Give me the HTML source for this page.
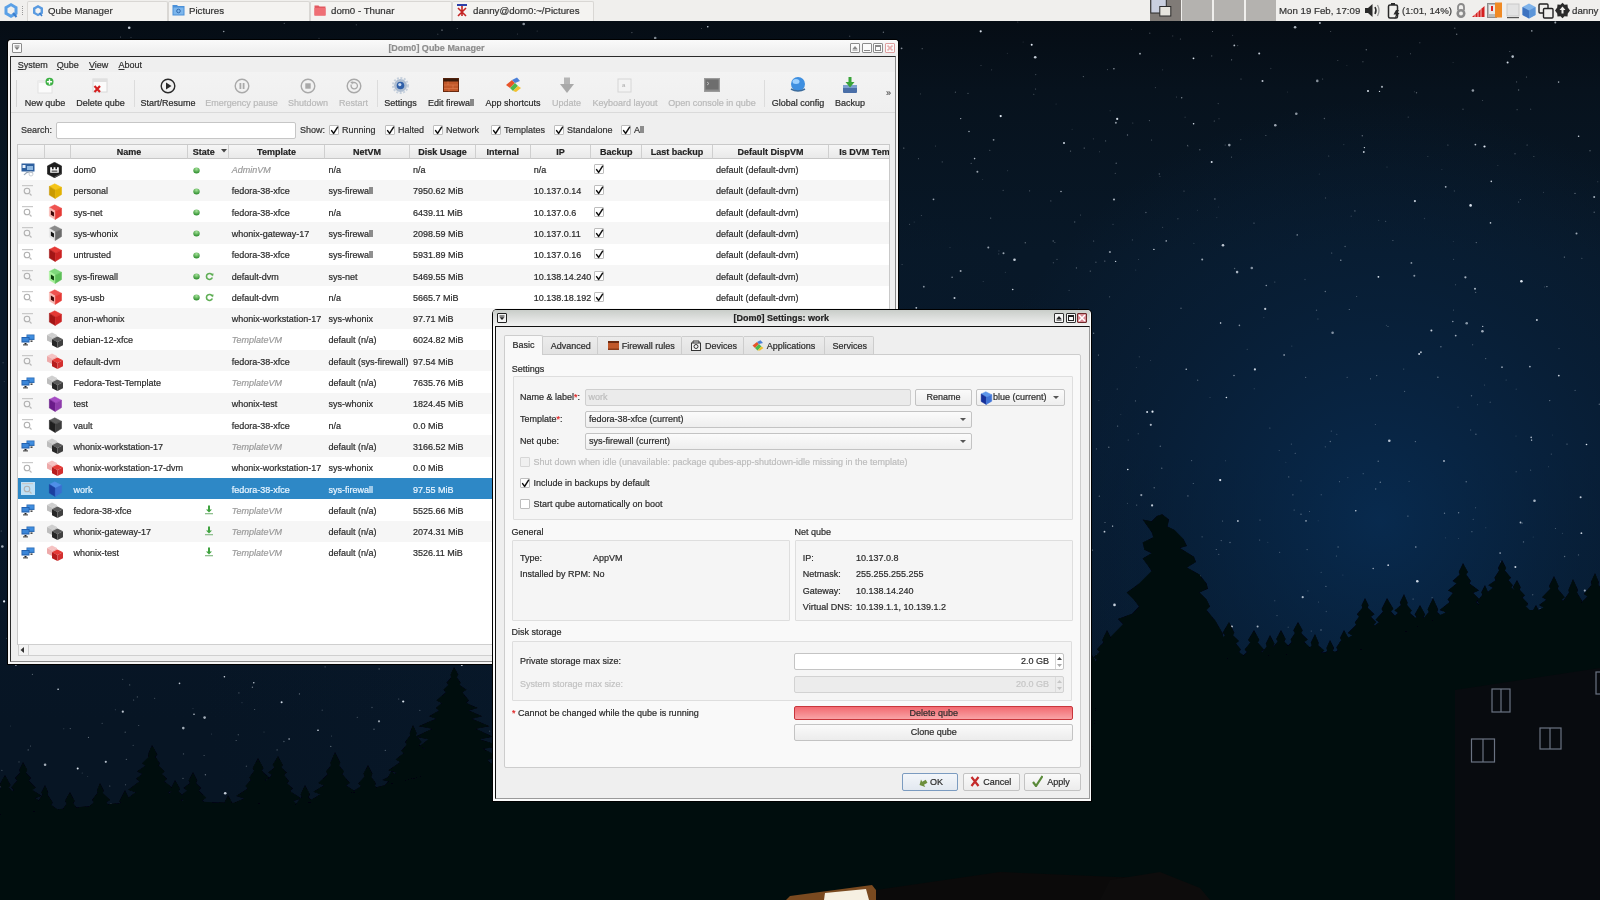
<!DOCTYPE html>
<html><head><meta charset="utf-8"><title>Qubes</title><style>
*{margin:0;padding:0;box-sizing:border-box}
html,body{width:1600px;height:900px;overflow:hidden;background:#070d15}
body{position:relative;font-family:"Liberation Sans",sans-serif;font-size:9px;color:#2b2b2b}
#ui{-webkit-text-stroke:0.2px currentColor}
#bg{position:absolute;left:0;top:0}
.a{position:absolute;white-space:nowrap}
svg{display:block}
/* taskbar */
#tb{position:absolute;left:0;top:0;width:1600px;height:21px;background:#f0efed;}
.tbb{position:absolute;top:1px;height:20px;background:#f4f3f1;border:1px solid #d9d7d4;border-bottom:none;border-radius:2px 2px 0 0}
.tbt{position:absolute;top:5px;font-size:9.7px;color:#333;white-space:nowrap}
/* windows */
.win{position:absolute;background:#f9f9f9;border:1px solid #1b1b1b;border-radius:4px 4px 0 0}
.ttl{position:absolute;left:0;right:0;top:0;height:16px;background:linear-gradient(#fbfbfb,#eeeeee)}
.inner{position:absolute;background:#efefef;border:1px solid #141414;border-bottom-color:#7a7a7a;border-right-color:#555}
.tbtn{position:absolute;width:10px;height:10px;border:1px solid #8a8a8a;border-radius:1px;background:#fbfbfb}
.menu span{position:absolute;top:3px;font-size:9.6px;color:#2e2e2e}
.tool{position:absolute;top:0;height:41px}
.tl{position:absolute;top:25px;font-size:9px;color:#2b2b2b;white-space:nowrap;transform:translateX(-50%)}
.tl.d{color:#b9b9b9}
.ico{position:absolute;top:5px;transform:translateX(-50%)}
.hdr{position:absolute;top:0;height:14.5px;background:linear-gradient(#f6f6f6,#e9e9e9);border-right:1px solid #cfcfcf;border-bottom:1px solid #c7c7c7;font-weight:bold;font-size:9px;color:#222;text-align:center;line-height:14px}
.row{position:absolute;left:0;width:871px;height:21.3px}
.row.alt{background:#f6f6f6}
.row.sel{background:#2e88c6;color:#e9f5ff}
.c{position:absolute;top:6.5px;font-size:9px;white-space:nowrap}
.it{font-style:italic;color:#9a9a9a}
.sel .it{color:#cfe6f7}
.chk{position:absolute;width:10px;height:10px;border:1px solid #bdbdbd;background:#fff;border-radius:1px}
.chk svg{position:absolute;left:0;top:0}
.lbl{position:absolute;font-size:9px;color:#2b2b2b;white-space:nowrap}
.grp{position:absolute;border:1px solid #dedede;background:#f5f5f5;border-radius:1px}
.btn{position:absolute;border:1px solid #c3c3c3;border-radius:2px;background:linear-gradient(#fafafa,#ececec);font-size:9px;color:#2b2b2b;text-align:center}
.combo{position:absolute;border:1px solid #c3c3c3;border-radius:2px;background:linear-gradient(#fbfbfb,#eeeeee);font-size:9px;color:#2b2b2b}
.arr{position:absolute;width:0;height:0;border-left:3.5px solid transparent;border-right:3.5px solid transparent;border-top:4px solid #4a4a4a}
</style></head>
<body>
<svg id="bg" width="1600" height="900" viewBox="0 0 1600 900">
<defs>
<linearGradient id="sky" x1="0" y1="0" x2="0" y2="900" gradientUnits="userSpaceOnUse">
<stop offset="0" stop-color="#050b12"/><stop offset="0.1" stop-color="#07121d"/><stop offset="0.28" stop-color="#081828"/><stop offset="0.5" stop-color="#08182a"/><stop offset="0.8" stop-color="#071524"/><stop offset="1" stop-color="#071524"/>
</linearGradient>
<radialGradient id="glow" cx="1380" cy="520" r="420" gradientUnits="userSpaceOnUse">
<stop offset="0" stop-color="#082c52" stop-opacity="0.9"/><stop offset="0.6" stop-color="#08284a" stop-opacity="0.35"/><stop offset="1" stop-color="#0b2a4c" stop-opacity="0"/>
</radialGradient>
<radialGradient id="glow2" cx="700" cy="650" r="500" gradientUnits="userSpaceOnUse">
<stop offset="0" stop-color="#0a2440" stop-opacity="0.25"/><stop offset="1" stop-color="#0a2440" stop-opacity="0"/>
</radialGradient>
<filter id="soft" x="-5%" y="-5%" width="110%" height="110%"><feGaussianBlur stdDeviation="0.7"/></filter></defs>
<rect width="1600" height="900" fill="url(#sky)"/>
<rect width="1600" height="900" fill="url(#glow2)"/>
<rect width="1600" height="900" fill="url(#glow)"/>
<g fill="#e6eef8"><circle cx="1023.1" cy="42.0" r="0.5" fill-opacity="0.19"/><circle cx="164.0" cy="613.1" r="0.7" fill-opacity="0.28"/><circle cx="47.7" cy="196.5" r="0.5" fill-opacity="0.32"/><circle cx="1145.6" cy="581.7" r="0.6" fill-opacity="0.33"/><circle cx="1295.1" cy="27.2" r="1.3" fill-opacity="0.74"/><circle cx="444.6" cy="193.8" r="0.7" fill-opacity="0.59"/><circle cx="154.7" cy="698.3" r="0.5" fill-opacity="0.37"/><circle cx="858.0" cy="798.5" r="0.7" fill-opacity="0.24"/><circle cx="1005.8" cy="728.6" r="0.5" fill-opacity="0.36"/><circle cx="73.3" cy="203.9" r="0.5" fill-opacity="0.41"/><circle cx="1386.4" cy="325.3" r="0.6" fill-opacity="0.20"/><circle cx="568.4" cy="556.8" r="0.7" fill-opacity="0.34"/><circle cx="974.6" cy="158.6" r="0.8" fill-opacity="0.76"/><circle cx="431.9" cy="760.5" r="0.5" fill-opacity="0.36"/><circle cx="1348.6" cy="641.2" r="0.5" fill-opacity="0.39"/><circle cx="641.9" cy="74.8" r="1.1" fill-opacity="0.94"/><circle cx="503.5" cy="545.0" r="0.7" fill-opacity="0.29"/><circle cx="423.8" cy="218.8" r="0.6" fill-opacity="0.37"/><circle cx="685.5" cy="487.7" r="0.5" fill-opacity="0.30"/><circle cx="145.5" cy="59.6" r="0.7" fill-opacity="0.20"/><circle cx="1088.8" cy="497.9" r="0.7" fill-opacity="0.45"/><circle cx="846.6" cy="796.9" r="0.7" fill-opacity="0.86"/><circle cx="183.3" cy="728.1" r="1.3" fill-opacity="0.70"/><circle cx="469.6" cy="148.2" r="0.7" fill-opacity="0.41"/><circle cx="421.4" cy="421.5" r="0.5" fill-opacity="0.41"/><circle cx="477.5" cy="531.9" r="0.5" fill-opacity="0.26"/><circle cx="258.5" cy="782.9" r="0.7" fill-opacity="0.82"/><circle cx="781.8" cy="111.3" r="0.6" fill-opacity="0.22"/><circle cx="385.4" cy="474.8" r="0.7" fill-opacity="0.30"/><circle cx="110.7" cy="629.0" r="0.8" fill-opacity="0.85"/><circle cx="1515.0" cy="153.8" r="0.7" fill-opacity="0.28"/><circle cx="338.9" cy="452.4" r="0.8" fill-opacity="0.87"/><circle cx="638.4" cy="558.0" r="0.7" fill-opacity="0.29"/><circle cx="396.6" cy="73.1" r="0.7" fill-opacity="0.22"/><circle cx="352.3" cy="78.7" r="0.5" fill-opacity="0.17"/><circle cx="50.3" cy="285.7" r="0.6" fill-opacity="0.35"/><circle cx="342.8" cy="127.6" r="1.1" fill-opacity="0.81"/><circle cx="388.8" cy="399.4" r="0.5" fill-opacity="0.18"/><circle cx="689.7" cy="360.0" r="0.7" fill-opacity="0.17"/><circle cx="1045.5" cy="537.7" r="0.7" fill-opacity="0.25"/><circle cx="1378.7" cy="220.4" r="0.6" fill-opacity="0.19"/><circle cx="293.6" cy="391.2" r="0.7" fill-opacity="0.75"/><circle cx="1378.2" cy="461.2" r="0.7" fill-opacity="0.40"/><circle cx="1550.4" cy="761.2" r="0.8" fill-opacity="0.73"/><circle cx="770.2" cy="712.0" r="0.8" fill-opacity="0.72"/><circle cx="1576.5" cy="233.6" r="1.0" fill-opacity="0.68"/><circle cx="1114.5" cy="604.9" r="1.3" fill-opacity="0.87"/><circle cx="247.7" cy="258.8" r="1.1" fill-opacity="0.88"/><circle cx="97.5" cy="272.3" r="0.6" fill-opacity="0.30"/><circle cx="1364.4" cy="147.6" r="0.7" fill-opacity="0.93"/><circle cx="109.6" cy="76.2" r="1.0" fill-opacity="0.60"/><circle cx="1424.5" cy="218.5" r="0.7" fill-opacity="0.17"/><circle cx="1051.8" cy="473.1" r="0.6" fill-opacity="0.21"/><circle cx="1145.9" cy="212.5" r="0.7" fill-opacity="0.34"/><circle cx="731.6" cy="763.4" r="0.7" fill-opacity="0.76"/><circle cx="1597.5" cy="816.9" r="0.5" fill-opacity="0.30"/><circle cx="211.9" cy="300.5" r="0.5" fill-opacity="0.26"/><circle cx="252.4" cy="687.3" r="0.7" fill-opacity="0.45"/><circle cx="1291.4" cy="444.1" r="0.7" fill-opacity="0.24"/><circle cx="1061.4" cy="771.3" r="0.5" fill-opacity="0.42"/><circle cx="1187.9" cy="146.0" r="0.5" fill-opacity="0.37"/><circle cx="325.8" cy="528.1" r="0.6" fill-opacity="0.23"/><circle cx="1453.1" cy="62.5" r="0.6" fill-opacity="0.16"/><circle cx="533.7" cy="126.4" r="0.8" fill-opacity="0.88"/><circle cx="882.7" cy="363.3" r="0.5" fill-opacity="0.43"/><circle cx="1105.6" cy="140.9" r="0.6" fill-opacity="0.32"/><circle cx="237.0" cy="123.7" r="0.5" fill-opacity="0.42"/><circle cx="336.1" cy="221.1" r="0.7" fill-opacity="0.42"/><circle cx="650.2" cy="517.3" r="0.5" fill-opacity="0.41"/><circle cx="1561.9" cy="669.0" r="0.7" fill-opacity="0.63"/><circle cx="1479.2" cy="646.3" r="0.7" fill-opacity="0.41"/><circle cx="1297.2" cy="234.9" r="0.7" fill-opacity="0.72"/><circle cx="62.0" cy="397.6" r="0.6" fill-opacity="0.25"/><circle cx="1312.9" cy="717.3" r="0.7" fill-opacity="0.21"/><circle cx="525.2" cy="711.8" r="0.9" fill-opacity="0.71"/><circle cx="815.0" cy="564.3" r="0.9" fill-opacity="0.97"/><circle cx="184.5" cy="796.4" r="0.6" fill-opacity="0.16"/><circle cx="954.5" cy="297.9" r="1.0" fill-opacity="0.82"/><circle cx="818.3" cy="329.4" r="0.6" fill-opacity="0.16"/><circle cx="697.7" cy="436.9" r="1.3" fill-opacity="0.87"/><circle cx="1187.1" cy="557.2" r="0.5" fill-opacity="0.43"/><circle cx="1473.2" cy="519.3" r="0.5" fill-opacity="0.37"/><circle cx="480.5" cy="268.8" r="0.6" fill-opacity="0.36"/><circle cx="887.1" cy="175.1" r="0.6" fill-opacity="0.35"/><circle cx="1444.5" cy="513.2" r="0.7" fill-opacity="0.40"/><circle cx="486.2" cy="189.7" r="1.1" fill-opacity="0.84"/><circle cx="744.0" cy="374.8" r="0.6" fill-opacity="0.39"/><circle cx="1535.7" cy="609.3" r="0.6" fill-opacity="0.30"/><circle cx="1012.7" cy="289.5" r="0.8" fill-opacity="0.85"/><circle cx="359.4" cy="180.9" r="0.5" fill-opacity="0.45"/><circle cx="978.0" cy="635.3" r="0.7" fill-opacity="0.32"/><circle cx="1149.4" cy="328.4" r="0.5" fill-opacity="0.35"/><circle cx="8.9" cy="621.3" r="0.7" fill-opacity="0.90"/><circle cx="350.1" cy="663.7" r="0.6" fill-opacity="0.17"/><circle cx="398.7" cy="699.0" r="0.6" fill-opacity="0.35"/><circle cx="1580.6" cy="497.2" r="1.0" fill-opacity="0.83"/><circle cx="1150.8" cy="424.8" r="1.1" fill-opacity="0.75"/><circle cx="254.7" cy="709.5" r="0.5" fill-opacity="0.40"/><circle cx="443.7" cy="642.6" r="0.5" fill-opacity="0.23"/><circle cx="124.0" cy="250.0" r="0.6" fill-opacity="0.42"/><circle cx="128.9" cy="142.4" r="0.5" fill-opacity="0.36"/><circle cx="102.8" cy="347.3" r="0.6" fill-opacity="0.17"/><circle cx="1332.6" cy="332.8" r="1.3" fill-opacity="0.56"/><circle cx="1409.1" cy="481.4" r="0.6" fill-opacity="0.24"/><circle cx="624.0" cy="733.5" r="1.1" fill-opacity="0.89"/><circle cx="873.8" cy="503.4" r="0.5" fill-opacity="0.23"/><circle cx="777.0" cy="332.3" r="0.6" fill-opacity="0.37"/><circle cx="1344.8" cy="755.8" r="1.1" fill-opacity="0.56"/><circle cx="630.4" cy="472.4" r="0.7" fill-opacity="0.28"/><circle cx="1387.0" cy="167.0" r="0.6" fill-opacity="0.21"/><circle cx="523.0" cy="629.5" r="0.6" fill-opacity="0.23"/><circle cx="131.0" cy="37.5" r="0.6" fill-opacity="0.22"/><circle cx="109.8" cy="785.9" r="0.5" fill-opacity="0.43"/><circle cx="319.0" cy="38.3" r="0.5" fill-opacity="0.29"/><circle cx="183.0" cy="778.3" r="0.6" fill-opacity="0.38"/><circle cx="268.5" cy="506.6" r="0.7" fill-opacity="0.90"/><circle cx="262.0" cy="270.2" r="0.6" fill-opacity="0.32"/><circle cx="1452.8" cy="321.5" r="0.8" fill-opacity="0.58"/><circle cx="1105.0" cy="522.5" r="0.6" fill-opacity="0.41"/><circle cx="960.7" cy="118.6" r="0.7" fill-opacity="0.71"/><circle cx="685.4" cy="317.7" r="0.6" fill-opacity="0.15"/><circle cx="672.1" cy="413.2" r="0.6" fill-opacity="0.34"/><circle cx="1325.9" cy="586.4" r="0.7" fill-opacity="0.31"/><circle cx="1040.7" cy="513.5" r="1.0" fill-opacity="0.76"/><circle cx="1321.2" cy="494.8" r="0.5" fill-opacity="0.40"/><circle cx="138.7" cy="725.5" r="0.6" fill-opacity="0.32"/><circle cx="1069.1" cy="290.4" r="0.6" fill-opacity="0.20"/><circle cx="339.4" cy="658.7" r="0.7" fill-opacity="0.36"/><circle cx="442.0" cy="30.1" r="0.7" fill-opacity="0.66"/><circle cx="650.3" cy="465.0" r="0.6" fill-opacity="0.34"/><circle cx="785.3" cy="654.8" r="0.5" fill-opacity="0.27"/><circle cx="389.3" cy="551.8" r="0.7" fill-opacity="0.31"/><circle cx="680.8" cy="617.3" r="0.7" fill-opacity="0.29"/><circle cx="490.6" cy="206.0" r="0.9" fill-opacity="0.60"/><circle cx="857.4" cy="630.2" r="0.5" fill-opacity="0.37"/><circle cx="442.4" cy="492.5" r="1.1" fill-opacity="0.68"/><circle cx="160.8" cy="176.9" r="0.5" fill-opacity="0.24"/><circle cx="1132.8" cy="123.0" r="0.5" fill-opacity="0.32"/><circle cx="1115.9" cy="122.8" r="1.0" fill-opacity="0.60"/><circle cx="19.6" cy="248.9" r="0.6" fill-opacity="0.21"/><circle cx="82.2" cy="773.0" r="0.5" fill-opacity="0.27"/><circle cx="118.5" cy="524.3" r="0.5" fill-opacity="0.39"/><circle cx="1518.6" cy="90.0" r="0.7" fill-opacity="0.38"/><circle cx="970.1" cy="653.0" r="0.7" fill-opacity="0.26"/><circle cx="1453.6" cy="259.3" r="0.6" fill-opacity="0.24"/><circle cx="993.6" cy="508.5" r="0.8" fill-opacity="0.83"/><circle cx="423.4" cy="86.8" r="0.7" fill-opacity="0.17"/><circle cx="4.3" cy="381.5" r="0.6" fill-opacity="0.16"/><circle cx="461.0" cy="247.6" r="0.7" fill-opacity="0.86"/><circle cx="1478.3" cy="650.7" r="0.7" fill-opacity="0.39"/><circle cx="316.5" cy="113.6" r="0.5" fill-opacity="0.42"/><circle cx="1322.6" cy="79.0" r="0.6" fill-opacity="0.33"/><circle cx="1318.8" cy="757.1" r="0.6" fill-opacity="0.36"/><circle cx="1119.6" cy="774.3" r="0.6" fill-opacity="0.28"/><circle cx="956.9" cy="731.8" r="1.1" fill-opacity="0.66"/><circle cx="146.1" cy="789.6" r="1.1" fill-opacity="0.81"/><circle cx="33.2" cy="632.3" r="1.1" fill-opacity="0.57"/><circle cx="1210.0" cy="397.5" r="0.6" fill-opacity="0.20"/><circle cx="936.5" cy="528.6" r="0.5" fill-opacity="0.29"/><circle cx="653.4" cy="278.2" r="0.5" fill-opacity="0.25"/><circle cx="1109.9" cy="252.0" r="1.1" fill-opacity="0.57"/><circle cx="140.9" cy="223.4" r="0.6" fill-opacity="0.41"/><circle cx="1319.9" cy="22.9" r="1.0" fill-opacity="0.74"/><circle cx="300.1" cy="310.7" r="1.3" fill-opacity="0.75"/><circle cx="82.6" cy="235.1" r="0.6" fill-opacity="0.28"/><circle cx="1117.2" cy="118.9" r="1.1" fill-opacity="0.91"/><circle cx="1135.7" cy="270.0" r="0.6" fill-opacity="0.18"/><circle cx="1587.6" cy="750.5" r="0.5" fill-opacity="0.34"/><circle cx="246.4" cy="766.3" r="0.7" fill-opacity="0.23"/><circle cx="1335.6" cy="804.2" r="0.7" fill-opacity="0.19"/><circle cx="305.0" cy="500.3" r="0.8" fill-opacity="0.94"/><circle cx="442.0" cy="652.4" r="0.7" fill-opacity="0.23"/><circle cx="4.1" cy="601.4" r="1.1" fill-opacity="1.00"/><circle cx="783.4" cy="140.6" r="0.6" fill-opacity="0.25"/><circle cx="1220.6" cy="323.0" r="0.8" fill-opacity="0.99"/><circle cx="382.1" cy="327.6" r="1.0" fill-opacity="0.57"/><circle cx="1191.5" cy="584.8" r="1.0" fill-opacity="0.99"/><circle cx="1267.8" cy="542.3" r="0.5" fill-opacity="0.19"/><circle cx="1544.6" cy="286.9" r="0.6" fill-opacity="0.18"/><circle cx="1456.7" cy="34.2" r="0.7" fill-opacity="0.44"/><circle cx="119.7" cy="645.7" r="0.7" fill-opacity="0.36"/><circle cx="1039.7" cy="701.7" r="1.1" fill-opacity="0.72"/><circle cx="506.7" cy="595.5" r="1.1" fill-opacity="0.57"/><circle cx="109.5" cy="525.7" r="0.8" fill-opacity="0.89"/><circle cx="694.4" cy="100.6" r="0.5" fill-opacity="0.28"/><circle cx="1110.4" cy="742.9" r="0.5" fill-opacity="0.24"/><circle cx="599.7" cy="138.2" r="0.7" fill-opacity="0.35"/><circle cx="288.1" cy="161.7" r="0.6" fill-opacity="0.34"/><circle cx="385.3" cy="750.4" r="0.6" fill-opacity="0.34"/><circle cx="735.3" cy="554.1" r="1.0" fill-opacity="0.96"/><circle cx="1084.2" cy="148.1" r="0.6" fill-opacity="0.45"/><circle cx="478.6" cy="789.7" r="0.6" fill-opacity="0.40"/><circle cx="318.7" cy="329.0" r="0.5" fill-opacity="0.26"/><circle cx="574.3" cy="258.1" r="0.5" fill-opacity="0.44"/><circle cx="1053.2" cy="241.0" r="0.7" fill-opacity="0.38"/><circle cx="1557.8" cy="748.7" r="0.9" fill-opacity="0.90"/><circle cx="368.2" cy="661.9" r="0.5" fill-opacity="0.34"/><circle cx="1084.4" cy="597.3" r="0.5" fill-opacity="0.34"/><circle cx="1445.4" cy="537.8" r="0.6" fill-opacity="0.16"/><circle cx="583.8" cy="126.9" r="0.9" fill-opacity="0.89"/><circle cx="281.0" cy="127.5" r="0.6" fill-opacity="0.31"/><circle cx="1461.6" cy="684.7" r="0.6" fill-opacity="0.44"/><circle cx="472.2" cy="716.6" r="1.0" fill-opacity="0.98"/><circle cx="225.2" cy="793.3" r="1.3" fill-opacity="0.85"/><circle cx="635.9" cy="696.9" r="0.5" fill-opacity="0.39"/><circle cx="22.3" cy="450.2" r="0.7" fill-opacity="0.37"/><circle cx="419.5" cy="326.1" r="0.6" fill-opacity="0.18"/><circle cx="374.1" cy="42.0" r="1.1" fill-opacity="0.70"/><circle cx="976.1" cy="538.8" r="0.6" fill-opacity="0.42"/><circle cx="483.5" cy="347.8" r="0.5" fill-opacity="0.24"/><circle cx="788.2" cy="99.6" r="0.8" fill-opacity="0.72"/><circle cx="593.6" cy="779.6" r="0.7" fill-opacity="0.28"/><circle cx="1187.6" cy="145.3" r="0.5" fill-opacity="0.40"/><circle cx="985.0" cy="771.4" r="0.7" fill-opacity="0.26"/><circle cx="709.4" cy="780.5" r="0.7" fill-opacity="0.99"/><circle cx="587.7" cy="741.6" r="0.5" fill-opacity="0.27"/><circle cx="303.7" cy="119.5" r="1.0" fill-opacity="0.59"/><circle cx="339.4" cy="532.3" r="0.7" fill-opacity="0.90"/><circle cx="389.7" cy="122.5" r="0.5" fill-opacity="0.40"/><circle cx="886.7" cy="489.9" r="0.8" fill-opacity="0.70"/><circle cx="236.1" cy="740.6" r="0.5" fill-opacity="0.45"/><circle cx="864.3" cy="659.2" r="0.5" fill-opacity="0.19"/><circle cx="573.2" cy="651.2" r="0.5" fill-opacity="0.20"/><circle cx="83.8" cy="613.9" r="0.7" fill-opacity="0.17"/><circle cx="717.2" cy="310.9" r="0.6" fill-opacity="0.30"/><circle cx="1512.7" cy="56.6" r="1.3" fill-opacity="0.78"/><circle cx="732.9" cy="791.3" r="0.6" fill-opacity="0.40"/><circle cx="682.0" cy="108.2" r="0.6" fill-opacity="0.17"/><circle cx="129.3" cy="507.4" r="0.6" fill-opacity="0.34"/><circle cx="936.6" cy="590.3" r="0.7" fill-opacity="0.31"/><circle cx="725.9" cy="505.1" r="0.7" fill-opacity="0.18"/><circle cx="1047.5" cy="722.4" r="0.5" fill-opacity="0.28"/><circle cx="1420.9" cy="352.2" r="1.0" fill-opacity="0.74"/><circle cx="152.1" cy="362.6" r="0.6" fill-opacity="0.44"/><circle cx="1098.9" cy="400.5" r="0.5" fill-opacity="0.18"/><circle cx="154.5" cy="611.6" r="1.1" fill-opacity="0.58"/><circle cx="1530.6" cy="470.2" r="0.6" fill-opacity="0.26"/><circle cx="1064.5" cy="620.7" r="1.3" fill-opacity="0.57"/><circle cx="460.2" cy="271.3" r="0.7" fill-opacity="0.21"/><circle cx="1050.8" cy="200.9" r="0.7" fill-opacity="0.26"/><circle cx="1220.2" cy="480.1" r="1.1" fill-opacity="0.99"/><circle cx="1309.5" cy="511.6" r="0.5" fill-opacity="0.33"/><circle cx="1052.5" cy="575.4" r="0.6" fill-opacity="0.36"/><circle cx="494.4" cy="293.2" r="0.5" fill-opacity="0.32"/><circle cx="641.3" cy="135.2" r="0.5" fill-opacity="0.18"/><circle cx="848.8" cy="322.2" r="0.5" fill-opacity="0.26"/><circle cx="1154.6" cy="641.9" r="0.5" fill-opacity="0.42"/><circle cx="248.9" cy="624.0" r="0.5" fill-opacity="0.23"/><circle cx="1059.1" cy="409.6" r="0.6" fill-opacity="0.21"/><circle cx="819.8" cy="297.4" r="0.7" fill-opacity="0.35"/><circle cx="778.6" cy="554.4" r="0.6" fill-opacity="0.45"/><circle cx="87.7" cy="185.1" r="0.8" fill-opacity="0.89"/><circle cx="463.1" cy="117.7" r="0.6" fill-opacity="0.20"/><circle cx="608.3" cy="583.5" r="0.7" fill-opacity="0.39"/><circle cx="115.3" cy="709.7" r="0.5" fill-opacity="0.29"/><circle cx="124.6" cy="271.8" r="0.6" fill-opacity="0.36"/><circle cx="668.3" cy="113.9" r="0.6" fill-opacity="0.20"/><circle cx="1516.2" cy="389.2" r="0.6" fill-opacity="0.18"/><circle cx="1351.2" cy="216.2" r="0.7" fill-opacity="0.17"/><circle cx="1392.8" cy="617.2" r="0.5" fill-opacity="0.17"/><circle cx="1013.2" cy="445.4" r="0.6" fill-opacity="0.26"/><circle cx="1533.2" cy="537.1" r="0.5" fill-opacity="0.19"/><circle cx="315.6" cy="502.7" r="1.3" fill-opacity="0.58"/><circle cx="1522.1" cy="523.1" r="0.7" fill-opacity="0.38"/><circle cx="718.2" cy="759.5" r="0.7" fill-opacity="0.45"/><circle cx="517.1" cy="796.8" r="0.6" fill-opacity="0.17"/><circle cx="707.5" cy="263.7" r="0.5" fill-opacity="0.26"/><circle cx="118.7" cy="390.5" r="0.6" fill-opacity="0.40"/><circle cx="122.8" cy="711.7" r="1.1" fill-opacity="0.82"/><circle cx="615.2" cy="485.1" r="1.3" fill-opacity="0.95"/><circle cx="719.6" cy="668.2" r="0.6" fill-opacity="0.33"/><circle cx="802.2" cy="786.3" r="0.6" fill-opacity="0.44"/><circle cx="134.9" cy="537.6" r="0.7" fill-opacity="0.28"/><circle cx="703.1" cy="439.2" r="0.6" fill-opacity="0.43"/><circle cx="619.9" cy="640.0" r="0.5" fill-opacity="0.39"/><circle cx="1035.7" cy="74.6" r="0.7" fill-opacity="0.27"/><circle cx="403.2" cy="701.5" r="1.1" fill-opacity="0.94"/><circle cx="533.4" cy="487.0" r="0.6" fill-opacity="0.24"/><circle cx="1049.7" cy="550.4" r="0.7" fill-opacity="0.43"/><circle cx="495.3" cy="322.6" r="0.8" fill-opacity="0.85"/><circle cx="1326.3" cy="611.5" r="0.7" fill-opacity="0.18"/><circle cx="1072.7" cy="427.8" r="0.6" fill-opacity="0.20"/><circle cx="342.7" cy="778.2" r="0.5" fill-opacity="0.45"/><circle cx="247.9" cy="258.0" r="1.1" fill-opacity="0.90"/><circle cx="1336.2" cy="727.2" r="0.6" fill-opacity="0.41"/><circle cx="988.9" cy="498.6" r="0.5" fill-opacity="0.40"/><circle cx="1233.8" cy="667.6" r="0.6" fill-opacity="0.16"/><circle cx="582.9" cy="596.2" r="1.1" fill-opacity="0.68"/><circle cx="1197.7" cy="380.2" r="0.6" fill-opacity="0.44"/><circle cx="1255.0" cy="743.4" r="0.7" fill-opacity="0.43"/><circle cx="1575.1" cy="390.4" r="0.6" fill-opacity="0.30"/><circle cx="669.9" cy="151.3" r="0.7" fill-opacity="0.19"/><circle cx="400.0" cy="533.7" r="1.1" fill-opacity="0.97"/><circle cx="1138.2" cy="433.7" r="0.5" fill-opacity="0.38"/><circle cx="436.5" cy="744.4" r="0.6" fill-opacity="0.18"/><circle cx="1456.8" cy="673.7" r="0.7" fill-opacity="0.74"/><circle cx="634.3" cy="320.4" r="0.5" fill-opacity="0.26"/><circle cx="45.1" cy="764.8" r="1.3" fill-opacity="0.70"/><circle cx="233.7" cy="52.6" r="1.0" fill-opacity="0.86"/><circle cx="222.1" cy="585.0" r="0.5" fill-opacity="0.42"/><circle cx="30.4" cy="194.1" r="0.7" fill-opacity="0.33"/><circle cx="677.2" cy="641.4" r="0.5" fill-opacity="0.16"/><circle cx="671.7" cy="655.5" r="0.5" fill-opacity="0.40"/><circle cx="799.7" cy="449.8" r="0.7" fill-opacity="0.22"/><circle cx="229.7" cy="364.5" r="0.5" fill-opacity="0.32"/><circle cx="299.7" cy="555.2" r="0.6" fill-opacity="0.17"/><circle cx="841.7" cy="426.8" r="1.1" fill-opacity="0.56"/><circle cx="1397.3" cy="56.7" r="0.6" fill-opacity="0.23"/><circle cx="26.0" cy="651.2" r="0.7" fill-opacity="0.35"/><circle cx="165.9" cy="486.4" r="0.8" fill-opacity="0.57"/><circle cx="873.6" cy="671.2" r="0.7" fill-opacity="0.29"/><circle cx="1112.6" cy="526.1" r="0.7" fill-opacity="0.87"/><circle cx="1509.8" cy="51.5" r="0.5" fill-opacity="0.42"/><circle cx="505.0" cy="269.4" r="0.7" fill-opacity="0.29"/><circle cx="58.6" cy="538.2" r="0.5" fill-opacity="0.41"/><circle cx="531.1" cy="121.3" r="0.6" fill-opacity="0.37"/><circle cx="1431.4" cy="330.5" r="1.0" fill-opacity="0.86"/><circle cx="587.8" cy="658.2" r="0.5" fill-opacity="0.37"/><circle cx="126.3" cy="502.8" r="1.1" fill-opacity="0.68"/><circle cx="164.2" cy="283.7" r="0.6" fill-opacity="0.33"/><circle cx="681.8" cy="572.4" r="0.5" fill-opacity="0.37"/><circle cx="1458.6" cy="512.7" r="0.7" fill-opacity="0.44"/><circle cx="1516.6" cy="81.9" r="0.6" fill-opacity="0.30"/><circle cx="1199.8" cy="149.7" r="0.7" fill-opacity="0.35"/><circle cx="701.1" cy="122.7" r="0.7" fill-opacity="0.26"/><circle cx="612.6" cy="474.7" r="0.7" fill-opacity="0.28"/><circle cx="593.5" cy="376.3" r="0.5" fill-opacity="0.31"/><circle cx="636.9" cy="540.3" r="0.5" fill-opacity="0.16"/><circle cx="297.7" cy="435.2" r="0.7" fill-opacity="0.67"/><circle cx="416.5" cy="378.1" r="0.9" fill-opacity="0.86"/><circle cx="1597.8" cy="181.7" r="0.5" fill-opacity="0.29"/><circle cx="1437.9" cy="377.2" r="0.7" fill-opacity="0.44"/><circle cx="1578.5" cy="554.9" r="0.7" fill-opacity="0.31"/><circle cx="1426.1" cy="701.4" r="0.7" fill-opacity="0.34"/><circle cx="1269.9" cy="428.0" r="0.5" fill-opacity="0.39"/><circle cx="378.8" cy="416.2" r="0.7" fill-opacity="0.26"/><circle cx="1285.9" cy="462.2" r="0.5" fill-opacity="0.17"/><circle cx="637.1" cy="594.1" r="0.6" fill-opacity="0.38"/><circle cx="1317.3" cy="80.9" r="1.3" fill-opacity="0.58"/><circle cx="745.3" cy="434.9" r="0.7" fill-opacity="0.34"/><circle cx="291.1" cy="793.1" r="0.5" fill-opacity="0.40"/><circle cx="829.0" cy="264.7" r="0.7" fill-opacity="0.22"/><circle cx="1516.0" cy="436.1" r="0.5" fill-opacity="0.23"/><circle cx="1016.1" cy="461.6" r="0.6" fill-opacity="0.33"/><circle cx="149.5" cy="533.5" r="0.7" fill-opacity="0.20"/><circle cx="1054.0" cy="597.1" r="0.7" fill-opacity="0.16"/><circle cx="1382.0" cy="86.8" r="1.1" fill-opacity="0.67"/><circle cx="337.3" cy="478.6" r="0.5" fill-opacity="0.30"/><circle cx="1003.5" cy="253.2" r="1.0" fill-opacity="0.66"/><circle cx="1291.8" cy="346.1" r="0.7" fill-opacity="0.17"/><circle cx="703.4" cy="408.4" r="0.7" fill-opacity="0.19"/><circle cx="1378.4" cy="276.8" r="0.9" fill-opacity="0.99"/><circle cx="209.2" cy="317.7" r="0.6" fill-opacity="0.22"/><circle cx="196.0" cy="380.8" r="0.5" fill-opacity="0.24"/><circle cx="614.6" cy="513.1" r="0.5" fill-opacity="0.39"/><circle cx="1494.0" cy="597.5" r="0.5" fill-opacity="0.30"/><circle cx="823.6" cy="420.0" r="0.5" fill-opacity="0.18"/><circle cx="629.2" cy="386.9" r="0.7" fill-opacity="0.26"/><circle cx="80.9" cy="416.9" r="1.3" fill-opacity="0.85"/><circle cx="457.2" cy="28.5" r="0.5" fill-opacity="0.41"/><circle cx="1164.0" cy="631.6" r="0.6" fill-opacity="0.17"/><circle cx="898.9" cy="311.3" r="0.6" fill-opacity="0.30"/><circle cx="1223.0" cy="245.2" r="1.3" fill-opacity="0.82"/><circle cx="205.9" cy="99.2" r="0.6" fill-opacity="0.32"/><circle cx="585.0" cy="137.1" r="0.6" fill-opacity="0.30"/><circle cx="72.5" cy="131.4" r="0.6" fill-opacity="0.31"/><circle cx="238.3" cy="734.7" r="0.7" fill-opacity="0.25"/><circle cx="628.7" cy="514.0" r="1.1" fill-opacity="0.70"/><circle cx="1325.3" cy="446.8" r="0.6" fill-opacity="0.29"/><circle cx="26.6" cy="286.3" r="0.6" fill-opacity="0.33"/><circle cx="1274.8" cy="600.8" r="0.5" fill-opacity="0.33"/><circle cx="424.8" cy="545.2" r="1.1" fill-opacity="0.81"/><circle cx="1154.2" cy="487.7" r="0.7" fill-opacity="0.37"/><circle cx="1239.4" cy="325.4" r="0.8" fill-opacity="0.56"/><circle cx="1517.1" cy="109.7" r="0.6" fill-opacity="0.28"/><circle cx="660.7" cy="184.7" r="0.7" fill-opacity="0.43"/><circle cx="1396.5" cy="609.2" r="0.5" fill-opacity="0.31"/><circle cx="897.4" cy="818.5" r="0.6" fill-opacity="0.24"/><circle cx="277.1" cy="749.9" r="0.6" fill-opacity="0.35"/><circle cx="1388.2" cy="565.2" r="0.9" fill-opacity="0.82"/><circle cx="307.6" cy="218.7" r="0.5" fill-opacity="0.43"/><circle cx="1571.6" cy="637.4" r="0.7" fill-opacity="0.36"/><circle cx="507.3" cy="300.3" r="1.3" fill-opacity="0.67"/><circle cx="195.0" cy="561.9" r="0.6" fill-opacity="0.40"/><circle cx="1527.4" cy="664.1" r="0.6" fill-opacity="0.44"/><circle cx="126.4" cy="759.4" r="0.7" fill-opacity="0.29"/><circle cx="323.3" cy="451.8" r="1.3" fill-opacity="0.67"/><circle cx="174.8" cy="613.2" r="0.5" fill-opacity="0.35"/><circle cx="849.7" cy="531.1" r="0.6" fill-opacity="0.25"/><circle cx="755.8" cy="565.6" r="0.7" fill-opacity="0.44"/><circle cx="252.7" cy="543.0" r="1.0" fill-opacity="0.76"/><circle cx="319.1" cy="791.2" r="0.7" fill-opacity="0.17"/><circle cx="1230.0" cy="542.5" r="0.7" fill-opacity="0.37"/><circle cx="1498.7" cy="750.8" r="0.5" fill-opacity="0.43"/><circle cx="58.1" cy="689.3" r="0.8" fill-opacity="0.97"/><circle cx="1539.4" cy="761.0" r="0.7" fill-opacity="0.68"/><circle cx="964.5" cy="762.9" r="0.6" fill-opacity="0.45"/><circle cx="869.3" cy="416.1" r="1.1" fill-opacity="0.76"/><circle cx="308.5" cy="111.9" r="0.6" fill-opacity="0.34"/><circle cx="1149.8" cy="33.2" r="0.6" fill-opacity="0.32"/><circle cx="1211.7" cy="162.0" r="1.0" fill-opacity="0.92"/><circle cx="824.4" cy="91.2" r="0.5" fill-opacity="0.44"/><circle cx="763.9" cy="768.8" r="0.6" fill-opacity="0.22"/><circle cx="1206.0" cy="783.3" r="0.7" fill-opacity="0.32"/><circle cx="418.5" cy="308.9" r="0.7" fill-opacity="0.19"/><circle cx="490.9" cy="345.5" r="0.7" fill-opacity="0.38"/><circle cx="1104.5" cy="531.7" r="0.9" fill-opacity="0.83"/><circle cx="350.6" cy="128.6" r="0.7" fill-opacity="0.45"/><circle cx="597.8" cy="582.1" r="1.1" fill-opacity="0.91"/><circle cx="1321.0" cy="630.0" r="0.7" fill-opacity="0.41"/><circle cx="131.0" cy="378.5" r="0.5" fill-opacity="0.43"/><circle cx="179.5" cy="683.4" r="0.8" fill-opacity="0.81"/><circle cx="239.8" cy="283.8" r="0.5" fill-opacity="0.35"/><circle cx="1147.1" cy="412.1" r="1.0" fill-opacity="0.91"/><circle cx="725.5" cy="431.6" r="0.5" fill-opacity="0.32"/><circle cx="1076.4" cy="267.9" r="0.6" fill-opacity="0.39"/><circle cx="1193.3" cy="483.5" r="0.6" fill-opacity="0.36"/><circle cx="865.9" cy="70.1" r="1.0" fill-opacity="0.56"/><circle cx="654.2" cy="635.6" r="1.3" fill-opacity="0.84"/><circle cx="672.6" cy="814.3" r="0.6" fill-opacity="0.26"/><circle cx="1092.4" cy="550.1" r="0.7" fill-opacity="0.41"/><circle cx="189.8" cy="814.3" r="0.5" fill-opacity="0.37"/><circle cx="356.3" cy="24.8" r="0.6" fill-opacity="0.29"/><circle cx="1150.6" cy="360.5" r="0.5" fill-opacity="0.22"/><circle cx="553.9" cy="242.0" r="1.3" fill-opacity="0.89"/><circle cx="51.5" cy="548.8" r="0.5" fill-opacity="0.22"/><circle cx="107.7" cy="496.0" r="0.7" fill-opacity="0.36"/><circle cx="77.9" cy="613.0" r="0.5" fill-opacity="0.31"/><circle cx="1207.0" cy="641.3" r="0.6" fill-opacity="0.22"/><circle cx="1466.2" cy="481.7" r="0.7" fill-opacity="0.40"/><circle cx="379.0" cy="721.3" r="1.1" fill-opacity="0.65"/><circle cx="480.8" cy="70.6" r="1.3" fill-opacity="0.96"/><circle cx="1001.6" cy="362.9" r="0.6" fill-opacity="0.43"/><circle cx="1074.1" cy="649.1" r="0.6" fill-opacity="0.27"/><circle cx="479.8" cy="168.7" r="0.5" fill-opacity="0.40"/><circle cx="481.2" cy="586.6" r="0.7" fill-opacity="0.80"/><circle cx="1548.5" cy="466.7" r="0.5" fill-opacity="0.23"/><circle cx="528.4" cy="85.1" r="0.6" fill-opacity="0.18"/><circle cx="1159.3" cy="174.0" r="0.7" fill-opacity="0.33"/><circle cx="63.3" cy="80.1" r="1.1" fill-opacity="0.88"/><circle cx="894.2" cy="404.6" r="0.9" fill-opacity="0.69"/><circle cx="1454.4" cy="191.0" r="0.7" fill-opacity="0.19"/><circle cx="1599.3" cy="404.2" r="0.7" fill-opacity="0.36"/><circle cx="634.6" cy="213.0" r="0.6" fill-opacity="0.26"/><circle cx="853.8" cy="308.7" r="0.7" fill-opacity="0.41"/><circle cx="745.6" cy="662.6" r="0.9" fill-opacity="0.96"/><circle cx="593.1" cy="352.3" r="0.5" fill-opacity="0.37"/><circle cx="26.0" cy="463.5" r="0.7" fill-opacity="0.28"/><circle cx="243.9" cy="285.2" r="0.5" fill-opacity="0.30"/><circle cx="1047.4" cy="568.5" r="0.6" fill-opacity="0.44"/><circle cx="1026.7" cy="413.5" r="0.6" fill-opacity="0.20"/><circle cx="1152.5" cy="411.7" r="1.1" fill-opacity="1.00"/><circle cx="1531.6" cy="440.1" r="0.7" fill-opacity="0.98"/><circle cx="1069.1" cy="631.9" r="0.7" fill-opacity="0.22"/><circle cx="1131.5" cy="29.3" r="0.6" fill-opacity="0.17"/><circle cx="1020.4" cy="767.3" r="1.3" fill-opacity="0.77"/><circle cx="10.6" cy="462.2" r="0.7" fill-opacity="0.37"/><circle cx="857.2" cy="250.8" r="0.7" fill-opacity="0.35"/><circle cx="1289.9" cy="748.0" r="0.5" fill-opacity="0.31"/><circle cx="385.6" cy="516.6" r="0.6" fill-opacity="0.23"/><circle cx="635.0" cy="319.7" r="0.7" fill-opacity="0.22"/><circle cx="1115.6" cy="261.4" r="0.7" fill-opacity="0.84"/><circle cx="1373.2" cy="628.1" r="0.6" fill-opacity="0.26"/><circle cx="761.6" cy="530.1" r="0.5" fill-opacity="0.30"/><circle cx="694.3" cy="647.9" r="0.5" fill-opacity="0.42"/><circle cx="1470.6" cy="205.4" r="1.3" fill-opacity="0.95"/><circle cx="760.8" cy="59.2" r="0.6" fill-opacity="0.42"/><circle cx="901.6" cy="48.3" r="0.9" fill-opacity="0.56"/><circle cx="331.5" cy="137.1" r="1.0" fill-opacity="0.97"/><circle cx="478.8" cy="472.0" r="0.6" fill-opacity="0.35"/><circle cx="864.9" cy="328.3" r="1.3" fill-opacity="0.88"/><circle cx="801.3" cy="799.5" r="0.6" fill-opacity="0.22"/><circle cx="121.6" cy="504.9" r="0.7" fill-opacity="0.27"/><circle cx="1237.7" cy="45.6" r="0.6" fill-opacity="0.30"/><circle cx="569.3" cy="773.0" r="0.7" fill-opacity="0.33"/><circle cx="608.1" cy="638.2" r="0.5" fill-opacity="0.36"/><circle cx="131.3" cy="145.1" r="0.7" fill-opacity="0.20"/><circle cx="623.4" cy="309.8" r="0.6" fill-opacity="0.28"/><circle cx="1218.2" cy="103.6" r="0.6" fill-opacity="0.28"/><circle cx="887.6" cy="347.6" r="0.6" fill-opacity="0.32"/><circle cx="955.1" cy="648.0" r="0.7" fill-opacity="0.68"/><circle cx="620.5" cy="89.6" r="0.8" fill-opacity="0.81"/><circle cx="271.3" cy="325.8" r="0.6" fill-opacity="0.23"/><circle cx="233.5" cy="155.4" r="0.6" fill-opacity="0.30"/><circle cx="123.1" cy="222.9" r="0.7" fill-opacity="0.30"/><circle cx="986.7" cy="387.4" r="0.5" fill-opacity="0.43"/><circle cx="531.5" cy="516.9" r="0.9" fill-opacity="0.75"/><circle cx="689.0" cy="679.2" r="0.7" fill-opacity="0.19"/><circle cx="513.1" cy="777.9" r="0.6" fill-opacity="0.20"/><circle cx="637.2" cy="276.7" r="1.3" fill-opacity="0.77"/><circle cx="921.4" cy="215.5" r="0.6" fill-opacity="0.26"/><circle cx="1491.3" cy="181.4" r="0.8" fill-opacity="0.86"/><circle cx="880.2" cy="782.5" r="0.7" fill-opacity="0.21"/><circle cx="1276.3" cy="685.4" r="0.6" fill-opacity="0.35"/><circle cx="222.7" cy="263.7" r="0.5" fill-opacity="0.36"/><circle cx="1262.5" cy="81.0" r="1.0" fill-opacity="0.81"/><circle cx="855.0" cy="758.9" r="1.0" fill-opacity="0.79"/><circle cx="1265.2" cy="308.9" r="1.1" fill-opacity="0.82"/><circle cx="1463.0" cy="109.3" r="0.7" fill-opacity="0.26"/><circle cx="1035.2" cy="57.3" r="1.3" fill-opacity="0.84"/><circle cx="1546.9" cy="286.6" r="0.7" fill-opacity="0.55"/><circle cx="414.0" cy="429.5" r="0.7" fill-opacity="0.36"/><circle cx="353.7" cy="320.5" r="0.7" fill-opacity="0.33"/><circle cx="800.7" cy="297.3" r="0.5" fill-opacity="0.24"/><circle cx="1472.9" cy="90.5" r="1.3" fill-opacity="0.61"/><circle cx="499.0" cy="385.4" r="0.6" fill-opacity="0.25"/><circle cx="156.2" cy="598.2" r="0.5" fill-opacity="0.24"/><circle cx="1296.3" cy="113.8" r="1.3" fill-opacity="0.60"/><circle cx="1280.1" cy="764.1" r="1.1" fill-opacity="0.63"/><circle cx="256.2" cy="468.8" r="0.8" fill-opacity="0.91"/><circle cx="1007.6" cy="170.7" r="0.6" fill-opacity="0.16"/><circle cx="982.6" cy="179.5" r="0.6" fill-opacity="0.15"/><circle cx="343.7" cy="244.1" r="0.5" fill-opacity="0.32"/><circle cx="1279.2" cy="450.4" r="0.5" fill-opacity="0.29"/><circle cx="419.8" cy="710.4" r="0.7" fill-opacity="0.24"/><circle cx="621.8" cy="335.3" r="0.6" fill-opacity="0.40"/><circle cx="987.8" cy="671.4" r="0.6" fill-opacity="0.43"/><circle cx="944.3" cy="558.3" r="0.5" fill-opacity="0.24"/><circle cx="292.9" cy="575.4" r="0.6" fill-opacity="0.33"/><circle cx="919.7" cy="359.6" r="0.7" fill-opacity="0.36"/><circle cx="1032.4" cy="819.9" r="0.6" fill-opacity="0.24"/><circle cx="299.4" cy="693.9" r="0.6" fill-opacity="0.44"/><circle cx="775.4" cy="177.7" r="0.7" fill-opacity="0.30"/><circle cx="792.0" cy="568.4" r="0.6" fill-opacity="0.30"/><circle cx="132.3" cy="46.6" r="0.9" fill-opacity="0.56"/><circle cx="359.7" cy="252.4" r="1.1" fill-opacity="0.88"/><circle cx="1225.5" cy="460.7" r="0.5" fill-opacity="0.23"/><circle cx="869.0" cy="812.7" r="0.5" fill-opacity="0.38"/><circle cx="706.2" cy="196.4" r="0.7" fill-opacity="0.40"/><circle cx="1202.2" cy="259.6" r="1.0" fill-opacity="0.67"/><circle cx="1379.5" cy="91.4" r="0.7" fill-opacity="0.90"/><circle cx="379.1" cy="668.9" r="0.6" fill-opacity="0.41"/><circle cx="976.4" cy="363.7" r="0.5" fill-opacity="0.39"/><circle cx="1288.7" cy="476.9" r="0.7" fill-opacity="0.31"/><circle cx="517.8" cy="583.8" r="0.6" fill-opacity="0.44"/><circle cx="823.1" cy="740.3" r="0.8" fill-opacity="0.98"/><circle cx="1257.1" cy="755.2" r="1.3" fill-opacity="0.61"/><circle cx="1385.7" cy="221.2" r="0.5" fill-opacity="0.38"/><circle cx="1082.0" cy="412.6" r="0.6" fill-opacity="0.34"/><circle cx="600.3" cy="82.3" r="0.7" fill-opacity="0.73"/><circle cx="1199.7" cy="576.4" r="1.0" fill-opacity="0.98"/><circle cx="523.7" cy="24.0" r="1.3" fill-opacity="0.59"/><circle cx="1555.4" cy="528.6" r="0.5" fill-opacity="0.39"/><circle cx="636.3" cy="794.6" r="1.0" fill-opacity="0.67"/><circle cx="1325.3" cy="291.5" r="0.7" fill-opacity="0.41"/><circle cx="1261.3" cy="735.5" r="0.7" fill-opacity="0.59"/><circle cx="1254.2" cy="388.7" r="0.5" fill-opacity="0.28"/><circle cx="1.1" cy="786.5" r="0.7" fill-opacity="0.42"/><circle cx="1411.4" cy="262.9" r="0.9" fill-opacity="0.59"/><circle cx="576.7" cy="87.8" r="0.7" fill-opacity="0.20"/><circle cx="634.1" cy="265.8" r="0.5" fill-opacity="0.28"/><circle cx="145.9" cy="98.0" r="0.5" fill-opacity="0.19"/><circle cx="361.9" cy="564.6" r="0.7" fill-opacity="0.25"/><circle cx="193.0" cy="708.6" r="0.6" fill-opacity="0.17"/><circle cx="612.9" cy="605.1" r="0.6" fill-opacity="0.26"/><circle cx="478.8" cy="327.4" r="0.8" fill-opacity="0.84"/><circle cx="1083.4" cy="76.6" r="0.7" fill-opacity="0.35"/><circle cx="704.2" cy="598.5" r="0.5" fill-opacity="0.43"/><circle cx="985.7" cy="375.0" r="0.5" fill-opacity="0.19"/><circle cx="197.1" cy="604.5" r="0.6" fill-opacity="0.24"/><circle cx="223.7" cy="243.0" r="0.7" fill-opacity="0.33"/><circle cx="1153.9" cy="249.4" r="0.7" fill-opacity="0.93"/><circle cx="1053.4" cy="262.7" r="0.7" fill-opacity="0.21"/><circle cx="626.8" cy="537.6" r="0.8" fill-opacity="0.77"/><circle cx="180.4" cy="420.7" r="0.7" fill-opacity="0.42"/><circle cx="19.3" cy="310.2" r="0.6" fill-opacity="0.41"/><circle cx="909.4" cy="313.6" r="0.6" fill-opacity="0.44"/><circle cx="1232.6" cy="35.3" r="0.6" fill-opacity="0.21"/><circle cx="1476.1" cy="779.0" r="0.6" fill-opacity="0.34"/><circle cx="801.7" cy="353.5" r="0.5" fill-opacity="0.34"/><circle cx="860.2" cy="143.8" r="0.5" fill-opacity="0.30"/><circle cx="325.1" cy="666.8" r="0.6" fill-opacity="0.33"/><circle cx="1221.2" cy="540.6" r="0.6" fill-opacity="0.36"/><circle cx="1167.9" cy="697.5" r="0.5" fill-opacity="0.43"/><circle cx="185.6" cy="510.6" r="0.7" fill-opacity="0.37"/><circle cx="1185.1" cy="117.3" r="0.7" fill-opacity="0.15"/><circle cx="794.3" cy="298.7" r="0.7" fill-opacity="0.23"/><circle cx="595.0" cy="620.3" r="1.3" fill-opacity="0.95"/><circle cx="1234.3" cy="45.4" r="0.9" fill-opacity="0.79"/><circle cx="420.7" cy="800.1" r="0.6" fill-opacity="0.29"/><circle cx="576.2" cy="420.7" r="0.6" fill-opacity="0.20"/><circle cx="1237.3" cy="735.6" r="0.5" fill-opacity="0.22"/><circle cx="814.1" cy="57.1" r="0.8" fill-opacity="0.57"/><circle cx="582.4" cy="756.3" r="0.5" fill-opacity="0.32"/><circle cx="1462.3" cy="613.1" r="0.6" fill-opacity="0.22"/><circle cx="1465.4" cy="277.3" r="1.1" fill-opacity="0.72"/><circle cx="803.3" cy="741.7" r="0.7" fill-opacity="0.44"/><circle cx="1526.5" cy="77.0" r="0.6" fill-opacity="0.38"/><circle cx="497.1" cy="90.9" r="0.6" fill-opacity="0.21"/><circle cx="902.1" cy="264.5" r="0.6" fill-opacity="0.26"/><circle cx="1555.0" cy="818.2" r="1.3" fill-opacity="0.96"/><circle cx="1216.8" cy="217.6" r="0.6" fill-opacity="0.16"/><circle cx="866.5" cy="529.5" r="0.5" fill-opacity="0.44"/><circle cx="2.3" cy="546.5" r="1.3" fill-opacity="0.69"/><circle cx="328.3" cy="806.5" r="0.5" fill-opacity="0.44"/><circle cx="227.8" cy="245.3" r="0.5" fill-opacity="0.42"/><circle cx="831.6" cy="581.3" r="0.7" fill-opacity="0.18"/><circle cx="152.9" cy="128.5" r="0.7" fill-opacity="0.82"/><circle cx="99.7" cy="550.6" r="0.6" fill-opacity="0.23"/><circle cx="504.0" cy="661.1" r="0.7" fill-opacity="0.25"/><circle cx="724.4" cy="208.4" r="0.8" fill-opacity="0.90"/><circle cx="935.5" cy="146.0" r="0.6" fill-opacity="0.24"/><circle cx="193.2" cy="307.9" r="1.0" fill-opacity="0.69"/><circle cx="424.0" cy="117.7" r="0.7" fill-opacity="0.24"/><circle cx="1127.5" cy="503.4" r="0.6" fill-opacity="0.19"/><circle cx="1137.9" cy="794.8" r="0.5" fill-opacity="0.35"/><circle cx="416.3" cy="812.6" r="0.6" fill-opacity="0.41"/><circle cx="889.5" cy="461.0" r="0.5" fill-opacity="0.39"/><circle cx="223.7" cy="31.5" r="0.8" fill-opacity="0.61"/><circle cx="1317.9" cy="319.0" r="0.7" fill-opacity="0.18"/><circle cx="937.8" cy="754.1" r="0.5" fill-opacity="0.21"/><circle cx="1033.6" cy="667.8" r="0.6" fill-opacity="0.19"/><circle cx="1507.6" cy="62.4" r="1.0" fill-opacity="0.92"/><circle cx="632.0" cy="45.5" r="0.5" fill-opacity="0.26"/><circle cx="1453.3" cy="241.4" r="0.5" fill-opacity="0.16"/><circle cx="990.7" cy="218.1" r="0.6" fill-opacity="0.41"/><circle cx="766.4" cy="92.0" r="0.6" fill-opacity="0.21"/><circle cx="1415.4" cy="441.6" r="0.7" fill-opacity="0.39"/><circle cx="1583.0" cy="646.0" r="0.7" fill-opacity="0.38"/><circle cx="550.5" cy="473.4" r="0.6" fill-opacity="0.20"/><circle cx="510.2" cy="196.8" r="0.9" fill-opacity="0.58"/><circle cx="1586.5" cy="444.5" r="0.8" fill-opacity="0.99"/><circle cx="160.2" cy="546.2" r="0.7" fill-opacity="0.17"/><circle cx="1594.2" cy="197.1" r="1.0" fill-opacity="0.71"/><circle cx="1342.8" cy="696.5" r="0.7" fill-opacity="0.25"/><circle cx="1181.0" cy="308.3" r="0.7" fill-opacity="0.36"/><circle cx="1516.1" cy="471.8" r="0.5" fill-opacity="0.40"/><circle cx="1296.6" cy="796.4" r="0.5" fill-opacity="0.30"/><circle cx="144.4" cy="207.6" r="0.7" fill-opacity="0.29"/><circle cx="530.8" cy="512.1" r="0.9" fill-opacity="0.87"/><circle cx="1470.0" cy="695.7" r="0.5" fill-opacity="0.19"/><circle cx="1127.5" cy="135.0" r="0.7" fill-opacity="0.41"/><circle cx="1536.9" cy="320.1" r="1.0" fill-opacity="0.81"/><circle cx="538.5" cy="279.4" r="1.3" fill-opacity="0.98"/><circle cx="1266.9" cy="788.6" r="0.5" fill-opacity="0.36"/><circle cx="899.2" cy="731.9" r="0.6" fill-opacity="0.22"/><circle cx="942.3" cy="161.9" r="0.7" fill-opacity="0.24"/><circle cx="284.3" cy="23.4" r="0.7" fill-opacity="0.27"/><circle cx="1590.9" cy="792.2" r="0.7" fill-opacity="0.25"/><circle cx="1294.1" cy="509.9" r="0.5" fill-opacity="0.43"/><circle cx="225.0" cy="616.8" r="0.6" fill-opacity="0.20"/><circle cx="1416.5" cy="92.8" r="0.7" fill-opacity="0.37"/><circle cx="537.2" cy="31.1" r="0.7" fill-opacity="0.17"/><circle cx="410.7" cy="108.2" r="0.6" fill-opacity="0.28"/><circle cx="671.4" cy="154.7" r="0.6" fill-opacity="0.26"/><circle cx="600.6" cy="683.4" r="1.1" fill-opacity="0.84"/><circle cx="1099.5" cy="151.8" r="0.5" fill-opacity="0.24"/><circle cx="509.9" cy="781.4" r="0.5" fill-opacity="0.42"/><circle cx="257.4" cy="81.9" r="0.7" fill-opacity="0.70"/><circle cx="1576.4" cy="734.8" r="0.6" fill-opacity="0.43"/><circle cx="264.0" cy="732.0" r="0.5" fill-opacity="0.25"/><circle cx="1559.0" cy="348.6" r="0.7" fill-opacity="0.31"/><circle cx="1057.0" cy="259.3" r="0.6" fill-opacity="0.32"/><circle cx="1343.8" cy="144.6" r="0.6" fill-opacity="0.18"/><circle cx="1318.2" cy="520.8" r="0.5" fill-opacity="0.16"/><circle cx="273.3" cy="254.9" r="0.5" fill-opacity="0.24"/><circle cx="635.9" cy="412.3" r="0.5" fill-opacity="0.34"/><circle cx="620.0" cy="318.1" r="0.5" fill-opacity="0.28"/><circle cx="421.3" cy="393.1" r="0.6" fill-opacity="0.32"/><circle cx="241.8" cy="577.8" r="0.7" fill-opacity="0.25"/><circle cx="866.3" cy="796.6" r="0.7" fill-opacity="0.17"/><circle cx="619.4" cy="439.0" r="1.3" fill-opacity="0.94"/><circle cx="759.7" cy="725.6" r="0.5" fill-opacity="0.27"/><circle cx="1366.3" cy="49.7" r="0.7" fill-opacity="0.39"/><circle cx="1084.1" cy="517.0" r="0.6" fill-opacity="0.20"/><circle cx="1575.0" cy="797.8" r="0.8" fill-opacity="0.57"/><circle cx="125.4" cy="567.1" r="0.7" fill-opacity="0.19"/><circle cx="952.1" cy="277.2" r="0.7" fill-opacity="0.59"/><circle cx="890.2" cy="462.5" r="1.1" fill-opacity="0.76"/><circle cx="1397.5" cy="649.7" r="0.7" fill-opacity="0.38"/><circle cx="180.0" cy="141.4" r="0.7" fill-opacity="0.38"/><circle cx="1503.4" cy="760.1" r="0.5" fill-opacity="0.39"/><circle cx="1388.0" cy="724.3" r="0.9" fill-opacity="0.72"/><circle cx="776.9" cy="508.0" r="0.6" fill-opacity="0.27"/><circle cx="989.2" cy="565.3" r="0.6" fill-opacity="0.42"/><circle cx="530.4" cy="211.6" r="0.9" fill-opacity="0.95"/><circle cx="32.4" cy="674.3" r="0.6" fill-opacity="0.40"/><circle cx="1373.2" cy="568.5" r="0.8" fill-opacity="0.61"/><circle cx="1558.8" cy="375.6" r="0.9" fill-opacity="0.88"/><circle cx="968.0" cy="93.3" r="0.6" fill-opacity="0.37"/><circle cx="1215.2" cy="714.0" r="1.1" fill-opacity="0.91"/><circle cx="105.0" cy="588.2" r="0.7" fill-opacity="0.41"/><circle cx="46.3" cy="175.8" r="0.7" fill-opacity="0.66"/><circle cx="730.3" cy="754.6" r="0.6" fill-opacity="0.26"/><circle cx="742.7" cy="338.8" r="1.3" fill-opacity="0.56"/><circle cx="595.9" cy="496.0" r="0.6" fill-opacity="0.33"/><circle cx="559.6" cy="152.5" r="1.3" fill-opacity="0.92"/><circle cx="144.6" cy="43.9" r="0.7" fill-opacity="0.38"/><circle cx="342.9" cy="198.6" r="0.5" fill-opacity="0.23"/><circle cx="655.2" cy="38.0" r="1.3" fill-opacity="0.55"/><circle cx="1458.4" cy="538.6" r="0.5" fill-opacity="0.22"/><circle cx="973.4" cy="774.5" r="0.7" fill-opacity="0.34"/><circle cx="678.1" cy="322.4" r="0.6" fill-opacity="0.22"/><circle cx="483.4" cy="437.5" r="0.7" fill-opacity="0.18"/><circle cx="818.4" cy="550.6" r="0.9" fill-opacity="0.80"/><circle cx="950.0" cy="247.6" r="0.6" fill-opacity="0.17"/><circle cx="1581.4" cy="533.2" r="0.9" fill-opacity="0.85"/><circle cx="1523.5" cy="541.9" r="0.7" fill-opacity="0.38"/><circle cx="1439.5" cy="664.7" r="1.1" fill-opacity="0.73"/><circle cx="511.3" cy="133.7" r="0.6" fill-opacity="0.45"/><circle cx="415.1" cy="356.0" r="0.5" fill-opacity="0.32"/><circle cx="1591.6" cy="673.2" r="0.7" fill-opacity="0.22"/><circle cx="855.4" cy="648.3" r="1.3" fill-opacity="0.71"/><circle cx="480.3" cy="157.6" r="0.7" fill-opacity="0.20"/><circle cx="156.2" cy="124.1" r="0.7" fill-opacity="0.38"/><circle cx="292.9" cy="564.4" r="0.5" fill-opacity="0.22"/><circle cx="357.3" cy="717.4" r="0.6" fill-opacity="0.26"/><circle cx="936.9" cy="392.1" r="0.5" fill-opacity="0.41"/><circle cx="933.7" cy="775.6" r="0.5" fill-opacity="0.30"/><circle cx="1388.0" cy="326.6" r="0.5" fill-opacity="0.41"/><circle cx="241.2" cy="813.9" r="0.7" fill-opacity="0.42"/><circle cx="1578.6" cy="136.3" r="0.8" fill-opacity="0.90"/><circle cx="780.1" cy="525.6" r="0.7" fill-opacity="0.17"/><circle cx="723.3" cy="189.1" r="1.1" fill-opacity="0.89"/><circle cx="783.3" cy="631.3" r="0.7" fill-opacity="0.28"/><circle cx="687.1" cy="364.4" r="0.5" fill-opacity="0.16"/><circle cx="319.1" cy="319.7" r="0.6" fill-opacity="0.38"/><circle cx="849.7" cy="36.3" r="0.7" fill-opacity="0.22"/><circle cx="1109.6" cy="296.8" r="0.6" fill-opacity="0.30"/><circle cx="489.8" cy="74.1" r="0.6" fill-opacity="0.29"/><circle cx="832.5" cy="440.2" r="0.7" fill-opacity="0.45"/><circle cx="548.4" cy="741.3" r="0.5" fill-opacity="0.20"/><circle cx="1451.0" cy="670.0" r="0.5" fill-opacity="0.37"/><circle cx="209.9" cy="607.8" r="0.5" fill-opacity="0.19"/><circle cx="1137.8" cy="654.1" r="0.7" fill-opacity="0.23"/><circle cx="855.6" cy="60.8" r="1.3" fill-opacity="0.60"/><circle cx="1337.8" cy="60.5" r="0.6" fill-opacity="0.26"/><circle cx="875.7" cy="400.6" r="0.7" fill-opacity="0.36"/><circle cx="14.9" cy="357.9" r="0.7" fill-opacity="0.23"/><circle cx="969.0" cy="131.5" r="0.7" fill-opacity="0.78"/><circle cx="988.3" cy="247.6" r="1.0" fill-opacity="0.64"/><circle cx="319.6" cy="231.9" r="0.5" fill-opacity="0.26"/><circle cx="655.6" cy="150.0" r="0.5" fill-opacity="0.36"/><circle cx="769.1" cy="209.1" r="0.5" fill-opacity="0.42"/><circle cx="1336.4" cy="555.9" r="0.5" fill-opacity="0.38"/><circle cx="120.1" cy="599.4" r="1.3" fill-opacity="0.65"/><circle cx="1581.9" cy="258.2" r="0.5" fill-opacity="0.39"/><circle cx="1398.6" cy="702.1" r="0.7" fill-opacity="0.24"/><circle cx="1181.7" cy="97.8" r="0.7" fill-opacity="0.55"/><circle cx="221.4" cy="538.5" r="0.6" fill-opacity="0.44"/><circle cx="429.3" cy="607.0" r="0.6" fill-opacity="0.20"/><circle cx="641.2" cy="789.9" r="0.6" fill-opacity="0.36"/><circle cx="765.2" cy="358.5" r="0.8" fill-opacity="0.60"/><circle cx="1113.9" cy="68.8" r="0.8" fill-opacity="0.60"/><circle cx="1458.0" cy="407.2" r="0.6" fill-opacity="0.20"/><circle cx="607.6" cy="308.2" r="0.7" fill-opacity="0.41"/><circle cx="1163.6" cy="733.6" r="0.6" fill-opacity="0.18"/><circle cx="658.1" cy="58.7" r="0.6" fill-opacity="0.15"/><circle cx="1389.3" cy="440.8" r="1.3" fill-opacity="0.80"/><circle cx="1564.6" cy="556.5" r="0.7" fill-opacity="0.36"/><circle cx="989.2" cy="367.4" r="1.0" fill-opacity="0.71"/><circle cx="1082.1" cy="329.1" r="1.1" fill-opacity="0.95"/><circle cx="980.7" cy="31.3" r="1.1" fill-opacity="0.93"/><circle cx="1363.0" cy="715.8" r="0.6" fill-opacity="0.25"/><circle cx="529.4" cy="244.0" r="0.7" fill-opacity="0.34"/><circle cx="645.2" cy="209.5" r="0.7" fill-opacity="0.28"/><circle cx="1370.5" cy="378.8" r="0.6" fill-opacity="0.37"/><circle cx="28.4" cy="343.9" r="0.7" fill-opacity="0.15"/><circle cx="145.4" cy="504.2" r="0.6" fill-opacity="0.42"/><circle cx="899.7" cy="544.4" r="0.6" fill-opacity="0.26"/><circle cx="86.8" cy="199.9" r="0.7" fill-opacity="0.38"/><circle cx="959.9" cy="593.9" r="0.6" fill-opacity="0.18"/><circle cx="1214.9" cy="199.0" r="0.7" fill-opacity="0.44"/><circle cx="467.2" cy="438.5" r="0.5" fill-opacity="0.42"/><circle cx="787.9" cy="677.8" r="1.0" fill-opacity="0.60"/><circle cx="977.4" cy="171.7" r="1.0" fill-opacity="0.65"/><circle cx="1319.3" cy="174.1" r="0.6" fill-opacity="0.16"/><circle cx="1013.2" cy="558.4" r="0.6" fill-opacity="0.29"/><circle cx="942.9" cy="424.3" r="0.7" fill-opacity="0.79"/><circle cx="77.7" cy="768.4" r="1.0" fill-opacity="0.97"/><circle cx="1249.7" cy="748.3" r="0.5" fill-opacity="0.37"/><circle cx="205.4" cy="331.1" r="0.6" fill-opacity="0.30"/><circle cx="615.5" cy="803.6" r="0.8" fill-opacity="0.67"/><circle cx="1541.7" cy="796.5" r="0.5" fill-opacity="0.19"/><circle cx="964.0" cy="729.4" r="0.7" fill-opacity="0.31"/><circle cx="502.3" cy="610.0" r="0.5" fill-opacity="0.21"/><circle cx="998.7" cy="253.9" r="0.7" fill-opacity="0.19"/><circle cx="1136.6" cy="800.2" r="0.7" fill-opacity="0.36"/><circle cx="515.8" cy="114.1" r="0.6" fill-opacity="0.32"/><circle cx="1508.3" cy="588.7" r="0.7" fill-opacity="0.24"/><circle cx="1355.7" cy="667.0" r="0.5" fill-opacity="0.26"/><circle cx="84.9" cy="67.2" r="0.5" fill-opacity="0.45"/><circle cx="1093.4" cy="138.8" r="0.6" fill-opacity="0.21"/><circle cx="865.9" cy="308.2" r="0.7" fill-opacity="0.41"/><circle cx="1183.2" cy="712.1" r="1.1" fill-opacity="0.72"/><circle cx="817.5" cy="657.9" r="0.7" fill-opacity="0.35"/><circle cx="1482.4" cy="331.3" r="1.3" fill-opacity="0.69"/><circle cx="883.4" cy="32.3" r="0.7" fill-opacity="0.41"/><circle cx="1376.7" cy="375.6" r="0.7" fill-opacity="0.36"/><circle cx="1036.2" cy="624.6" r="0.7" fill-opacity="0.21"/><circle cx="1159.9" cy="176.4" r="0.7" fill-opacity="0.17"/><circle cx="1540.0" cy="608.6" r="0.5" fill-opacity="0.28"/><circle cx="890.6" cy="125.8" r="0.6" fill-opacity="0.15"/><circle cx="746.1" cy="770.1" r="0.6" fill-opacity="0.33"/><circle cx="1237.9" cy="521.0" r="0.9" fill-opacity="0.77"/><circle cx="916.3" cy="307.8" r="0.9" fill-opacity="0.79"/><circle cx="1531.2" cy="437.4" r="0.8" fill-opacity="0.74"/><circle cx="859.3" cy="95.4" r="0.5" fill-opacity="0.35"/><circle cx="529.7" cy="256.3" r="1.1" fill-opacity="0.79"/><circle cx="1594.6" cy="679.3" r="0.7" fill-opacity="0.60"/><circle cx="553.6" cy="213.8" r="0.7" fill-opacity="0.22"/><circle cx="63.8" cy="728.8" r="0.5" fill-opacity="0.27"/><circle cx="864.4" cy="247.7" r="0.9" fill-opacity="0.78"/><circle cx="814.0" cy="410.5" r="0.7" fill-opacity="0.21"/><circle cx="822.2" cy="778.7" r="0.7" fill-opacity="0.31"/><circle cx="1003.1" cy="190.2" r="0.5" fill-opacity="0.41"/><circle cx="678.7" cy="104.9" r="0.7" fill-opacity="0.41"/><circle cx="1186.2" cy="369.3" r="0.7" fill-opacity="0.89"/><circle cx="246.0" cy="388.5" r="0.5" fill-opacity="0.17"/><circle cx="284.8" cy="223.0" r="0.5" fill-opacity="0.42"/><circle cx="652.2" cy="382.0" r="0.6" fill-opacity="0.16"/><circle cx="1077.3" cy="448.8" r="0.7" fill-opacity="0.17"/><circle cx="1193.5" cy="58.3" r="0.9" fill-opacity="0.97"/><circle cx="169.8" cy="649.9" r="0.5" fill-opacity="0.23"/><circle cx="1482.7" cy="326.4" r="0.7" fill-opacity="0.76"/><circle cx="853.5" cy="130.8" r="0.7" fill-opacity="0.24"/><circle cx="1014.5" cy="259.8" r="1.3" fill-opacity="0.84"/><circle cx="1531.8" cy="30.9" r="0.8" fill-opacity="0.61"/><circle cx="8.0" cy="498.1" r="0.5" fill-opacity="0.24"/><circle cx="1197.3" cy="743.0" r="0.6" fill-opacity="0.42"/><circle cx="1362.3" cy="135.7" r="0.7" fill-opacity="0.40"/><circle cx="310.9" cy="166.7" r="0.7" fill-opacity="0.93"/><circle cx="1491.8" cy="815.5" r="0.7" fill-opacity="0.17"/><circle cx="1074.7" cy="222.0" r="0.7" fill-opacity="0.30"/><circle cx="529.4" cy="124.3" r="0.5" fill-opacity="0.24"/><circle cx="111.7" cy="176.4" r="0.6" fill-opacity="0.33"/><circle cx="489.1" cy="488.2" r="0.6" fill-opacity="0.39"/><circle cx="1533.9" cy="156.6" r="0.5" fill-opacity="0.36"/><circle cx="1025.3" cy="242.8" r="0.7" fill-opacity="0.37"/><circle cx="1404.6" cy="391.4" r="0.6" fill-opacity="0.30"/><circle cx="174.1" cy="537.2" r="0.6" fill-opacity="0.41"/><circle cx="224.0" cy="451.8" r="0.7" fill-opacity="0.17"/><circle cx="120.6" cy="36.9" r="0.5" fill-opacity="0.39"/><circle cx="926.2" cy="635.8" r="0.5" fill-opacity="0.32"/><circle cx="869.6" cy="819.0" r="0.5" fill-opacity="0.26"/><circle cx="357.3" cy="638.2" r="0.9" fill-opacity="0.61"/><circle cx="801.8" cy="94.3" r="0.5" fill-opacity="0.35"/><circle cx="1356.8" cy="665.6" r="0.5" fill-opacity="0.38"/><circle cx="224.6" cy="149.1" r="0.7" fill-opacity="0.35"/><circle cx="1548.4" cy="609.3" r="0.6" fill-opacity="0.16"/><circle cx="1218.4" cy="206.9" r="0.5" fill-opacity="0.16"/><circle cx="330.8" cy="746.4" r="0.6" fill-opacity="0.43"/><circle cx="1410.5" cy="53.8" r="0.5" fill-opacity="0.36"/><circle cx="834.2" cy="684.1" r="0.9" fill-opacity="0.81"/><circle cx="912.3" cy="322.6" r="0.7" fill-opacity="0.35"/><circle cx="1336.8" cy="434.3" r="0.5" fill-opacity="0.30"/><circle cx="564.6" cy="714.4" r="0.6" fill-opacity="0.42"/><circle cx="10.6" cy="725.9" r="0.5" fill-opacity="0.17"/><circle cx="1029.6" cy="190.8" r="0.6" fill-opacity="0.33"/><circle cx="1307.1" cy="549.6" r="0.6" fill-opacity="0.37"/><circle cx="770.4" cy="404.1" r="0.5" fill-opacity="0.34"/><circle cx="657.4" cy="216.4" r="0.7" fill-opacity="0.20"/><circle cx="1007.3" cy="53.3" r="0.5" fill-opacity="0.20"/><circle cx="1475.9" cy="434.3" r="0.7" fill-opacity="0.34"/><circle cx="1405.6" cy="602.9" r="0.7" fill-opacity="0.65"/><circle cx="970.4" cy="398.2" r="0.5" fill-opacity="0.40"/><circle cx="961.3" cy="656.1" r="0.8" fill-opacity="0.83"/><circle cx="817.3" cy="155.8" r="0.6" fill-opacity="0.33"/><circle cx="110.1" cy="323.8" r="0.5" fill-opacity="0.21"/><circle cx="1375.3" cy="424.5" r="0.5" fill-opacity="0.33"/><circle cx="283.9" cy="741.5" r="0.7" fill-opacity="0.30"/><circle cx="188.0" cy="406.8" r="0.7" fill-opacity="0.31"/><circle cx="1.9" cy="770.3" r="0.6" fill-opacity="0.31"/><circle cx="592.6" cy="56.7" r="0.5" fill-opacity="0.43"/><circle cx="771.4" cy="635.4" r="0.7" fill-opacity="0.42"/><circle cx="1339.5" cy="481.7" r="0.6" fill-opacity="0.29"/><circle cx="372.0" cy="707.5" r="0.7" fill-opacity="0.27"/><circle cx="302.4" cy="587.9" r="1.1" fill-opacity="0.79"/><circle cx="831.6" cy="321.3" r="0.6" fill-opacity="0.27"/><circle cx="170.5" cy="362.0" r="0.6" fill-opacity="0.41"/><circle cx="677.7" cy="313.8" r="0.7" fill-opacity="0.27"/><circle cx="325.9" cy="462.6" r="0.5" fill-opacity="0.26"/><circle cx="887.9" cy="224.5" r="0.6" fill-opacity="0.38"/><circle cx="637.0" cy="132.2" r="0.7" fill-opacity="0.89"/><circle cx="714.6" cy="580.1" r="0.5" fill-opacity="0.30"/><circle cx="1257.7" cy="661.1" r="0.7" fill-opacity="0.36"/><circle cx="257.2" cy="791.7" r="0.5" fill-opacity="0.40"/><circle cx="754.7" cy="501.0" r="0.6" fill-opacity="0.22"/><circle cx="128.1" cy="52.1" r="0.6" fill-opacity="0.33"/><circle cx="833.6" cy="589.9" r="0.5" fill-opacity="0.34"/><circle cx="702.4" cy="183.0" r="0.7" fill-opacity="0.24"/><circle cx="53.8" cy="500.4" r="0.5" fill-opacity="0.33"/><circle cx="1078.4" cy="309.1" r="0.5" fill-opacity="0.18"/><circle cx="441.5" cy="340.7" r="0.6" fill-opacity="0.33"/><circle cx="828.4" cy="610.1" r="0.5" fill-opacity="0.31"/><circle cx="1161.8" cy="468.2" r="0.6" fill-opacity="0.44"/><circle cx="442.4" cy="505.9" r="0.6" fill-opacity="0.32"/><circle cx="417.8" cy="346.9" r="0.5" fill-opacity="0.30"/><circle cx="543.9" cy="115.4" r="0.6" fill-opacity="0.41"/><circle cx="1301.0" cy="480.8" r="0.6" fill-opacity="0.32"/><circle cx="1231.9" cy="626.5" r="1.0" fill-opacity="0.86"/><circle cx="1434.4" cy="709.9" r="0.6" fill-opacity="0.17"/><circle cx="1013.9" cy="815.4" r="0.5" fill-opacity="0.39"/><circle cx="659.9" cy="303.8" r="0.7" fill-opacity="0.40"/><circle cx="397.2" cy="96.2" r="0.6" fill-opacity="0.17"/><circle cx="1490.2" cy="402.3" r="0.7" fill-opacity="0.23"/><circle cx="1515.4" cy="567.1" r="1.0" fill-opacity="0.88"/><circle cx="375.8" cy="215.2" r="0.5" fill-opacity="0.21"/><circle cx="399.5" cy="515.6" r="0.5" fill-opacity="0.19"/><circle cx="125.6" cy="784.7" r="0.5" fill-opacity="0.38"/><circle cx="866.4" cy="55.7" r="0.7" fill-opacity="0.24"/><circle cx="1437.0" cy="725.0" r="0.6" fill-opacity="0.30"/><circle cx="1575.0" cy="753.0" r="0.5" fill-opacity="0.38"/><circle cx="205.2" cy="441.5" r="0.7" fill-opacity="0.16"/><circle cx="555.7" cy="708.6" r="1.0" fill-opacity="0.99"/><circle cx="1117.2" cy="389.1" r="0.5" fill-opacity="0.35"/><circle cx="607.1" cy="102.4" r="0.6" fill-opacity="0.21"/><circle cx="420.6" cy="237.0" r="0.9" fill-opacity="0.71"/><circle cx="798.0" cy="190.0" r="0.6" fill-opacity="0.26"/><circle cx="640.9" cy="381.7" r="0.7" fill-opacity="0.36"/><circle cx="1302.7" cy="597.2" r="1.1" fill-opacity="0.74"/><circle cx="609.4" cy="138.4" r="0.8" fill-opacity="0.76"/><circle cx="15.6" cy="358.4" r="0.7" fill-opacity="0.31"/><circle cx="1152.9" cy="648.7" r="0.7" fill-opacity="0.41"/><circle cx="76.3" cy="101.0" r="0.5" fill-opacity="0.39"/><circle cx="762.5" cy="524.6" r="0.6" fill-opacity="0.23"/><circle cx="576.5" cy="466.9" r="0.9" fill-opacity="0.56"/><circle cx="194.0" cy="714.2" r="0.8" fill-opacity="0.81"/><circle cx="1039.8" cy="451.7" r="0.9" fill-opacity="0.71"/><circle cx="1077.1" cy="411.0" r="0.7" fill-opacity="0.72"/><circle cx="458.4" cy="526.1" r="0.5" fill-opacity="0.34"/><circle cx="1485.7" cy="358.6" r="0.6" fill-opacity="0.40"/><circle cx="114.2" cy="151.3" r="0.6" fill-opacity="0.35"/><circle cx="1136.7" cy="505.1" r="0.6" fill-opacity="0.38"/><circle cx="1502.0" cy="618.8" r="0.6" fill-opacity="0.27"/><circle cx="294.2" cy="40.4" r="1.3" fill-opacity="0.66"/><circle cx="1190.2" cy="620.3" r="0.6" fill-opacity="0.18"/><circle cx="102.1" cy="723.2" r="0.5" fill-opacity="0.38"/><circle cx="838.4" cy="816.8" r="0.7" fill-opacity="0.20"/><circle cx="1047.7" cy="728.6" r="0.5" fill-opacity="0.37"/><circle cx="709.1" cy="122.9" r="0.5" fill-opacity="0.16"/><circle cx="1061.7" cy="708.6" r="0.6" fill-opacity="0.29"/><circle cx="1393.4" cy="768.0" r="0.5" fill-opacity="0.44"/><circle cx="1116.2" cy="163.3" r="0.7" fill-opacity="0.37"/><circle cx="1403.7" cy="369.1" r="0.7" fill-opacity="0.24"/><circle cx="555.5" cy="452.7" r="1.0" fill-opacity="0.69"/><circle cx="659.5" cy="146.3" r="0.7" fill-opacity="0.39"/><circle cx="1356.7" cy="296.4" r="0.5" fill-opacity="0.36"/><circle cx="787.1" cy="624.9" r="0.6" fill-opacity="0.39"/><circle cx="955.2" cy="657.8" r="0.5" fill-opacity="0.27"/><circle cx="896.9" cy="337.0" r="0.7" fill-opacity="0.34"/><circle cx="1325.5" cy="198.0" r="0.7" fill-opacity="0.22"/><circle cx="1223.3" cy="748.1" r="1.3" fill-opacity="0.67"/><circle cx="1037.5" cy="446.5" r="0.5" fill-opacity="0.41"/><circle cx="291.9" cy="253.1" r="0.7" fill-opacity="0.29"/><circle cx="1120.8" cy="414.6" r="0.5" fill-opacity="0.16"/><circle cx="856.0" cy="170.4" r="0.6" fill-opacity="0.19"/><circle cx="701.5" cy="28.5" r="0.5" fill-opacity="0.30"/><circle cx="547.1" cy="270.6" r="0.9" fill-opacity="0.76"/><circle cx="1266.3" cy="285.5" r="0.8" fill-opacity="0.58"/><circle cx="1241.0" cy="79.0" r="0.5" fill-opacity="0.42"/><circle cx="400.1" cy="326.5" r="0.7" fill-opacity="0.22"/><circle cx="1234.0" cy="375.5" r="0.7" fill-opacity="0.64"/><circle cx="1176.5" cy="97.0" r="0.5" fill-opacity="0.29"/><circle cx="1090.3" cy="271.1" r="0.7" fill-opacity="0.37"/><circle cx="1191.6" cy="460.6" r="0.6" fill-opacity="0.34"/><circle cx="318.0" cy="730.2" r="0.8" fill-opacity="0.99"/><circle cx="377.5" cy="368.5" r="0.6" fill-opacity="0.33"/><circle cx="633.3" cy="216.0" r="1.1" fill-opacity="0.90"/><circle cx="760.4" cy="497.8" r="0.5" fill-opacity="0.22"/><circle cx="799.9" cy="569.4" r="0.7" fill-opacity="0.17"/><circle cx="568.8" cy="144.8" r="0.5" fill-opacity="0.19"/><circle cx="372.3" cy="805.4" r="0.9" fill-opacity="0.91"/><circle cx="702.0" cy="176.0" r="0.6" fill-opacity="0.37"/><circle cx="401.1" cy="53.5" r="0.7" fill-opacity="0.24"/><circle cx="1115.3" cy="173.4" r="0.6" fill-opacity="0.25"/><circle cx="749.4" cy="714.4" r="0.7" fill-opacity="0.20"/><circle cx="849.8" cy="380.6" r="1.1" fill-opacity="0.72"/><circle cx="1.2" cy="531.1" r="0.5" fill-opacity="0.41"/><circle cx="991.6" cy="312.5" r="0.6" fill-opacity="0.37"/><circle cx="1053.3" cy="452.1" r="0.7" fill-opacity="0.35"/><circle cx="1225.2" cy="145.0" r="0.6" fill-opacity="0.34"/><circle cx="176.7" cy="439.5" r="0.5" fill-opacity="0.20"/><circle cx="50.0" cy="107.4" r="0.5" fill-opacity="0.32"/><circle cx="1338.1" cy="547.0" r="0.7" fill-opacity="0.33"/><circle cx="78.5" cy="198.1" r="0.5" fill-opacity="0.43"/><circle cx="334.0" cy="414.1" r="0.7" fill-opacity="0.76"/><circle cx="1022.3" cy="310.0" r="1.0" fill-opacity="0.92"/><circle cx="1270.8" cy="68.5" r="0.7" fill-opacity="0.16"/><circle cx="112.6" cy="264.5" r="1.1" fill-opacity="0.59"/><circle cx="1160.3" cy="446.3" r="0.7" fill-opacity="0.35"/><circle cx="912.0" cy="778.1" r="0.7" fill-opacity="0.27"/><circle cx="168.8" cy="531.6" r="0.6" fill-opacity="0.36"/><circle cx="683.3" cy="105.1" r="1.1" fill-opacity="0.73"/><circle cx="540.0" cy="148.2" r="1.0" fill-opacity="0.97"/><circle cx="1444.0" cy="461.0" r="0.9" fill-opacity="0.74"/><circle cx="1013.2" cy="681.3" r="0.5" fill-opacity="0.32"/><circle cx="342.3" cy="633.0" r="0.9" fill-opacity="0.71"/><circle cx="723.8" cy="787.9" r="0.5" fill-opacity="0.44"/><circle cx="953.2" cy="435.1" r="0.9" fill-opacity="0.55"/><circle cx="1575.0" cy="193.4" r="0.7" fill-opacity="0.40"/><circle cx="1470.6" cy="430.0" r="0.7" fill-opacity="0.20"/><circle cx="60.4" cy="305.8" r="0.6" fill-opacity="0.42"/><circle cx="399.8" cy="226.5" r="0.7" fill-opacity="0.27"/><circle cx="1468.6" cy="607.9" r="1.0" fill-opacity="0.63"/><circle cx="1321.1" cy="572.3" r="0.5" fill-opacity="0.33"/><circle cx="480.6" cy="605.2" r="0.5" fill-opacity="0.38"/><circle cx="1475.0" cy="288.8" r="1.0" fill-opacity="0.74"/><circle cx="1388.5" cy="716.1" r="0.7" fill-opacity="0.40"/><circle cx="1485.8" cy="527.8" r="0.5" fill-opacity="0.24"/><circle cx="65.9" cy="452.9" r="0.7" fill-opacity="0.36"/><circle cx="245.1" cy="559.6" r="1.0" fill-opacity="0.89"/><circle cx="920.4" cy="93.9" r="0.6" fill-opacity="0.19"/><circle cx="537.9" cy="401.7" r="1.1" fill-opacity="0.73"/><circle cx="136.1" cy="422.5" r="0.8" fill-opacity="0.89"/><circle cx="769.5" cy="180.1" r="0.7" fill-opacity="0.21"/><circle cx="985.6" cy="609.1" r="0.5" fill-opacity="0.23"/><circle cx="688.1" cy="568.4" r="0.5" fill-opacity="0.35"/><circle cx="677.7" cy="299.9" r="0.7" fill-opacity="0.35"/><circle cx="1231.5" cy="157.1" r="0.6" fill-opacity="0.34"/><circle cx="704.7" cy="759.5" r="0.7" fill-opacity="0.26"/><circle cx="1212.4" cy="702.5" r="0.5" fill-opacity="0.22"/><circle cx="993.6" cy="139.8" r="0.9" fill-opacity="0.56"/><circle cx="1110.1" cy="110.8" r="0.5" fill-opacity="0.25"/><circle cx="1184.0" cy="191.1" r="0.6" fill-opacity="0.31"/><circle cx="996.9" cy="813.9" r="0.7" fill-opacity="0.16"/><circle cx="932.8" cy="551.5" r="0.5" fill-opacity="0.17"/><circle cx="321.1" cy="577.8" r="0.6" fill-opacity="0.35"/><circle cx="13.3" cy="332.1" r="0.7" fill-opacity="0.26"/><circle cx="172.6" cy="255.4" r="1.0" fill-opacity="0.65"/><circle cx="609.1" cy="801.3" r="0.6" fill-opacity="0.30"/><circle cx="955.4" cy="92.2" r="0.6" fill-opacity="0.32"/><circle cx="1140.0" cy="53.7" r="0.9" fill-opacity="0.70"/><circle cx="629.4" cy="147.3" r="0.6" fill-opacity="0.26"/><circle cx="483.7" cy="816.8" r="0.9" fill-opacity="0.92"/><circle cx="1001.3" cy="723.2" r="0.7" fill-opacity="0.97"/><circle cx="1518.6" cy="202.0" r="0.6" fill-opacity="0.35"/><circle cx="140.5" cy="327.0" r="1.1" fill-opacity="0.94"/><circle cx="1098.4" cy="355.0" r="0.6" fill-opacity="0.44"/><circle cx="1455.6" cy="284.8" r="0.5" fill-opacity="0.35"/><circle cx="929.6" cy="567.9" r="0.5" fill-opacity="0.24"/><circle cx="1128.2" cy="440.0" r="0.5" fill-opacity="0.35"/><circle cx="903.8" cy="148.1" r="0.7" fill-opacity="0.43"/><circle cx="189.4" cy="275.4" r="1.3" fill-opacity="0.56"/><circle cx="509.9" cy="798.4" r="0.9" fill-opacity="0.75"/><circle cx="1494.0" cy="735.5" r="0.9" fill-opacity="0.62"/><circle cx="300.7" cy="127.0" r="0.7" fill-opacity="0.34"/><circle cx="969.0" cy="510.7" r="0.5" fill-opacity="0.36"/><circle cx="574.8" cy="571.1" r="0.7" fill-opacity="0.40"/><circle cx="750.0" cy="540.4" r="0.6" fill-opacity="0.30"/><circle cx="220.0" cy="176.2" r="0.5" fill-opacity="0.43"/><circle cx="1520.3" cy="199.6" r="0.5" fill-opacity="0.38"/><circle cx="105.8" cy="761.8" r="1.1" fill-opacity="0.77"/><circle cx="519.8" cy="387.1" r="0.6" fill-opacity="0.38"/><circle cx="972.7" cy="679.8" r="1.0" fill-opacity="0.83"/><circle cx="1187.9" cy="495.9" r="0.7" fill-opacity="0.39"/><circle cx="833.0" cy="382.4" r="0.7" fill-opacity="0.95"/><circle cx="393.2" cy="451.2" r="0.7" fill-opacity="0.80"/><circle cx="825.8" cy="525.3" r="0.6" fill-opacity="0.28"/><circle cx="1415.0" cy="639.4" r="0.5" fill-opacity="0.28"/><circle cx="981.0" cy="65.5" r="0.5" fill-opacity="0.29"/><circle cx="1033.8" cy="94.2" r="0.5" fill-opacity="0.38"/><circle cx="1500.5" cy="577.5" r="0.6" fill-opacity="0.25"/><circle cx="39.9" cy="384.0" r="0.8" fill-opacity="0.95"/><circle cx="144.3" cy="280.6" r="0.7" fill-opacity="0.39"/><circle cx="1149.4" cy="120.6" r="0.6" fill-opacity="0.34"/><circle cx="136.5" cy="586.4" r="1.1" fill-opacity="0.83"/><circle cx="255.8" cy="461.2" r="0.5" fill-opacity="0.42"/><circle cx="904.8" cy="548.3" r="0.5" fill-opacity="0.20"/><circle cx="1139.3" cy="356.8" r="0.6" fill-opacity="0.24"/><circle cx="289.1" cy="739.0" r="0.7" fill-opacity="0.83"/><circle cx="405.0" cy="388.0" r="1.1" fill-opacity="0.91"/><circle cx="972.8" cy="415.8" r="0.7" fill-opacity="0.29"/><circle cx="656.2" cy="85.4" r="0.5" fill-opacity="0.41"/><circle cx="445.0" cy="523.7" r="0.8" fill-opacity="0.57"/><circle cx="237.2" cy="543.3" r="0.5" fill-opacity="0.35"/><circle cx="1340.8" cy="260.2" r="0.7" fill-opacity="0.60"/><circle cx="1590.0" cy="150.7" r="0.7" fill-opacity="0.36"/><circle cx="952.0" cy="650.3" r="0.6" fill-opacity="0.37"/><circle cx="576.3" cy="50.6" r="0.9" fill-opacity="0.72"/><circle cx="606.3" cy="76.0" r="0.7" fill-opacity="0.17"/><circle cx="753.3" cy="119.4" r="0.9" fill-opacity="0.79"/><circle cx="839.4" cy="577.3" r="0.5" fill-opacity="0.32"/><circle cx="1567.0" cy="444.1" r="0.7" fill-opacity="0.36"/><circle cx="1494.2" cy="809.1" r="0.7" fill-opacity="0.40"/><circle cx="415.5" cy="481.0" r="0.5" fill-opacity="0.33"/><circle cx="794.2" cy="603.9" r="0.5" fill-opacity="0.42"/><circle cx="372.4" cy="253.8" r="0.5" fill-opacity="0.16"/><circle cx="1000.7" cy="116.1" r="1.1" fill-opacity="1.00"/><circle cx="662.5" cy="288.4" r="0.7" fill-opacity="0.21"/><circle cx="1025.0" cy="572.6" r="0.5" fill-opacity="0.24"/><circle cx="810.7" cy="280.5" r="0.7" fill-opacity="0.25"/><circle cx="633.7" cy="476.0" r="0.8" fill-opacity="0.64"/><circle cx="1334.1" cy="758.0" r="0.6" fill-opacity="0.39"/><circle cx="1033.0" cy="406.2" r="0.7" fill-opacity="0.42"/><circle cx="740.0" cy="671.7" r="0.7" fill-opacity="0.93"/><circle cx="478.9" cy="600.5" r="0.7" fill-opacity="0.16"/><circle cx="923.8" cy="286.7" r="0.9" fill-opacity="0.58"/><circle cx="238.9" cy="692.9" r="0.6" fill-opacity="0.34"/><circle cx="1347.8" cy="477.6" r="0.7" fill-opacity="0.19"/><circle cx="1251.8" cy="268.0" r="1.3" fill-opacity="0.56"/><circle cx="662.2" cy="418.6" r="0.6" fill-opacity="0.40"/><circle cx="484.2" cy="441.0" r="0.6" fill-opacity="0.39"/><circle cx="1244.5" cy="750.9" r="0.5" fill-opacity="0.39"/><circle cx="1447.9" cy="145.0" r="0.6" fill-opacity="0.37"/><circle cx="837.8" cy="640.9" r="0.5" fill-opacity="0.40"/><circle cx="1500.8" cy="562.0" r="0.7" fill-opacity="0.16"/><circle cx="620.1" cy="712.1" r="0.6" fill-opacity="0.43"/><circle cx="1099.3" cy="496.2" r="0.6" fill-opacity="0.42"/><circle cx="165.0" cy="633.4" r="0.7" fill-opacity="0.81"/><circle cx="499.4" cy="733.9" r="0.5" fill-opacity="0.24"/><circle cx="851.6" cy="638.7" r="0.6" fill-opacity="0.19"/><circle cx="437.8" cy="34.2" r="0.7" fill-opacity="0.18"/><circle cx="868.0" cy="460.4" r="0.7" fill-opacity="0.39"/><circle cx="918.5" cy="158.7" r="0.6" fill-opacity="0.31"/><circle cx="81.2" cy="45.1" r="0.7" fill-opacity="0.60"/><circle cx="86.1" cy="362.3" r="0.7" fill-opacity="0.42"/><circle cx="1007.2" cy="572.7" r="0.6" fill-opacity="0.24"/><circle cx="1307.9" cy="590.9" r="0.7" fill-opacity="0.17"/><circle cx="1476.5" cy="632.0" r="0.5" fill-opacity="0.39"/><circle cx="1471.5" cy="395.7" r="0.7" fill-opacity="0.34"/><circle cx="1226.4" cy="397.5" r="0.8" fill-opacity="0.94"/><circle cx="987.1" cy="750.5" r="0.7" fill-opacity="0.43"/><circle cx="528.5" cy="708.9" r="0.6" fill-opacity="0.16"/><circle cx="760.5" cy="302.4" r="0.5" fill-opacity="0.23"/><circle cx="557.8" cy="480.6" r="0.6" fill-opacity="0.40"/><circle cx="1274.8" cy="282.0" r="0.6" fill-opacity="0.31"/><circle cx="641.3" cy="351.9" r="0.7" fill-opacity="0.20"/><circle cx="771.8" cy="74.7" r="0.7" fill-opacity="0.33"/><circle cx="1254.9" cy="369.4" r="1.1" fill-opacity="0.86"/><circle cx="276.9" cy="556.3" r="1.3" fill-opacity="0.81"/><circle cx="778.6" cy="494.5" r="0.7" fill-opacity="0.18"/><circle cx="712.3" cy="267.8" r="0.7" fill-opacity="0.18"/><circle cx="1302.5" cy="637.5" r="0.6" fill-opacity="0.34"/><circle cx="98.4" cy="195.7" r="0.7" fill-opacity="0.42"/><circle cx="1017.8" cy="22.1" r="0.5" fill-opacity="0.29"/><circle cx="466.4" cy="513.2" r="0.5" fill-opacity="0.35"/><circle cx="506.6" cy="477.1" r="0.9" fill-opacity="0.96"/><circle cx="1498.7" cy="594.8" r="0.7" fill-opacity="0.81"/><circle cx="978.4" cy="429.3" r="0.9" fill-opacity="0.58"/><circle cx="1441.7" cy="794.4" r="0.7" fill-opacity="0.40"/><circle cx="574.8" cy="709.3" r="0.8" fill-opacity="0.74"/><circle cx="944.3" cy="520.9" r="0.6" fill-opacity="0.26"/><circle cx="872.2" cy="550.7" r="0.5" fill-opacity="0.32"/><circle cx="1349.3" cy="309.5" r="0.6" fill-opacity="0.45"/><circle cx="1072.1" cy="129.2" r="0.5" fill-opacity="0.19"/><circle cx="1415.8" cy="547.0" r="0.8" fill-opacity="0.59"/><circle cx="1027.6" cy="353.9" r="0.7" fill-opacity="0.33"/><circle cx="681.1" cy="165.5" r="0.7" fill-opacity="0.40"/><circle cx="615.5" cy="202.1" r="0.5" fill-opacity="0.32"/><circle cx="1354.9" cy="210.9" r="0.6" fill-opacity="0.43"/><circle cx="922.2" cy="48.7" r="0.6" fill-opacity="0.36"/><circle cx="181.1" cy="406.3" r="0.5" fill-opacity="0.37"/><circle cx="842.3" cy="707.8" r="0.9" fill-opacity="0.76"/><circle cx="125.2" cy="732.2" r="0.6" fill-opacity="0.34"/><circle cx="1062.0" cy="555.6" r="0.7" fill-opacity="0.39"/><circle cx="500.0" cy="64.1" r="0.5" fill-opacity="0.29"/><circle cx="820.3" cy="396.4" r="1.0" fill-opacity="0.71"/><circle cx="1564.4" cy="257.1" r="0.7" fill-opacity="0.43"/><circle cx="1199.1" cy="602.1" r="0.5" fill-opacity="0.34"/><circle cx="925.0" cy="479.1" r="0.6" fill-opacity="0.39"/><circle cx="998.9" cy="250.9" r="0.7" fill-opacity="0.17"/><circle cx="1254.0" cy="223.1" r="0.6" fill-opacity="0.41"/><circle cx="22.7" cy="111.0" r="0.7" fill-opacity="0.37"/><circle cx="1054.6" cy="317.1" r="0.7" fill-opacity="0.22"/><circle cx="289.3" cy="442.9" r="0.5" fill-opacity="0.44"/><circle cx="952.9" cy="677.7" r="1.0" fill-opacity="0.90"/><circle cx="380.7" cy="373.3" r="0.5" fill-opacity="0.32"/><circle cx="1346.9" cy="65.4" r="0.5" fill-opacity="0.17"/><circle cx="742.4" cy="402.0" r="0.7" fill-opacity="0.22"/><circle cx="1093.6" cy="333.3" r="0.7" fill-opacity="0.41"/><circle cx="19.0" cy="761.9" r="0.7" fill-opacity="0.24"/><circle cx="848.4" cy="784.8" r="0.7" fill-opacity="0.34"/><circle cx="1529.9" cy="366.6" r="0.9" fill-opacity="0.70"/><circle cx="427.3" cy="100.4" r="0.6" fill-opacity="0.29"/><circle cx="1080.5" cy="215.0" r="0.5" fill-opacity="0.31"/><circle cx="1084.3" cy="814.6" r="0.5" fill-opacity="0.35"/><circle cx="1330.7" cy="31.5" r="0.5" fill-opacity="0.36"/><circle cx="562.4" cy="600.8" r="0.5" fill-opacity="0.16"/><circle cx="147.1" cy="770.9" r="0.5" fill-opacity="0.44"/><circle cx="1020.9" cy="587.0" r="0.7" fill-opacity="0.19"/><circle cx="1050.2" cy="740.1" r="0.5" fill-opacity="0.42"/><circle cx="1113.0" cy="224.2" r="0.5" fill-opacity="0.34"/><circle cx="1476.3" cy="242.6" r="0.7" fill-opacity="0.38"/><circle cx="517.4" cy="151.2" r="0.5" fill-opacity="0.26"/><circle cx="532.2" cy="69.9" r="0.9" fill-opacity="0.63"/><circle cx="111.0" cy="803.6" r="0.6" fill-opacity="0.20"/><circle cx="787.3" cy="136.8" r="0.8" fill-opacity="0.83"/><circle cx="170.0" cy="374.4" r="0.5" fill-opacity="0.17"/><circle cx="914.2" cy="222.0" r="0.6" fill-opacity="0.19"/><circle cx="1024.5" cy="766.4" r="0.6" fill-opacity="0.20"/><circle cx="527.7" cy="334.3" r="0.7" fill-opacity="0.43"/><circle cx="785.1" cy="370.0" r="0.7" fill-opacity="0.79"/><circle cx="5.3" cy="783.4" r="1.0" fill-opacity="0.60"/><circle cx="856.5" cy="813.3" r="0.6" fill-opacity="0.27"/><circle cx="1011.6" cy="787.1" r="0.7" fill-opacity="0.41"/><circle cx="544.1" cy="693.3" r="0.9" fill-opacity="0.84"/><circle cx="282.6" cy="53.4" r="0.5" fill-opacity="0.24"/><circle cx="624.2" cy="107.2" r="0.6" fill-opacity="0.18"/><circle cx="1012.5" cy="608.8" r="0.5" fill-opacity="0.16"/><circle cx="1594.2" cy="212.3" r="0.7" fill-opacity="0.34"/><circle cx="799.5" cy="792.0" r="0.7" fill-opacity="0.57"/><circle cx="89.7" cy="650.6" r="0.5" fill-opacity="0.21"/><circle cx="1046.2" cy="439.4" r="1.1" fill-opacity="0.62"/><circle cx="927.0" cy="760.0" r="0.5" fill-opacity="0.30"/><circle cx="30.5" cy="745.9" r="0.5" fill-opacity="0.36"/><circle cx="208.9" cy="159.5" r="0.6" fill-opacity="0.40"/><circle cx="155.7" cy="509.8" r="0.7" fill-opacity="0.92"/><circle cx="170.1" cy="418.7" r="0.8" fill-opacity="0.58"/><circle cx="324.2" cy="291.2" r="1.3" fill-opacity="0.86"/><circle cx="518.8" cy="800.7" r="0.5" fill-opacity="0.25"/><circle cx="1543.5" cy="192.2" r="0.5" fill-opacity="0.25"/><circle cx="193.2" cy="134.7" r="0.7" fill-opacity="0.26"/><circle cx="264.0" cy="216.4" r="0.5" fill-opacity="0.18"/><circle cx="1355.8" cy="510.7" r="0.7" fill-opacity="0.95"/><circle cx="129.2" cy="27.8" r="1.3" fill-opacity="0.84"/><circle cx="1419.1" cy="354.1" r="1.0" fill-opacity="0.86"/><circle cx="329.9" cy="532.6" r="0.6" fill-opacity="0.22"/><circle cx="279.3" cy="574.0" r="0.7" fill-opacity="0.30"/><circle cx="1520.5" cy="522.5" r="0.9" fill-opacity="0.74"/><circle cx="892.3" cy="175.1" r="0.7" fill-opacity="0.83"/><circle cx="1380.4" cy="809.5" r="0.6" fill-opacity="0.38"/><circle cx="1054.9" cy="242.6" r="0.5" fill-opacity="0.36"/><circle cx="1549.7" cy="400.6" r="0.7" fill-opacity="0.43"/><circle cx="86.4" cy="312.6" r="0.6" fill-opacity="0.25"/><circle cx="1288.2" cy="627.2" r="0.7" fill-opacity="0.17"/><circle cx="859.8" cy="148.1" r="0.7" fill-opacity="0.18"/><circle cx="1432.1" cy="597.7" r="0.6" fill-opacity="0.28"/><circle cx="1195.3" cy="738.9" r="0.5" fill-opacity="0.25"/><circle cx="156.9" cy="610.7" r="1.0" fill-opacity="0.95"/><circle cx="117.6" cy="488.9" r="0.6" fill-opacity="0.19"/><circle cx="1484.6" cy="385.1" r="0.5" fill-opacity="0.29"/><circle cx="310.6" cy="308.2" r="0.6" fill-opacity="0.19"/><circle cx="1107.5" cy="69.6" r="0.6" fill-opacity="0.29"/><circle cx="273.9" cy="296.2" r="1.1" fill-opacity="0.62"/><circle cx="1271.3" cy="782.3" r="1.1" fill-opacity="0.99"/><circle cx="1368.0" cy="91.0" r="1.0" fill-opacity="0.94"/><circle cx="346.3" cy="399.8" r="0.5" fill-opacity="0.37"/><circle cx="1177.9" cy="218.8" r="0.7" fill-opacity="0.22"/><circle cx="1484.0" cy="777.1" r="0.7" fill-opacity="0.74"/><circle cx="70.8" cy="813.0" r="1.1" fill-opacity="0.57"/><circle cx="849.8" cy="404.5" r="0.7" fill-opacity="0.75"/><circle cx="384.8" cy="467.7" r="0.7" fill-opacity="0.27"/><circle cx="348.8" cy="308.0" r="0.5" fill-opacity="0.15"/><circle cx="1070.5" cy="151.1" r="0.7" fill-opacity="0.37"/><circle cx="39.1" cy="385.0" r="1.3" fill-opacity="0.73"/><circle cx="1263.8" cy="317.6" r="0.7" fill-opacity="0.15"/><circle cx="1003.7" cy="329.1" r="0.7" fill-opacity="0.16"/><circle cx="681.4" cy="237.3" r="1.1" fill-opacity="0.81"/><circle cx="331.4" cy="568.4" r="0.6" fill-opacity="0.37"/><circle cx="87.7" cy="776.4" r="0.5" fill-opacity="0.18"/><circle cx="584.9" cy="516.1" r="0.5" fill-opacity="0.34"/><circle cx="1127.8" cy="469.5" r="0.8" fill-opacity="0.99"/><circle cx="381.8" cy="112.6" r="0.7" fill-opacity="0.41"/><circle cx="1124.5" cy="623.0" r="0.9" fill-opacity="0.71"/><circle cx="427.8" cy="564.8" r="0.5" fill-opacity="0.26"/><circle cx="723.9" cy="422.2" r="1.0" fill-opacity="0.87"/><circle cx="1085.3" cy="447.2" r="0.7" fill-opacity="0.26"/><circle cx="1077.3" cy="575.2" r="0.7" fill-opacity="0.63"/><circle cx="1414.4" cy="91.7" r="0.5" fill-opacity="0.24"/><circle cx="1530.6" cy="109.3" r="0.7" fill-opacity="0.19"/><circle cx="240.8" cy="185.0" r="0.7" fill-opacity="0.68"/><circle cx="1551.3" cy="454.1" r="0.6" fill-opacity="0.28"/><circle cx="1180.3" cy="39.1" r="0.5" fill-opacity="0.41"/><circle cx="371.7" cy="778.1" r="0.6" fill-opacity="0.32"/><circle cx="1049.2" cy="649.9" r="0.7" fill-opacity="0.36"/><circle cx="1347.1" cy="377.3" r="0.5" fill-opacity="0.42"/><circle cx="490.4" cy="651.8" r="0.6" fill-opacity="0.44"/><circle cx="1231.6" cy="59.8" r="0.6" fill-opacity="0.44"/><circle cx="989.8" cy="150.3" r="0.5" fill-opacity="0.44"/><circle cx="1342.9" cy="574.9" r="0.5" fill-opacity="0.20"/><circle cx="187.1" cy="815.0" r="0.6" fill-opacity="0.23"/><circle cx="295.2" cy="470.9" r="0.6" fill-opacity="0.44"/><circle cx="236.7" cy="379.8" r="1.1" fill-opacity="0.69"/><circle cx="1472.7" cy="344.8" r="0.5" fill-opacity="0.43"/><circle cx="1484.5" cy="146.5" r="1.1" fill-opacity="0.99"/><circle cx="530.0" cy="585.0" r="0.6" fill-opacity="0.44"/><circle cx="1206.7" cy="815.3" r="0.7" fill-opacity="0.37"/><circle cx="1475.7" cy="292.3" r="0.6" fill-opacity="0.42"/><circle cx="223.1" cy="461.7" r="0.6" fill-opacity="0.34"/><circle cx="352.6" cy="307.2" r="0.7" fill-opacity="0.34"/><circle cx="933.5" cy="199.3" r="0.9" fill-opacity="0.64"/><circle cx="133.7" cy="699.9" r="0.5" fill-opacity="0.44"/><circle cx="631.1" cy="413.4" r="0.7" fill-opacity="0.43"/><circle cx="1453.5" cy="310.1" r="0.6" fill-opacity="0.26"/><circle cx="596.5" cy="249.2" r="0.6" fill-opacity="0.41"/><circle cx="140.2" cy="602.8" r="0.6" fill-opacity="0.39"/><circle cx="461.8" cy="664.9" r="1.0" fill-opacity="0.88"/><circle cx="662.7" cy="688.7" r="0.5" fill-opacity="0.21"/><circle cx="759.4" cy="714.3" r="0.7" fill-opacity="0.97"/><circle cx="945.1" cy="321.9" r="0.7" fill-opacity="0.42"/><circle cx="663.2" cy="465.5" r="0.5" fill-opacity="0.21"/><circle cx="1331.7" cy="253.0" r="0.6" fill-opacity="0.40"/><circle cx="486.3" cy="468.3" r="0.5" fill-opacity="0.39"/><circle cx="246.4" cy="261.5" r="0.7" fill-opacity="0.29"/><circle cx="1046.1" cy="734.4" r="0.6" fill-opacity="0.42"/><circle cx="1031.7" cy="44.7" r="1.0" fill-opacity="1.00"/><circle cx="106.8" cy="617.0" r="0.7" fill-opacity="0.28"/><circle cx="412.7" cy="569.4" r="0.7" fill-opacity="0.72"/><circle cx="1172.7" cy="36.0" r="0.7" fill-opacity="0.17"/><circle cx="511.5" cy="722.9" r="0.5" fill-opacity="0.17"/><circle cx="577.9" cy="529.7" r="0.7" fill-opacity="0.68"/><circle cx="847.4" cy="769.2" r="0.7" fill-opacity="0.20"/><circle cx="151.2" cy="622.6" r="0.6" fill-opacity="0.40"/><circle cx="1095.9" cy="262.3" r="0.7" fill-opacity="0.26"/><circle cx="855.1" cy="302.6" r="0.5" fill-opacity="0.31"/><circle cx="596.8" cy="408.9" r="0.5" fill-opacity="0.18"/><circle cx="247.3" cy="198.4" r="0.7" fill-opacity="0.33"/><circle cx="1330.3" cy="441.5" r="0.7" fill-opacity="0.36"/><circle cx="1284.1" cy="355.0" r="0.7" fill-opacity="0.92"/><circle cx="1477.5" cy="404.7" r="0.6" fill-opacity="0.19"/><circle cx="707.1" cy="810.1" r="0.6" fill-opacity="0.20"/><circle cx="487.5" cy="616.1" r="0.5" fill-opacity="0.41"/><circle cx="227.8" cy="202.8" r="0.5" fill-opacity="0.44"/><circle cx="679.7" cy="630.9" r="0.5" fill-opacity="0.38"/><circle cx="1211.7" cy="55.9" r="0.7" fill-opacity="0.30"/><circle cx="94.8" cy="116.9" r="0.5" fill-opacity="0.24"/><circle cx="16.4" cy="99.0" r="0.7" fill-opacity="0.21"/><circle cx="1441.9" cy="169.5" r="0.5" fill-opacity="0.19"/><circle cx="1193.9" cy="243.3" r="0.6" fill-opacity="0.20"/><circle cx="801.0" cy="603.4" r="0.7" fill-opacity="0.17"/><circle cx="1311.3" cy="631.1" r="0.7" fill-opacity="0.21"/><circle cx="451.0" cy="741.5" r="0.7" fill-opacity="0.18"/><circle cx="342.4" cy="424.3" r="0.6" fill-opacity="0.36"/><circle cx="296.2" cy="559.5" r="0.6" fill-opacity="0.44"/><circle cx="678.5" cy="432.4" r="0.6" fill-opacity="0.19"/><circle cx="176.5" cy="130.5" r="1.3" fill-opacity="0.68"/><circle cx="1155.4" cy="87.6" r="0.6" fill-opacity="0.24"/><circle cx="960.6" cy="271.0" r="1.0" fill-opacity="0.65"/><circle cx="651.7" cy="808.0" r="0.5" fill-opacity="0.42"/><circle cx="1283.9" cy="771.4" r="0.5" fill-opacity="0.45"/><circle cx="786.6" cy="105.9" r="0.7" fill-opacity="0.35"/><circle cx="190.7" cy="337.1" r="0.5" fill-opacity="0.37"/><circle cx="1427.9" cy="156.6" r="0.5" fill-opacity="0.25"/><circle cx="951.9" cy="812.5" r="0.6" fill-opacity="0.37"/><circle cx="445.6" cy="591.4" r="0.6" fill-opacity="0.38"/><circle cx="1281.6" cy="774.7" r="0.7" fill-opacity="0.33"/><circle cx="647.1" cy="408.7" r="0.6" fill-opacity="0.18"/><circle cx="401.1" cy="418.8" r="0.5" fill-opacity="0.16"/><circle cx="1180.5" cy="684.6" r="0.5" fill-opacity="0.44"/><circle cx="612.2" cy="564.0" r="0.7" fill-opacity="0.34"/><circle cx="1216.3" cy="549.5" r="0.6" fill-opacity="0.39"/><circle cx="323.1" cy="550.4" r="0.6" fill-opacity="0.31"/><circle cx="1295.2" cy="453.3" r="0.5" fill-opacity="0.45"/><circle cx="1408.2" cy="117.1" r="0.6" fill-opacity="0.28"/><circle cx="57.6" cy="163.1" r="0.6" fill-opacity="0.42"/><circle cx="262.6" cy="365.7" r="0.6" fill-opacity="0.30"/><circle cx="175.0" cy="560.7" r="0.7" fill-opacity="0.31"/><circle cx="751.7" cy="470.7" r="0.5" fill-opacity="0.27"/><circle cx="791.5" cy="796.8" r="0.6" fill-opacity="0.38"/><circle cx="455.1" cy="71.0" r="0.5" fill-opacity="0.40"/><circle cx="558.2" cy="614.2" r="0.7" fill-opacity="0.25"/><circle cx="155.8" cy="297.4" r="0.6" fill-opacity="0.17"/><circle cx="390.8" cy="209.2" r="0.5" fill-opacity="0.42"/><circle cx="104.8" cy="265.3" r="0.5" fill-opacity="0.31"/><circle cx="59.8" cy="546.9" r="0.7" fill-opacity="0.42"/><circle cx="426.6" cy="577.4" r="0.6" fill-opacity="0.26"/><circle cx="624.5" cy="478.9" r="0.7" fill-opacity="0.86"/><circle cx="329.5" cy="418.4" r="1.3" fill-opacity="0.70"/><circle cx="983.7" cy="311.9" r="0.6" fill-opacity="0.34"/><circle cx="1558.6" cy="82.1" r="0.8" fill-opacity="0.68"/><circle cx="76.1" cy="817.0" r="0.5" fill-opacity="0.34"/><circle cx="1532.7" cy="594.7" r="0.7" fill-opacity="0.25"/><circle cx="107.6" cy="661.3" r="0.5" fill-opacity="0.25"/><circle cx="122.7" cy="679.3" r="0.6" fill-opacity="0.28"/><circle cx="863.9" cy="181.7" r="0.7" fill-opacity="0.30"/><circle cx="1074.5" cy="459.0" r="1.3" fill-opacity="0.87"/><circle cx="1380.3" cy="482.3" r="0.7" fill-opacity="0.43"/><circle cx="428.7" cy="531.1" r="1.0" fill-opacity="0.97"/><circle cx="1162.6" cy="69.8" r="0.6" fill-opacity="0.19"/><circle cx="240.8" cy="568.9" r="0.6" fill-opacity="0.27"/><circle cx="1376.3" cy="749.1" r="0.6" fill-opacity="0.23"/><circle cx="459.3" cy="150.1" r="0.5" fill-opacity="0.27"/><circle cx="181.7" cy="175.1" r="0.6" fill-opacity="0.29"/><circle cx="895.7" cy="370.0" r="0.5" fill-opacity="0.21"/><circle cx="436.3" cy="45.3" r="0.9" fill-opacity="0.85"/><circle cx="281.6" cy="702.3" r="1.0" fill-opacity="0.90"/><circle cx="88.5" cy="737.4" r="0.6" fill-opacity="0.41"/><circle cx="1440.9" cy="346.8" r="0.7" fill-opacity="0.42"/><circle cx="635.0" cy="692.2" r="0.8" fill-opacity="0.60"/><circle cx="1175.2" cy="766.5" r="0.7" fill-opacity="0.43"/><circle cx="1490.5" cy="222.9" r="0.8" fill-opacity="0.82"/><circle cx="1237.1" cy="272.1" r="1.3" fill-opacity="0.73"/><circle cx="1197.4" cy="210.3" r="0.5" fill-opacity="0.18"/><circle cx="342.6" cy="241.1" r="0.7" fill-opacity="0.17"/><circle cx="853.6" cy="580.3" r="0.7" fill-opacity="0.28"/><circle cx="1092.4" cy="790.7" r="0.8" fill-opacity="0.71"/><circle cx="1145.1" cy="677.4" r="0.7" fill-opacity="0.16"/><circle cx="1183.1" cy="659.6" r="0.7" fill-opacity="0.22"/><circle cx="884.4" cy="268.8" r="0.9" fill-opacity="0.96"/><circle cx="1096.4" cy="448.9" r="0.6" fill-opacity="0.27"/><circle cx="1455.7" cy="335.6" r="0.9" fill-opacity="0.69"/><circle cx="1498.1" cy="625.8" r="0.5" fill-opacity="0.42"/><circle cx="1010.2" cy="723.8" r="1.0" fill-opacity="0.91"/><circle cx="438.5" cy="85.9" r="1.0" fill-opacity="0.76"/><circle cx="660.7" cy="693.2" r="0.5" fill-opacity="0.40"/><circle cx="1117.6" cy="426.1" r="0.7" fill-opacity="0.37"/><circle cx="876.4" cy="282.8" r="0.5" fill-opacity="0.34"/><circle cx="294.0" cy="375.8" r="0.5" fill-opacity="0.27"/><circle cx="1005.3" cy="272.3" r="0.5" fill-opacity="0.22"/><circle cx="1141.7" cy="634.6" r="0.5" fill-opacity="0.40"/><circle cx="1097.2" cy="654.5" r="0.6" fill-opacity="0.41"/><circle cx="213.6" cy="160.4" r="0.6" fill-opacity="0.39"/><circle cx="317.9" cy="352.8" r="0.6" fill-opacity="0.43"/><circle cx="1414.9" cy="201.1" r="1.1" fill-opacity="0.84"/><circle cx="1002.6" cy="745.7" r="0.8" fill-opacity="0.67"/><circle cx="1362.9" cy="61.7" r="0.7" fill-opacity="0.23"/><circle cx="142.5" cy="315.6" r="0.7" fill-opacity="0.56"/><circle cx="841.3" cy="639.1" r="1.3" fill-opacity="0.77"/><circle cx="359.2" cy="184.1" r="0.9" fill-opacity="0.68"/><circle cx="790.7" cy="125.9" r="1.1" fill-opacity="0.65"/><circle cx="1318.5" cy="601.9" r="0.5" fill-opacity="0.27"/><circle cx="233.5" cy="253.6" r="0.7" fill-opacity="0.29"/><circle cx="397.3" cy="487.2" r="0.5" fill-opacity="0.15"/><circle cx="213.1" cy="280.0" r="0.7" fill-opacity="0.21"/><circle cx="613.6" cy="359.8" r="0.5" fill-opacity="0.18"/><circle cx="94.0" cy="287.6" r="0.6" fill-opacity="0.45"/><circle cx="1502.9" cy="793.8" r="0.7" fill-opacity="0.39"/><circle cx="8.6" cy="424.6" r="0.6" fill-opacity="0.35"/><circle cx="211.6" cy="734.0" r="0.5" fill-opacity="0.23"/><circle cx="806.0" cy="764.4" r="0.8" fill-opacity="0.59"/><circle cx="1136.4" cy="367.5" r="0.6" fill-opacity="0.16"/><circle cx="204.6" cy="717.6" r="1.3" fill-opacity="0.71"/><circle cx="688.1" cy="742.4" r="0.6" fill-opacity="0.31"/><circle cx="697.2" cy="153.7" r="1.0" fill-opacity="0.89"/><circle cx="242.0" cy="702.7" r="0.6" fill-opacity="0.17"/><circle cx="237.8" cy="205.4" r="0.6" fill-opacity="0.20"/><circle cx="747.4" cy="114.6" r="1.0" fill-opacity="0.57"/><circle cx="570.4" cy="587.8" r="0.6" fill-opacity="0.18"/><circle cx="1151.6" cy="140.1" r="0.5" fill-opacity="0.41"/><circle cx="289.0" cy="156.3" r="0.6" fill-opacity="0.32"/><circle cx="1061.0" cy="191.5" r="0.7" fill-opacity="0.79"/><circle cx="913.3" cy="354.3" r="0.6" fill-opacity="0.35"/><circle cx="1419.8" cy="42.7" r="0.7" fill-opacity="0.19"/><circle cx="597.7" cy="763.5" r="0.6" fill-opacity="0.20"/><circle cx="129.7" cy="684.9" r="0.6" fill-opacity="0.34"/><circle cx="430.9" cy="547.1" r="0.5" fill-opacity="0.35"/><circle cx="1521.4" cy="281.3" r="1.3" fill-opacity="0.96"/><circle cx="1275.3" cy="125.2" r="1.3" fill-opacity="0.68"/><circle cx="1277.0" cy="615.6" r="0.7" fill-opacity="0.26"/><circle cx="638.2" cy="164.1" r="1.0" fill-opacity="0.59"/><circle cx="1363.8" cy="152.0" r="0.9" fill-opacity="0.84"/><circle cx="1527.1" cy="145.0" r="0.6" fill-opacity="0.37"/><circle cx="1474.7" cy="743.2" r="0.6" fill-opacity="0.35"/><circle cx="1331.3" cy="431.1" r="0.6" fill-opacity="0.29"/><circle cx="900.9" cy="359.6" r="0.9" fill-opacity="0.83"/><circle cx="694.6" cy="362.0" r="0.6" fill-opacity="0.44"/><circle cx="1082.3" cy="538.8" r="0.6" fill-opacity="0.31"/><circle cx="1035.6" cy="89.0" r="0.5" fill-opacity="0.42"/><circle cx="764.2" cy="140.6" r="0.6" fill-opacity="0.40"/><circle cx="836.9" cy="257.8" r="0.5" fill-opacity="0.43"/><circle cx="821.5" cy="429.5" r="0.6" fill-opacity="0.35"/><circle cx="909.6" cy="224.2" r="0.5" fill-opacity="0.38"/><circle cx="26.0" cy="612.9" r="0.5" fill-opacity="0.40"/><circle cx="72.4" cy="354.2" r="0.6" fill-opacity="0.33"/><circle cx="728.0" cy="556.9" r="0.6" fill-opacity="0.25"/><circle cx="1469.0" cy="668.4" r="0.5" fill-opacity="0.37"/><circle cx="966.5" cy="717.5" r="0.7" fill-opacity="0.16"/><circle cx="631.9" cy="32.6" r="0.6" fill-opacity="0.36"/><circle cx="1390.0" cy="792.7" r="0.6" fill-opacity="0.24"/><circle cx="1301.0" cy="514.2" r="0.7" fill-opacity="0.35"/><circle cx="1287.4" cy="91.9" r="0.5" fill-opacity="0.18"/><circle cx="25.4" cy="796.5" r="0.8" fill-opacity="0.77"/><circle cx="232.2" cy="214.9" r="1.1" fill-opacity="0.64"/><circle cx="481.5" cy="391.8" r="0.5" fill-opacity="0.18"/><circle cx="1443.9" cy="611.5" r="0.6" fill-opacity="0.29"/><circle cx="1375.7" cy="489.0" r="0.7" fill-opacity="0.40"/><circle cx="626.8" cy="288.4" r="0.7" fill-opacity="0.28"/><circle cx="665.1" cy="417.6" r="0.7" fill-opacity="0.32"/><circle cx="465.2" cy="411.0" r="0.7" fill-opacity="0.37"/><circle cx="1496.4" cy="744.2" r="0.8" fill-opacity="0.87"/><circle cx="845.3" cy="358.8" r="0.5" fill-opacity="0.23"/><circle cx="1037.3" cy="731.5" r="0.7" fill-opacity="0.43"/><circle cx="554.8" cy="578.6" r="0.6" fill-opacity="0.37"/><circle cx="750.8" cy="371.6" r="0.7" fill-opacity="0.42"/><circle cx="542.6" cy="502.5" r="1.3" fill-opacity="0.76"/><circle cx="1413.1" cy="599.0" r="0.6" fill-opacity="0.40"/><circle cx="1077.0" cy="608.2" r="0.8" fill-opacity="0.83"/><circle cx="451.9" cy="619.9" r="0.5" fill-opacity="0.20"/><circle cx="250.1" cy="414.8" r="1.0" fill-opacity="0.69"/><circle cx="335.1" cy="59.5" r="0.6" fill-opacity="0.26"/><circle cx="253.8" cy="682.7" r="0.7" fill-opacity="0.91"/><circle cx="540.4" cy="112.9" r="0.7" fill-opacity="0.22"/><circle cx="412.5" cy="293.6" r="0.5" fill-opacity="0.38"/><circle cx="891.2" cy="737.3" r="1.1" fill-opacity="0.82"/><circle cx="166.6" cy="62.2" r="1.0" fill-opacity="0.98"/><circle cx="1209.2" cy="799.8" r="1.1" fill-opacity="0.90"/><circle cx="1515.8" cy="679.2" r="0.5" fill-opacity="0.20"/><circle cx="188.9" cy="185.9" r="0.7" fill-opacity="0.24"/><circle cx="706.4" cy="425.7" r="0.7" fill-opacity="0.62"/><circle cx="582.0" cy="675.7" r="0.5" fill-opacity="0.28"/><circle cx="665.2" cy="635.7" r="0.6" fill-opacity="0.25"/><circle cx="808.0" cy="90.0" r="0.6" fill-opacity="0.26"/><circle cx="1064.0" cy="143.0" r="1.0" fill-opacity="0.90"/><circle cx="220.8" cy="364.2" r="1.0" fill-opacity="0.98"/><circle cx="825.8" cy="566.4" r="1.0" fill-opacity="0.62"/><circle cx="15.9" cy="665.4" r="0.7" fill-opacity="0.70"/><circle cx="642.6" cy="638.4" r="0.6" fill-opacity="0.38"/><circle cx="1056.3" cy="533.9" r="0.7" fill-opacity="0.99"/><circle cx="1568.1" cy="659.7" r="0.9" fill-opacity="0.74"/><circle cx="1417.3" cy="581.2" r="1.3" fill-opacity="0.88"/><circle cx="1454.8" cy="28.3" r="0.7" fill-opacity="0.33"/><circle cx="235.0" cy="344.3" r="0.7" fill-opacity="0.34"/><circle cx="989.1" cy="374.8" r="0.7" fill-opacity="0.27"/><circle cx="315.7" cy="262.6" r="0.6" fill-opacity="0.27"/><circle cx="1150.2" cy="724.1" r="0.7" fill-opacity="0.24"/><circle cx="148.5" cy="462.3" r="0.7" fill-opacity="0.20"/><circle cx="44.6" cy="657.7" r="0.5" fill-opacity="0.40"/><circle cx="486.3" cy="359.4" r="0.7" fill-opacity="0.17"/><circle cx="596.8" cy="522.3" r="0.5" fill-opacity="0.38"/><circle cx="1506.1" cy="380.1" r="0.5" fill-opacity="0.29"/><circle cx="1572.7" cy="664.7" r="1.1" fill-opacity="0.87"/><circle cx="1500.1" cy="553.1" r="0.8" fill-opacity="0.71"/><circle cx="455.3" cy="648.3" r="0.7" fill-opacity="0.19"/><circle cx="604.3" cy="610.5" r="0.7" fill-opacity="0.32"/><circle cx="1316.5" cy="310.3" r="0.7" fill-opacity="0.28"/><circle cx="659.3" cy="95.6" r="0.5" fill-opacity="0.29"/><circle cx="713.9" cy="316.7" r="0.7" fill-opacity="0.32"/><circle cx="1246.1" cy="717.9" r="0.7" fill-opacity="0.28"/><circle cx="704.1" cy="765.0" r="0.6" fill-opacity="0.40"/><circle cx="231.0" cy="123.4" r="0.5" fill-opacity="0.44"/><circle cx="821.1" cy="444.3" r="0.6" fill-opacity="0.29"/><circle cx="1194.4" cy="775.4" r="0.5" fill-opacity="0.33"/><circle cx="653.8" cy="118.5" r="0.5" fill-opacity="0.31"/><circle cx="188.4" cy="265.3" r="0.6" fill-opacity="0.30"/><circle cx="1265.9" cy="135.4" r="0.5" fill-opacity="0.43"/><circle cx="488.3" cy="248.2" r="0.7" fill-opacity="0.30"/><circle cx="195.7" cy="300.2" r="1.0" fill-opacity="0.77"/><circle cx="495.5" cy="383.0" r="0.6" fill-opacity="0.29"/><circle cx="1152.1" cy="505.4" r="1.1" fill-opacity="0.84"/><circle cx="1218.7" cy="554.4" r="0.7" fill-opacity="0.25"/><circle cx="1279.7" cy="552.3" r="0.5" fill-opacity="0.42"/><circle cx="542.4" cy="58.6" r="0.6" fill-opacity="0.37"/><circle cx="1033.5" cy="713.0" r="0.7" fill-opacity="0.34"/><circle cx="1234.6" cy="268.5" r="0.7" fill-opacity="0.32"/><circle cx="307.9" cy="515.7" r="0.5" fill-opacity="0.44"/><circle cx="834.8" cy="620.9" r="0.5" fill-opacity="0.19"/><circle cx="1497.9" cy="165.4" r="0.5" fill-opacity="0.22"/><circle cx="1129.0" cy="730.3" r="0.7" fill-opacity="0.33"/><circle cx="642.9" cy="57.9" r="0.7" fill-opacity="0.70"/><circle cx="288.8" cy="41.2" r="0.6" fill-opacity="0.23"/><circle cx="183.4" cy="101.3" r="0.5" fill-opacity="0.20"/><circle cx="1229.3" cy="145.1" r="1.3" fill-opacity="0.63"/><circle cx="983.2" cy="281.6" r="0.5" fill-opacity="0.24"/><circle cx="158.0" cy="135.7" r="0.9" fill-opacity="0.72"/><circle cx="1324.4" cy="118.5" r="0.7" fill-opacity="0.33"/><circle cx="788.8" cy="622.4" r="0.5" fill-opacity="0.23"/><circle cx="509.3" cy="463.4" r="0.5" fill-opacity="0.27"/><circle cx="374.0" cy="729.2" r="0.7" fill-opacity="0.35"/><circle cx="394.1" cy="464.7" r="0.9" fill-opacity="0.81"/><circle cx="713.6" cy="697.3" r="0.5" fill-opacity="0.26"/><circle cx="1576.5" cy="646.1" r="0.6" fill-opacity="0.44"/><circle cx="888.2" cy="55.4" r="1.1" fill-opacity="0.68"/><circle cx="1555.3" cy="22.4" r="1.0" fill-opacity="0.67"/><circle cx="401.4" cy="564.6" r="1.3" fill-opacity="0.65"/><circle cx="1345.1" cy="246.5" r="0.7" fill-opacity="0.32"/><circle cx="481.0" cy="337.5" r="0.5" fill-opacity="0.37"/><circle cx="1598.1" cy="722.9" r="0.7" fill-opacity="0.44"/><circle cx="509.3" cy="566.3" r="0.6" fill-opacity="0.44"/><circle cx="1132.4" cy="239.9" r="0.6" fill-opacity="0.25"/><circle cx="735.7" cy="500.4" r="0.7" fill-opacity="0.19"/><circle cx="1475.6" cy="507.8" r="0.5" fill-opacity="0.35"/><circle cx="661.1" cy="736.4" r="0.6" fill-opacity="0.31"/><circle cx="1259.7" cy="540.0" r="0.5" fill-opacity="0.42"/><circle cx="1305.7" cy="377.3" r="0.6" fill-opacity="0.40"/><circle cx="572.7" cy="163.4" r="1.3" fill-opacity="0.99"/><circle cx="199.6" cy="317.6" r="0.5" fill-opacity="0.22"/><circle cx="31.7" cy="246.3" r="0.9" fill-opacity="0.64"/><circle cx="1306.0" cy="520.9" r="0.8" fill-opacity="0.66"/><circle cx="790.1" cy="311.7" r="0.7" fill-opacity="0.36"/><circle cx="334.5" cy="178.5" r="1.0" fill-opacity="0.60"/><circle cx="443.8" cy="421.3" r="0.5" fill-opacity="0.35"/><circle cx="905.1" cy="566.5" r="0.5" fill-opacity="0.33"/><circle cx="1193.6" cy="123.7" r="0.8" fill-opacity="0.95"/><circle cx="1166.2" cy="240.9" r="0.7" fill-opacity="1.00"/><circle cx="1108.8" cy="447.3" r="0.7" fill-opacity="0.41"/><circle cx="3.1" cy="362.8" r="0.7" fill-opacity="0.17"/><circle cx="1502.0" cy="367.2" r="0.9" fill-opacity="0.60"/><circle cx="829.3" cy="417.5" r="0.5" fill-opacity="0.42"/><circle cx="359.3" cy="243.8" r="0.6" fill-opacity="0.24"/><circle cx="627.0" cy="289.1" r="0.7" fill-opacity="1.00"/><circle cx="361.0" cy="572.3" r="0.8" fill-opacity="0.64"/><circle cx="526.8" cy="72.1" r="0.5" fill-opacity="0.29"/><circle cx="1292.9" cy="494.8" r="0.6" fill-opacity="0.40"/><circle cx="395.4" cy="399.9" r="0.7" fill-opacity="0.92"/><circle cx="831.5" cy="210.9" r="0.7" fill-opacity="0.34"/><circle cx="1222.6" cy="521.0" r="0.5" fill-opacity="0.44"/><circle cx="1466.7" cy="323.2" r="1.3" fill-opacity="0.58"/><circle cx="204.1" cy="755.5" r="0.6" fill-opacity="0.33"/><circle cx="690.9" cy="103.3" r="0.5" fill-opacity="0.24"/><circle cx="610.3" cy="98.5" r="0.8" fill-opacity="0.94"/><circle cx="1260.0" cy="520.0" r="0.6" fill-opacity="0.39"/><circle cx="1407.9" cy="516.1" r="0.7" fill-opacity="0.38"/><circle cx="726.5" cy="283.9" r="0.5" fill-opacity="0.15"/><circle cx="1141.3" cy="495.1" r="1.1" fill-opacity="0.61"/><circle cx="814.2" cy="305.6" r="0.7" fill-opacity="0.28"/><circle cx="389.0" cy="658.0" r="0.6" fill-opacity="0.33"/><circle cx="821.0" cy="542.1" r="0.7" fill-opacity="0.42"/><circle cx="1240.8" cy="139.6" r="0.6" fill-opacity="0.24"/><circle cx="1552.4" cy="435.1" r="0.5" fill-opacity="0.17"/><circle cx="811.4" cy="688.5" r="1.0" fill-opacity="0.70"/><circle cx="1562.4" cy="533.2" r="0.5" fill-opacity="0.25"/><circle cx="1068.6" cy="576.4" r="1.1" fill-opacity="0.86"/><circle cx="1363.2" cy="473.7" r="0.6" fill-opacity="0.28"/><circle cx="259.6" cy="384.5" r="0.7" fill-opacity="0.77"/><circle cx="1471.9" cy="531.7" r="0.6" fill-opacity="0.34"/><circle cx="382.4" cy="608.2" r="0.9" fill-opacity="0.91"/><circle cx="601.5" cy="341.4" r="0.7" fill-opacity="0.71"/><circle cx="118.0" cy="46.0" r="0.6" fill-opacity="0.28"/><circle cx="1010.1" cy="750.3" r="0.5" fill-opacity="0.21"/><circle cx="454.6" cy="196.7" r="0.5" fill-opacity="0.25"/><circle cx="887.2" cy="164.5" r="0.6" fill-opacity="0.42"/><circle cx="33.6" cy="562.6" r="0.5" fill-opacity="0.25"/><circle cx="336.4" cy="386.1" r="0.6" fill-opacity="0.35"/><circle cx="1505.9" cy="801.7" r="1.0" fill-opacity="0.95"/><circle cx="104.6" cy="137.3" r="0.8" fill-opacity="0.64"/><circle cx="605.1" cy="320.7" r="0.7" fill-opacity="0.22"/><circle cx="73.9" cy="513.6" r="0.7" fill-opacity="0.24"/><circle cx="237.7" cy="219.2" r="0.6" fill-opacity="0.41"/><circle cx="1362.4" cy="794.8" r="0.8" fill-opacity="0.88"/><circle cx="1255.5" cy="653.2" r="0.5" fill-opacity="0.30"/><circle cx="1202.1" cy="536.8" r="0.6" fill-opacity="0.31"/><circle cx="286.4" cy="590.6" r="0.6" fill-opacity="0.36"/><circle cx="791.7" cy="236.1" r="0.7" fill-opacity="0.34"/><circle cx="331.5" cy="736.1" r="0.5" fill-opacity="0.27"/><circle cx="489.6" cy="731.2" r="0.6" fill-opacity="0.23"/><circle cx="135.6" cy="621.8" r="0.7" fill-opacity="0.26"/><circle cx="934.3" cy="393.3" r="0.6" fill-opacity="0.29"/><circle cx="692.0" cy="315.3" r="0.6" fill-opacity="0.26"/><circle cx="287.3" cy="208.6" r="0.6" fill-opacity="0.42"/><circle cx="471.2" cy="422.4" r="0.5" fill-opacity="0.39"/><circle cx="1482.6" cy="100.5" r="0.5" fill-opacity="0.31"/><circle cx="534.0" cy="560.7" r="0.7" fill-opacity="0.39"/><circle cx="1093.7" cy="241.0" r="0.5" fill-opacity="0.45"/><circle cx="1203.8" cy="612.4" r="0.7" fill-opacity="0.90"/><circle cx="451.0" cy="298.6" r="1.0" fill-opacity="0.92"/><circle cx="1212.5" cy="31.5" r="0.5" fill-opacity="0.41"/><circle cx="364.1" cy="599.2" r="0.5" fill-opacity="0.30"/><circle cx="1257.6" cy="626.6" r="1.0" fill-opacity="0.70"/><circle cx="137.4" cy="696.9" r="0.7" fill-opacity="0.28"/><circle cx="701.9" cy="702.6" r="0.5" fill-opacity="0.32"/><circle cx="205.4" cy="774.8" r="0.7" fill-opacity="0.40"/><circle cx="543.7" cy="356.5" r="0.6" fill-opacity="0.38"/><circle cx="1104.8" cy="261.1" r="0.7" fill-opacity="0.39"/><circle cx="1475.4" cy="144.6" r="0.9" fill-opacity="0.81"/><circle cx="1278.6" cy="751.2" r="0.6" fill-opacity="0.44"/><circle cx="326.7" cy="333.7" r="0.5" fill-opacity="0.29"/><circle cx="526.1" cy="789.6" r="0.6" fill-opacity="0.18"/><circle cx="166.9" cy="463.2" r="0.7" fill-opacity="0.33"/><circle cx="42.9" cy="180.8" r="1.0" fill-opacity="0.68"/><circle cx="372.9" cy="548.3" r="0.5" fill-opacity="0.26"/><circle cx="17.7" cy="282.8" r="1.0" fill-opacity="0.62"/><circle cx="177.2" cy="450.1" r="0.5" fill-opacity="0.27"/><circle cx="1445.7" cy="186.8" r="0.9" fill-opacity="0.74"/><circle cx="1135.5" cy="400.9" r="0.6" fill-opacity="0.33"/><circle cx="804.0" cy="568.5" r="0.5" fill-opacity="0.45"/><circle cx="713.2" cy="680.0" r="0.5" fill-opacity="0.31"/><circle cx="1456.5" cy="723.6" r="0.7" fill-opacity="0.16"/><circle cx="145.8" cy="537.7" r="0.9" fill-opacity="0.87"/><circle cx="1138.6" cy="259.4" r="0.5" fill-opacity="0.27"/><circle cx="287.3" cy="515.0" r="0.6" fill-opacity="0.42"/><circle cx="293.5" cy="475.8" r="0.5" fill-opacity="0.22"/><circle cx="1392.9" cy="240.5" r="0.6" fill-opacity="0.35"/><circle cx="106.8" cy="601.8" r="1.0" fill-opacity="0.74"/><circle cx="1219.0" cy="118.7" r="0.5" fill-opacity="0.30"/><circle cx="1247.2" cy="349.3" r="0.5" fill-opacity="0.30"/><circle cx="739.5" cy="80.4" r="0.7" fill-opacity="0.29"/><circle cx="549.9" cy="340.7" r="0.5" fill-opacity="0.15"/><circle cx="183.5" cy="753.9" r="0.7" fill-opacity="0.29"/><circle cx="738.2" cy="87.9" r="0.7" fill-opacity="0.44"/><circle cx="224.4" cy="676.7" r="0.8" fill-opacity="0.93"/><circle cx="971.2" cy="163.4" r="0.7" fill-opacity="0.27"/><circle cx="124.1" cy="631.3" r="0.5" fill-opacity="0.28"/><circle cx="284.7" cy="592.1" r="1.1" fill-opacity="0.65"/><circle cx="1114.8" cy="689.5" r="1.3" fill-opacity="0.85"/><circle cx="1056.1" cy="104.0" r="0.6" fill-opacity="0.17"/><circle cx="7.5" cy="638.4" r="0.8" fill-opacity="0.72"/><circle cx="381.7" cy="94.9" r="0.5" fill-opacity="0.25"/><circle cx="307.4" cy="555.8" r="0.5" fill-opacity="0.39"/><circle cx="1328.7" cy="156.0" r="0.6" fill-opacity="0.30"/><circle cx="1305.0" cy="279.5" r="0.7" fill-opacity="0.21"/><circle cx="866.7" cy="771.3" r="0.5" fill-opacity="0.18"/><circle cx="517.4" cy="34.0" r="0.5" fill-opacity="0.27"/><circle cx="734.0" cy="74.7" r="1.3" fill-opacity="0.83"/><circle cx="70.3" cy="728.6" r="0.7" fill-opacity="0.30"/><circle cx="1584.8" cy="590.6" r="1.1" fill-opacity="0.63"/><circle cx="1534.5" cy="500.7" r="1.3" fill-opacity="0.72"/><circle cx="1479.3" cy="637.6" r="0.5" fill-opacity="0.34"/><circle cx="1414.3" cy="275.7" r="1.0" fill-opacity="0.58"/><circle cx="28.2" cy="749.9" r="0.7" fill-opacity="0.34"/><circle cx="371.9" cy="490.8" r="0.8" fill-opacity="0.56"/><circle cx="1214.3" cy="121.0" r="0.6" fill-opacity="0.38"/><circle cx="991.6" cy="69.8" r="0.6" fill-opacity="0.21"/><circle cx="601.2" cy="534.3" r="0.7" fill-opacity="0.33"/><circle cx="1513.4" cy="611.9" r="0.6" fill-opacity="0.25"/><circle cx="1259.2" cy="53.6" r="1.0" fill-opacity="0.84"/><circle cx="461.5" cy="40.9" r="0.9" fill-opacity="0.70"/><circle cx="329.3" cy="65.2" r="0.8" fill-opacity="0.91"/><circle cx="1114.0" cy="199.5" r="1.1" fill-opacity="0.69"/><circle cx="707.8" cy="26.8" r="0.7" fill-opacity="0.98"/><circle cx="83.4" cy="813.6" r="0.8" fill-opacity="0.59"/><circle cx="948.2" cy="685.3" r="0.8" fill-opacity="0.78"/><circle cx="682.0" cy="394.7" r="0.5" fill-opacity="0.22"/><circle cx="282.3" cy="220.7" r="0.6" fill-opacity="0.44"/><circle cx="322.2" cy="710.2" r="0.6" fill-opacity="0.27"/><circle cx="268.4" cy="374.2" r="0.7" fill-opacity="0.28"/><circle cx="249.4" cy="783.1" r="0.6" fill-opacity="0.28"/><circle cx="133.2" cy="745.4" r="0.7" fill-opacity="0.20"/><circle cx="1162.6" cy="227.3" r="0.6" fill-opacity="0.23"/><circle cx="899.4" cy="405.7" r="0.7" fill-opacity="0.29"/></g>
<g fill="#05080b" filter="url(#soft)"><polygon points="5.0,775.0 10.6,785.0 8.7,787.5 16.9,796.4 12.9,798.9 19.5,803.8 15.6,806.3 27.8,813.9 19.3,816.4 27.4,823.2 22.7,825.7 29.5,833.0 26.3,835.5 44.1,841.4 29.4,843.9 47.1,849.4 32.3,851.9 42.4,859.3 36.0,861.8 45.3,870.5 37.3,873.0 56.1,882.1 37.3,884.6 50.7,893.6 37.3,896.1 57.2,901.7 37.3,904.2 -27.3,904.2 -43.1,901.7 -27.3,896.1 -42.9,893.6 -27.3,884.6 -36.6,882.1 -27.3,873.0 -35.4,870.5 -26.0,861.8 -30.5,859.3 -22.3,851.9 -28.1,849.4 -19.4,843.9 -32.3,841.4 -16.3,835.5 -21.7,833.0 -12.7,825.7 -20.1,823.2 -9.3,816.4 -12.1,813.9 -5.6,806.3 -12.1,803.8 -2.9,798.9 -7.6,796.4 1.3,787.5 -0.7,785.0"/><polygon points="23.0,762.0 27.3,770.0 25.9,772.5 31.2,778.1 28.9,780.6 35.8,787.5 32.4,790.0 41.5,795.8 35.4,798.3 47.9,806.0 39.2,808.5 48.7,817.5 43.4,820.0 57.7,828.0 47.3,830.5 67.3,838.2 51.0,840.7 63.1,846.4 54.0,848.9 63.5,858.0 55.3,860.5 69.6,867.6 55.3,870.1 69.7,878.5 55.3,881.0 67.7,886.3 55.3,888.8 71.0,894.1 55.3,896.6 63.3,902.0 55.3,904.5 -9.3,904.5 -25.1,902.0 -9.3,896.6 -24.2,894.1 -9.3,888.8 -28.9,886.3 -9.3,881.0 -18.9,878.5 -9.3,870.1 -22.5,867.6 -9.3,860.5 -25.7,858.0 -8.0,848.9 -12.6,846.4 -5.0,840.7 -20.7,838.2 -1.3,830.5 -7.2,828.0 2.6,820.0 -2.7,817.5 6.8,808.5 -2.5,806.0 10.6,798.3 6.8,795.8 13.6,790.0 11.1,787.5 17.1,780.6 14.8,778.1 20.1,772.5 19.1,770.0"/><polygon points="45.0,785.0 48.2,792.3 47.7,794.8 52.8,802.5 51.4,805.0 59.4,810.8 54.5,813.3 64.7,821.3 58.3,823.8 68.1,830.9 61.9,833.4 70.2,842.6 66.2,845.1 79.1,854.0 70.4,856.5 82.9,862.7 73.6,865.2 84.5,870.9 76.6,873.4 97.4,880.5 77.3,883.0 85.3,889.3 77.3,891.8 82.5,901.0 77.3,903.5 12.7,903.5 -3.8,901.0 12.7,891.8 -5.5,889.3 12.7,883.0 -5.5,880.5 13.4,873.4 -0.3,870.9 16.4,865.2 -1.3,862.7 19.6,856.5 13.5,854.0 23.8,845.1 20.6,842.6 28.1,833.4 22.2,830.9 31.7,823.8 28.8,821.3 35.5,813.3 33.5,810.8 38.6,805.0 37.3,802.5 42.3,794.8 41.4,792.3"/><polygon points="70.0,792.0 74.7,801.0 73.3,803.5 77.9,809.0 76.3,811.5 80.4,816.8 79.1,819.3 90.6,826.3 82.6,828.8 91.3,835.2 85.9,837.7 92.5,843.8 89.1,846.3 97.2,853.8 92.7,856.3 111.4,861.4 95.5,863.9 117.5,871.5 99.2,874.0 114.7,880.4 102.3,882.9 111.1,888.4 102.3,890.9 117.9,895.9 102.3,898.4 107.6,905.0 102.3,907.5 37.7,907.5 21.5,905.0 37.7,898.4 19.8,895.9 37.7,890.9 29.0,888.4 37.7,882.9 18.2,880.4 40.8,874.0 36.1,871.5 44.5,863.9 39.5,861.4 47.3,856.3 43.2,853.8 50.9,846.3 40.2,843.8 54.1,837.7 46.4,835.2 57.4,828.8 51.2,826.3 60.9,819.3 58.9,816.8 63.7,811.5 62.8,809.0 66.7,803.5 64.8,801.0"/><polygon points="100.0,783.0 103.9,790.4 102.7,792.9 110.1,799.9 106.2,802.4 115.3,811.5 110.5,814.0 119.9,818.8 113.1,821.3 122.4,828.7 116.8,831.2 130.9,838.8 120.5,841.3 137.3,848.5 124.1,851.0 133.5,858.2 127.7,860.7 143.9,866.1 130.6,868.6 146.5,876.8 132.3,879.3 140.5,886.3 132.3,888.8 143.4,897.4 132.3,899.9 147.3,906.6 132.3,909.1 67.7,909.1 55.8,906.6 67.7,899.9 59.5,897.4 67.7,888.8 47.2,886.3 67.7,879.3 57.1,876.8 69.4,868.6 58.6,866.1 72.3,860.7 60.7,858.2 75.9,851.0 65.1,848.5 79.5,841.3 69.5,838.8 83.2,831.2 72.6,828.7 86.9,821.3 81.6,818.8 89.5,814.0 83.4,811.5 93.8,802.4 92.0,799.9 97.3,792.9 96.9,790.4"/><polygon points="125.0,790.0 130.4,801.3 129.2,803.8 136.5,809.1 132.0,811.6 140.5,819.3 135.8,821.8 143.8,828.4 139.1,830.9 147.0,835.9 141.9,838.4 153.4,846.6 145.8,849.1 155.9,854.0 148.5,856.5 160.8,861.3 151.2,863.8 169.9,869.0 154.0,871.5 164.1,879.9 157.3,882.4 174.9,888.2 157.3,890.7 174.1,897.7 157.3,900.2 167.0,908.5 157.3,911.0 92.7,911.0 72.5,908.5 92.7,900.2 75.5,897.7 92.7,890.7 75.2,888.2 92.7,882.4 73.0,879.9 96.0,871.5 79.0,869.0 98.8,863.8 85.0,861.3 101.5,856.5 86.6,854.0 104.2,849.1 100.2,846.6 108.1,838.4 103.4,835.9 110.9,830.9 106.1,828.4 114.2,821.8 108.8,819.3 118.0,811.6 116.4,809.1 120.8,803.8 119.3,801.3"/><polygon points="152.0,745.0 157.4,754.4 155.5,756.9 159.9,763.3 158.7,765.8 164.6,771.4 161.7,773.9 167.2,778.8 164.4,781.3 174.7,789.7 168.4,792.2 177.9,800.9 172.6,803.4 188.0,808.9 175.5,811.4 188.1,819.5 179.4,822.0 200.8,827.5 182.3,830.0 204.1,836.8 184.3,839.3 192.7,845.4 184.3,847.9 199.1,855.9 184.3,858.4 191.0,867.2 184.3,869.7 199.6,878.1 184.3,880.6 196.6,888.2 184.3,890.7 204.3,897.3 184.3,899.8 194.0,905.7 184.3,908.2 119.7,908.2 112.5,905.7 119.7,899.8 110.6,897.3 119.7,890.7 106.0,888.2 119.7,880.6 105.0,878.1 119.7,869.7 109.1,867.2 119.7,858.4 106.1,855.9 119.7,847.9 100.3,845.4 119.7,839.3 105.4,836.8 121.7,830.0 112.5,827.5 124.6,822.0 112.9,819.5 128.5,811.4 124.9,808.9 131.4,803.4 123.9,800.9 135.6,792.2 128.1,789.7 139.6,781.3 135.9,778.8 142.3,773.9 136.9,771.4 145.3,765.8 142.1,763.3 148.5,756.9 147.9,754.4"/><polygon points="175.0,780.0 180.2,788.9 178.3,791.4 184.7,797.0 181.2,799.5 186.6,807.3 185.0,809.8 191.8,816.0 188.2,818.5 197.8,824.4 191.3,826.9 207.5,834.2 194.9,836.7 209.3,842.8 198.1,845.3 218.1,854.1 202.2,856.6 210.6,863.6 205.7,866.1 225.3,872.8 207.3,875.3 221.5,884.4 207.3,886.9 227.8,894.1 207.3,896.6 222.6,905.0 207.3,907.5 142.7,907.5 134.0,905.0 142.7,896.6 133.1,894.1 142.7,886.9 136.2,884.4 142.7,875.3 132.0,872.8 144.3,866.1 138.9,863.6 147.8,856.6 133.0,854.1 151.9,845.3 144.6,842.8 155.1,836.7 147.4,834.2 158.7,826.9 156.3,824.4 161.8,818.5 157.7,816.0 165.0,809.8 161.5,807.3 168.8,799.5 165.5,797.0 171.7,791.4 170.6,788.9"/><polygon points="193.0,772.0 197.3,780.5 196.1,783.0 201.3,788.1 198.9,790.6 206.3,797.8 202.5,800.3 209.5,807.1 205.9,809.6 218.1,815.0 208.8,817.5 220.1,824.7 212.4,827.2 227.1,832.7 215.3,835.2 224.5,842.7 219.0,845.2 240.8,854.3 223.3,856.8 236.8,863.5 225.3,866.0 245.6,870.9 225.3,873.4 237.8,879.9 225.3,882.4 241.1,891.2 225.3,893.7 240.4,900.7 225.3,903.2 160.7,903.2 143.2,900.7 160.7,893.7 143.4,891.2 160.7,882.4 140.1,879.9 160.7,873.4 149.6,870.9 160.7,866.0 153.6,863.5 162.7,856.8 148.4,854.3 167.0,845.2 153.9,842.7 170.7,835.2 159.4,832.7 173.6,827.2 170.2,824.7 177.2,817.5 167.9,815.0 180.1,809.6 172.9,807.1 183.5,800.3 178.4,797.8 187.1,790.6 183.4,788.1 189.9,783.0 188.6,780.5"/><polygon points="228.0,795.0 233.0,804.5 231.5,807.0 239.6,815.9 235.7,818.4 245.3,825.1 239.1,827.6 245.6,835.0 242.7,837.5 255.0,846.6 247.0,849.1 255.5,856.6 250.6,859.1 264.6,867.3 254.6,869.8 271.3,878.9 258.8,881.4 274.6,886.5 260.3,889.0 280.0,894.9 260.3,897.4 278.9,904.6 260.3,907.1 195.7,907.1 184.6,904.6 195.7,897.4 181.0,894.9 195.7,889.0 183.1,886.5 197.2,881.4 185.8,878.9 201.4,869.8 192.5,867.3 205.4,859.1 198.4,856.6 209.0,849.1 202.8,846.6 213.3,837.5 207.9,835.0 216.9,827.6 211.3,825.1 220.3,818.4 216.3,815.9 224.5,807.0 223.5,804.5"/><polygon points="258.0,758.0 263.5,768.2 261.8,770.7 269.2,777.6 265.2,780.1 272.9,786.1 268.3,788.6 276.6,796.1 272.0,798.6 284.7,804.6 275.1,807.1 283.7,813.0 278.2,815.5 287.6,821.5 281.3,824.0 293.6,833.1 285.6,835.6 298.5,841.9 288.8,844.4 310.6,852.9 290.3,855.4 306.6,863.3 290.3,865.8 296.9,872.3 290.3,874.8 301.8,881.6 290.3,884.1 298.8,889.5 290.3,892.0 302.8,901.2 290.3,903.7 225.7,903.7 212.5,901.2 225.7,892.0 216.1,889.5 225.7,884.1 208.2,881.6 225.7,874.8 209.4,872.3 225.7,865.8 209.8,863.3 225.7,855.4 217.4,852.9 227.2,844.4 219.2,841.9 230.4,835.6 216.5,833.1 234.7,824.0 225.2,821.5 237.8,815.5 234.6,813.0 240.9,807.1 230.5,804.6 244.0,798.6 236.1,796.1 247.7,788.6 245.4,786.1 250.8,780.1 249.3,777.6 254.2,770.7 252.6,768.2"/><polygon points="278.0,756.0 282.8,765.0 281.3,767.5 286.9,772.4 284.0,774.9 288.9,780.9 287.1,783.4 293.1,788.4 289.9,790.9 301.4,798.6 293.6,801.1 299.8,807.6 297.0,810.1 304.3,817.9 300.8,820.4 316.8,829.4 305.0,831.9 327.9,838.9 308.5,841.4 321.9,848.0 310.3,850.5 317.0,857.3 310.3,859.8 323.7,868.5 310.3,871.0 324.1,878.8 310.3,881.3 326.1,889.0 310.3,891.5 319.5,899.5 310.3,902.0 330.4,910.9 310.3,913.4 245.7,913.4 236.7,910.9 245.7,902.0 233.6,899.5 245.7,891.5 226.3,889.0 245.7,881.3 237.1,878.8 245.7,871.0 235.8,868.5 245.7,859.8 232.6,857.3 245.7,850.5 226.1,848.0 247.5,841.4 228.1,838.9 251.0,831.9 239.6,829.4 255.2,820.4 242.7,817.9 259.0,810.1 253.1,807.6 262.4,801.1 256.9,798.6 266.1,790.9 259.5,788.4 268.9,783.4 265.3,780.9 272.0,774.9 268.2,772.4 274.7,767.5 272.6,765.0"/><polygon points="305.0,785.0 310.0,794.5 308.5,797.0 316.2,805.8 312.6,808.3 322.2,816.4 316.5,818.9 322.5,825.8 320.0,828.3 331.8,835.1 323.4,837.6 338.6,844.5 326.8,847.0 344.7,855.4 330.9,857.9 353.2,867.0 335.1,869.5 345.4,876.0 337.3,878.5 350.6,886.4 337.3,888.9 355.1,895.6 337.3,898.1 354.5,904.5 337.3,907.0 272.7,907.0 257.3,904.5 272.7,898.1 265.4,895.6 272.7,888.9 261.3,886.4 272.7,878.5 262.4,876.0 274.9,869.5 256.9,867.0 279.1,857.9 268.6,855.4 283.2,847.0 270.3,844.5 286.6,837.6 283.3,835.1 290.0,828.3 282.6,825.8 293.5,818.9 286.7,816.4 297.4,808.3 294.4,805.8 301.5,797.0 300.6,794.5"/><polygon points="335.0,752.0 340.4,762.8 339.0,765.3 344.1,771.6 342.2,774.1 349.9,782.9 346.3,785.4 355.8,791.8 349.6,794.3 361.6,802.1 353.4,804.6 360.5,812.3 357.2,814.8 370.4,820.0 360.0,822.5 371.2,829.2 363.4,831.7 372.7,839.5 367.1,842.0 372.6,850.3 367.3,852.8 379.2,858.3 367.3,860.8 372.6,867.8 367.3,870.3 378.6,877.1 367.3,879.6 381.5,885.3 367.3,887.8 382.9,893.8 367.3,896.3 386.6,902.6 367.3,905.1 302.7,905.1 288.8,902.6 302.7,896.3 282.4,893.8 302.7,887.8 285.6,885.3 302.7,879.6 282.8,877.1 302.7,870.3 283.2,867.8 302.7,860.8 295.1,858.3 302.7,852.8 294.2,850.3 302.9,842.0 288.2,839.5 306.6,831.7 299.0,829.2 310.0,822.5 305.7,820.0 312.8,814.8 301.0,812.3 316.6,804.6 307.5,802.1 320.4,794.3 313.3,791.8 323.7,785.4 318.3,782.9 327.8,774.1 325.9,771.6 331.0,765.3 330.4,762.8"/><polygon points="368.0,765.0 372.5,773.8 371.2,776.3 375.9,783.6 374.8,786.1 382.9,791.9 377.9,794.4 384.9,802.5 381.8,805.0 390.0,810.7 384.8,813.2 399.4,821.7 388.9,824.2 406.9,831.0 392.2,833.5 407.3,841.2 396.0,843.7 406.6,851.1 399.6,853.6 416.4,861.2 400.3,863.7 414.3,870.5 400.3,873.0 415.0,879.4 400.3,881.9 407.1,887.0 400.3,889.5 413.3,898.3 400.3,900.8 411.8,906.8 400.3,909.3 335.7,909.3 317.7,906.8 335.7,900.8 329.4,898.3 335.7,889.5 319.5,887.0 335.7,881.9 326.3,879.4 335.7,873.0 315.4,870.5 335.7,863.7 315.5,861.2 336.4,853.6 318.5,851.1 340.0,843.7 330.5,841.2 343.8,833.5 328.9,831.0 347.1,824.2 337.3,821.7 351.2,813.2 346.7,810.7 354.2,805.0 349.1,802.5 358.1,794.4 351.8,791.9 361.2,786.1 358.2,783.6 364.8,776.3 363.4,773.8"/><polygon points="392.0,770.0 395.4,777.4 394.7,779.9 400.8,785.2 397.6,787.7 403.3,792.5 400.3,795.0 406.0,799.8 402.9,802.3 413.8,807.8 405.9,810.3 415.3,818.2 409.7,820.7 423.3,827.3 413.1,829.8 421.8,837.4 416.8,839.9 430.4,845.2 419.6,847.7 440.0,854.1 422.9,856.6 439.8,862.4 424.3,864.9 431.3,873.1 424.3,875.6 441.1,881.4 424.3,883.9 441.6,891.7 424.3,894.2 445.0,901.0 424.3,903.5 359.7,903.5 350.4,901.0 359.7,894.2 339.1,891.7 359.7,883.9 345.7,881.4 359.7,875.6 346.3,873.1 359.7,864.9 342.3,862.4 361.1,856.6 354.9,854.1 364.4,847.7 348.5,845.2 367.2,839.9 361.9,837.4 370.9,829.8 362.8,827.3 374.3,820.7 370.9,818.2 378.1,810.3 374.0,807.8 381.1,802.3 377.0,799.8 383.7,795.0 381.9,792.5 386.4,787.7 384.8,785.2 389.3,779.9 387.9,777.4"/><polygon points="413.0,725.0 416.6,732.9 415.9,735.4 421.7,742.0 419.2,744.5 426.3,750.7 422.5,753.2 430.9,759.4 425.7,761.9 438.7,770.2 429.6,772.7 439.1,780.0 433.2,782.5 444.3,790.5 437.1,793.0 449.1,799.7 440.5,802.2 453.9,808.6 443.7,811.1 465.1,818.1 445.3,820.6 460.9,828.4 445.3,830.9 459.8,836.8 445.3,839.3 460.0,844.6 445.3,847.1 463.0,852.4 445.3,854.9 458.1,862.6 445.3,865.1 456.6,872.5 445.3,875.0 453.9,882.2 445.3,884.7 462.1,893.3 445.3,895.8 455.1,903.3 445.3,905.8 380.7,905.8 372.5,903.3 380.7,895.8 368.0,893.3 380.7,884.7 371.0,882.2 380.7,875.0 359.9,872.5 380.7,865.1 361.9,862.6 380.7,854.9 366.3,852.4 380.7,847.1 373.0,844.6 380.7,839.3 374.8,836.8 380.7,830.9 360.5,828.4 380.7,820.6 374.5,818.1 382.3,811.1 377.5,808.6 385.5,802.2 376.8,799.7 388.9,793.0 383.0,790.5 392.8,782.5 382.2,780.0 396.4,772.7 388.4,770.2 400.3,761.9 395.6,759.4 403.5,753.2 401.2,750.7 406.8,744.5 404.9,742.0 410.1,735.4 409.7,732.9"/><polygon points="435.0,755.0 440.4,764.4 438.4,766.9 443.3,774.3 442.1,776.8 450.1,785.7 446.3,788.2 459.6,796.6 450.3,799.1 457.0,805.3 453.5,807.8 462.1,814.9 457.0,817.4 470.8,823.6 460.2,826.1 472.8,831.4 463.1,833.9 476.4,838.8 465.8,841.3 478.2,846.0 467.3,848.5 480.7,856.6 467.3,859.1 485.7,867.5 467.3,870.0 473.9,877.0 467.3,879.5 473.4,885.1 467.3,887.6 486.8,895.9 467.3,898.4 474.8,903.8 467.3,906.3 402.7,906.3 384.3,903.8 402.7,898.4 393.3,895.9 402.7,887.6 385.5,885.1 402.7,879.5 390.7,877.0 402.7,870.0 385.7,867.5 402.7,859.1 382.6,856.6 402.7,848.5 391.9,846.0 404.2,841.3 391.2,838.8 406.9,833.9 392.4,831.4 409.8,826.1 400.8,823.6 413.0,817.4 403.9,814.9 416.5,807.8 410.6,805.3 419.7,799.1 413.3,796.6 423.7,788.2 416.7,785.7 427.9,776.8 425.6,774.3 431.6,766.9 430.1,764.4"/><polygon points="454.0,667.0 458.4,674.7 456.8,677.2 460.6,682.4 459.7,684.9 466.6,689.7 462.3,692.2 469.0,700.6 466.4,703.1 477.8,707.9 469.0,710.4 482.2,716.2 472.1,718.7 489.5,726.2 475.7,728.7 493.0,736.8 479.6,739.3 501.6,746.2 483.1,748.7 500.1,757.6 486.3,760.1 494.8,765.8 486.3,768.3 500.6,773.3 486.3,775.8 503.7,781.5 486.3,784.0 503.2,793.0 486.3,795.5 500.3,801.4 486.3,803.9 504.5,809.8 486.3,812.3 496.4,819.1 486.3,821.6 503.2,828.6 486.3,831.1 492.8,836.1 486.3,838.6 499.1,844.5 486.3,847.0 496.1,852.7 486.3,855.2 494.6,863.8 486.3,866.3 491.4,875.0 486.3,877.5 500.9,884.2 486.3,886.7 506.4,892.8 486.3,895.3 506.5,900.2 486.3,902.7 421.7,902.7 407.7,900.2 421.7,895.3 401.3,892.8 421.7,886.7 403.5,884.2 421.7,877.5 411.0,875.0 421.7,866.3 403.7,863.8 421.7,855.2 416.2,852.7 421.7,847.0 403.0,844.5 421.7,838.6 409.1,836.1 421.7,831.1 409.3,828.6 421.7,821.6 412.6,819.1 421.7,812.3 403.4,809.8 421.7,803.9 401.8,801.4 421.7,795.5 409.9,793.0 421.7,784.0 403.9,781.5 421.7,775.8 407.5,773.3 421.7,768.3 411.8,765.8 421.7,760.1 410.0,757.6 424.9,748.7 419.4,746.2 428.4,739.3 415.1,736.8 432.3,728.7 418.6,726.2 435.9,718.7 429.0,716.2 439.0,710.4 435.9,707.9 441.6,703.1 436.4,700.6 445.7,692.2 443.4,689.7 448.3,684.9 446.5,682.4 451.2,677.2 450.5,674.7"/><polygon points="484.0,748.0 488.5,758.7 487.9,761.2 495.6,768.3 491.5,770.8 497.9,777.6 494.9,780.1 507.9,788.1 498.7,790.6 512.1,798.2 502.4,800.7 509.9,808.7 506.3,811.2 523.4,819.5 510.3,822.0 527.0,827.3 513.1,829.8 530.9,834.9 515.9,837.4 522.2,843.4 516.3,845.9 523.2,850.9 516.3,853.4 528.1,861.5 516.3,864.0 529.5,871.9 516.3,874.4 536.1,881.5 516.3,884.0 526.5,892.0 516.3,894.5 525.7,902.6 516.3,905.1 451.7,905.1 439.2,902.6 451.7,894.5 444.1,892.0 451.7,884.0 444.9,881.5 451.7,874.4 445.4,871.9 451.7,864.0 443.1,861.5 451.7,853.4 431.0,850.9 451.7,845.9 443.6,843.4 452.1,837.4 443.7,834.9 454.9,829.8 446.8,827.3 457.7,822.0 446.2,819.5 461.7,811.2 455.8,808.7 465.6,800.7 455.6,798.2 469.3,790.6 462.8,788.1 473.1,780.1 467.1,777.6 476.5,770.8 474.2,768.3 480.1,761.2 478.2,758.7"/><polygon points="510.0,760.0 515.5,770.8 514.0,773.3 519.7,780.4 517.5,782.9 525.1,792.1 521.8,794.6 528.3,802.8 525.7,805.3 533.9,811.8 529.0,814.3 538.9,821.3 532.5,823.8 542.7,831.0 536.1,833.5 550.4,840.7 539.7,843.2 556.2,848.1 542.3,850.6 553.0,858.4 542.3,860.9 553.1,869.7 542.3,872.2 555.7,877.9 542.3,880.4 562.7,886.3 542.3,888.8 560.9,897.2 542.3,899.7 550.6,907.8 542.3,910.3 477.7,910.3 462.1,907.8 477.7,899.7 460.8,897.2 477.7,888.8 468.8,886.3 477.7,880.4 460.8,877.9 477.7,872.2 472.9,869.7 477.7,860.9 467.6,858.4 477.7,850.6 470.0,848.1 480.3,843.2 475.0,840.7 483.9,833.5 474.9,831.0 487.5,823.8 477.4,821.3 491.0,814.3 480.2,811.8 494.3,805.3 484.8,802.8 498.2,794.6 492.6,792.1 502.5,782.9 498.8,780.4 506.0,773.3 504.8,770.8"/><polygon points="540.0,775.0 545.8,786.3 544.1,788.8 551.6,796.3 547.8,798.8 554.2,805.6 551.2,808.1 559.3,814.4 554.5,816.9 563.2,822.0 557.3,824.5 567.3,830.3 560.3,832.8 571.7,841.2 564.3,843.7 574.9,852.3 568.4,854.8 584.2,863.5 572.3,866.0 585.3,871.6 572.3,874.1 586.4,881.8 572.3,884.3 583.2,892.1 572.3,894.6 587.4,900.4 572.3,902.9 507.7,902.9 493.9,900.4 507.7,894.6 500.4,892.1 507.7,884.3 497.0,881.8 507.7,874.1 487.3,871.6 507.7,866.0 495.5,863.5 511.6,854.8 503.7,852.3 515.7,843.7 504.1,841.2 519.7,832.8 510.8,830.3 522.7,824.5 512.9,822.0 525.5,816.9 519.6,814.4 528.8,808.1 525.1,805.6 532.2,798.8 529.6,796.3 535.9,788.8 535.2,786.3"/><polygon points="575.0,790.0 580.6,800.2 578.7,802.7 585.4,811.1 582.8,813.6 591.9,820.5 586.2,823.0 594.3,831.2 590.1,833.7 603.4,842.3 594.2,844.8 602.7,851.4 597.6,853.9 618.4,862.4 601.6,864.9 614.8,872.9 605.5,875.4 615.2,880.4 607.3,882.9 625.8,888.8 607.3,891.3 620.2,898.4 607.3,900.9 617.1,909.4 607.3,911.9 542.7,911.9 527.8,909.4 542.7,900.9 535.1,898.4 542.7,891.3 528.2,888.8 542.7,882.9 522.1,880.4 544.5,875.4 525.9,872.9 548.4,864.9 540.5,862.4 552.4,853.9 539.6,851.4 555.8,844.8 550.5,842.3 559.9,833.7 550.5,831.2 563.8,823.0 560.7,820.5 567.2,813.6 563.6,811.1 571.3,802.7 568.9,800.2"/><polygon points="610.0,800.0 613.9,807.8 612.9,810.3 617.9,817.0 616.3,819.5 623.5,825.6 619.4,828.1 625.5,836.2 623.3,838.7 630.7,847.6 627.5,850.1 637.3,855.6 630.4,858.1 649.9,867.1 634.7,869.6 649.2,877.8 638.6,880.3 651.2,886.2 641.7,888.7 659.9,897.9 642.3,900.4 651.7,907.7 642.3,910.2 577.7,910.2 568.8,907.7 577.7,900.4 571.5,897.9 578.3,888.7 567.5,886.2 581.4,880.3 575.9,877.8 585.3,869.6 578.0,867.1 589.6,858.1 580.9,855.6 592.5,850.1 586.6,847.6 596.7,838.7 592.9,836.2 600.6,828.1 598.2,825.6 603.7,819.5 600.8,817.0 607.1,810.3 605.5,807.8"/><polygon points="1040.0,770.0 1045.1,779.3 1043.4,781.8 1049.1,787.4 1046.4,789.9 1052.5,796.6 1049.8,799.1 1057.8,804.9 1052.8,807.4 1067.2,816.3 1057.0,818.8 1070.7,825.7 1060.5,828.2 1069.3,834.3 1063.6,836.8 1082.3,845.8 1067.9,848.3 1090.1,856.5 1071.8,859.0 1079.6,863.8 1072.3,866.3 1090.3,873.5 1072.3,876.0 1082.5,881.1 1072.3,883.6 1078.3,891.7 1072.3,894.2 1092.1,900.5 1072.3,903.0 1007.7,903.0 998.4,900.5 1007.7,894.2 988.5,891.7 1007.7,883.6 999.9,881.1 1007.7,876.0 999.0,873.5 1007.7,866.3 993.4,863.8 1008.2,859.0 1002.4,856.5 1012.1,848.3 997.5,845.8 1016.4,836.8 1012.8,834.3 1019.5,828.2 1012.8,825.7 1023.0,818.8 1020.0,816.3 1027.2,807.4 1019.9,804.9 1030.2,799.1 1027.2,796.6 1033.6,789.9 1030.4,787.4 1036.6,781.8 1035.4,779.3"/><polygon points="1070.0,730.0 1076.1,741.5 1074.2,744.0 1078.7,750.5 1077.5,753.0 1087.0,759.2 1080.7,761.7 1087.7,770.1 1084.7,772.6 1093.7,780.9 1088.7,783.4 1100.6,788.3 1091.4,790.8 1108.6,795.7 1094.2,798.2 1105.2,806.3 1098.0,808.8 1115.0,817.3 1102.1,819.8 1115.9,828.7 1102.3,831.2 1121.5,838.6 1102.3,841.1 1119.5,850.3 1102.3,852.8 1116.9,859.2 1102.3,861.7 1115.3,869.9 1102.3,872.4 1119.5,878.0 1102.3,880.5 1113.2,889.6 1102.3,892.1 1113.4,898.4 1102.3,900.9 1119.9,909.4 1102.3,911.9 1037.7,911.9 1017.1,909.4 1037.7,900.9 1030.1,898.4 1037.7,892.1 1032.6,889.6 1037.7,880.5 1020.2,878.0 1037.7,872.4 1024.2,869.9 1037.7,861.7 1022.8,859.2 1037.7,852.8 1032.6,850.3 1037.7,841.1 1027.5,838.6 1037.7,831.2 1030.3,828.7 1037.9,819.8 1018.9,817.3 1042.0,808.8 1029.9,806.3 1045.8,798.2 1033.4,795.7 1048.6,790.8 1044.9,788.3 1051.3,783.4 1040.6,780.9 1055.3,772.6 1052.5,770.1 1059.3,761.7 1054.3,759.2 1062.5,753.0 1059.1,750.5 1065.8,744.0 1063.2,741.5"/><polygon points="1092.0,655.0 1096.5,663.0 1095.0,665.5 1099.6,672.3 1098.4,674.8 1104.3,681.3 1101.7,683.8 1110.8,689.3 1104.6,691.8 1111.8,696.9 1107.4,699.4 1120.8,706.3 1110.8,708.8 1127.2,716.3 1114.5,718.8 1126.9,723.7 1117.3,726.2 1126.5,733.0 1120.7,735.5 1142.1,744.6 1124.3,747.1 1143.0,754.7 1124.3,757.2 1130.4,765.9 1124.3,768.4 1140.1,776.5 1124.3,779.0 1141.5,786.7 1124.3,789.2 1140.8,797.3 1124.3,799.8 1137.5,807.3 1124.3,809.8 1129.4,815.5 1124.3,818.0 1133.6,826.1 1124.3,828.6 1142.2,834.2 1124.3,836.7 1134.2,845.6 1124.3,848.1 1144.0,854.8 1124.3,857.3 1143.6,865.1 1124.3,867.6 1143.3,874.7 1124.3,877.2 1134.2,884.2 1124.3,886.7 1141.1,892.2 1124.3,894.7 1143.2,899.6 1124.3,902.1 1145.0,908.5 1124.3,911.0 1059.7,911.0 1040.8,908.5 1059.7,902.1 1039.9,899.6 1059.7,894.7 1044.5,892.2 1059.7,886.7 1054.9,884.2 1059.7,877.2 1053.8,874.7 1059.7,867.6 1039.1,865.1 1059.7,857.3 1052.0,854.8 1059.7,848.1 1044.9,845.6 1059.7,836.7 1045.3,834.2 1059.7,828.6 1045.9,826.1 1059.7,818.0 1054.4,815.5 1059.7,809.8 1045.3,807.3 1059.7,799.8 1049.7,797.3 1059.7,789.2 1045.6,786.7 1059.7,779.0 1041.9,776.5 1059.7,768.4 1054.7,765.9 1059.7,757.2 1051.1,754.7 1059.7,747.1 1043.3,744.6 1063.3,735.5 1055.3,733.0 1066.7,726.2 1061.5,723.7 1069.5,718.8 1058.3,716.3 1073.2,708.8 1062.9,706.3 1076.6,699.4 1070.2,696.9 1079.4,691.8 1076.3,689.3 1082.3,683.8 1080.1,681.3 1085.6,674.8 1083.1,672.3 1089.0,665.5 1087.3,663.0"/><polygon points="1107.0,630.0 1112.1,640.1 1110.7,642.6 1116.7,649.3 1114.1,651.8 1120.2,657.3 1117.0,659.8 1125.6,667.6 1120.8,670.1 1129.1,676.6 1124.1,679.1 1139.1,688.3 1128.4,690.8 1142.2,699.2 1132.4,701.7 1140.0,708.5 1135.8,711.0 1157.2,718.8 1139.3,721.3 1155.8,728.2 1139.3,730.7 1144.3,737.6 1139.3,740.1 1159.5,746.9 1139.3,749.4 1147.4,757.8 1139.3,760.3 1149.2,767.1 1139.3,769.6 1151.0,775.4 1139.3,777.9 1148.5,785.6 1139.3,788.1 1156.8,794.2 1139.3,796.7 1145.5,802.1 1139.3,804.6 1152.2,811.1 1139.3,813.6 1156.0,819.4 1139.3,821.9 1147.5,827.1 1139.3,829.6 1145.9,838.6 1139.3,841.1 1157.4,846.4 1139.3,848.9 1154.6,857.7 1139.3,860.2 1159.0,865.3 1139.3,867.8 1147.2,876.9 1139.3,879.4 1154.0,884.7 1139.3,887.2 1146.9,893.0 1139.3,895.5 1156.6,902.1 1139.3,904.6 1074.7,904.6 1066.0,902.1 1074.7,895.5 1067.8,893.0 1074.7,887.2 1059.2,884.7 1074.7,879.4 1067.8,876.9 1074.7,867.8 1062.7,865.3 1074.7,860.2 1054.9,857.7 1074.7,848.9 1063.1,846.4 1074.7,841.1 1067.2,838.6 1074.7,829.6 1068.3,827.1 1074.7,821.9 1063.8,819.4 1074.7,813.6 1065.8,811.1 1074.7,804.6 1062.3,802.1 1074.7,796.7 1061.0,794.2 1074.7,788.1 1062.3,785.6 1074.7,777.9 1066.5,775.4 1074.7,769.6 1056.8,767.1 1074.7,760.3 1058.0,757.8 1074.7,749.4 1064.0,746.9 1074.7,740.1 1059.9,737.6 1074.7,730.7 1061.0,728.2 1074.7,721.3 1062.7,718.8 1078.2,711.0 1071.7,708.5 1081.6,701.7 1068.7,699.2 1085.6,690.8 1080.8,688.3 1089.9,679.1 1085.2,676.6 1093.2,670.1 1088.8,667.6 1097.0,659.8 1093.4,657.3 1099.9,651.8 1096.9,649.3 1103.3,642.6 1102.3,640.1"/><polygon points="1130.0,640.0 1136.4,650.7 1133.9,653.2 1140.3,662.1 1138.1,664.6 1146.1,671.3 1141.5,673.8 1154.9,682.8 1145.7,685.3 1160.0,692.5 1149.3,695.0 1155.4,700.5 1152.2,703.0 1168.4,709.6 1155.6,712.1 1176.3,719.2 1159.1,721.7 1180.3,726.9 1161.9,729.4 1173.4,735.1 1162.3,737.6 1170.2,744.4 1162.3,746.9 1172.7,752.8 1162.3,755.3 1172.8,764.5 1162.3,767.0 1175.6,776.1 1162.3,778.6 1167.9,785.8 1162.3,788.3 1172.9,796.0 1162.3,798.5 1172.8,805.8 1162.3,808.3 1174.6,815.9 1162.3,818.4 1176.4,823.3 1162.3,825.8 1170.9,830.8 1162.3,833.3 1173.4,841.2 1162.3,843.7 1180.1,850.6 1162.3,853.1 1173.3,859.4 1162.3,861.9 1180.3,867.3 1162.3,869.8 1169.6,875.0 1162.3,877.5 1167.7,882.5 1162.3,885.0 1178.3,890.6 1162.3,893.1 1181.0,900.8 1162.3,903.3 1097.7,903.3 1084.3,900.8 1097.7,893.1 1085.8,890.6 1097.7,885.0 1082.1,882.5 1097.7,877.5 1078.1,875.0 1097.7,869.8 1087.1,867.3 1097.7,861.9 1077.6,859.4 1097.7,853.1 1080.5,850.6 1097.7,843.7 1082.7,841.2 1097.7,833.3 1088.6,830.8 1097.7,825.8 1088.2,823.3 1097.7,818.4 1086.8,815.9 1097.7,808.3 1078.1,805.8 1097.7,798.5 1084.8,796.0 1097.7,788.3 1092.5,785.8 1097.7,778.6 1090.7,776.1 1097.7,767.0 1086.3,764.5 1097.7,755.3 1082.9,752.8 1097.7,746.9 1080.9,744.4 1097.7,737.6 1078.0,735.1 1098.1,729.4 1077.6,726.9 1100.9,721.7 1085.1,719.2 1104.4,712.1 1092.5,709.6 1107.8,703.0 1096.6,700.5 1110.7,695.0 1104.6,692.5 1114.3,685.3 1105.0,682.8 1118.5,673.8 1112.0,671.3 1121.9,664.6 1120.6,662.1 1126.1,653.2 1123.8,650.7"/><polygon points="1200.0,600.0 1203.8,608.9 1203.3,611.4 1211.0,620.3 1207.5,622.8 1212.2,628.0 1210.3,630.5 1219.5,639.3 1214.4,641.8 1227.2,647.8 1217.6,650.3 1232.3,656.0 1220.6,658.5 1236.7,666.7 1224.5,669.2 1244.4,676.9 1228.3,679.4 1249.5,686.8 1231.9,689.3 1250.9,696.2 1232.3,698.7 1239.7,707.5 1232.3,710.0 1252.1,719.0 1232.3,721.5 1243.6,726.4 1232.3,728.9 1240.7,734.1 1232.3,736.6 1241.4,744.0 1232.3,746.5 1250.3,754.4 1232.3,756.9 1239.5,762.4 1232.3,764.9 1250.9,771.7 1232.3,774.2 1250.5,781.7 1232.3,784.2 1241.5,791.3 1232.3,793.8 1251.2,801.5 1232.3,804.0 1246.8,808.7 1232.3,811.2 1249.1,816.8 1232.3,819.3 1247.0,824.7 1232.3,827.2 1239.5,833.6 1232.3,836.1 1251.8,841.8 1232.3,844.3 1242.1,851.3 1232.3,853.8 1241.9,861.0 1232.3,863.5 1249.3,872.7 1232.3,875.2 1244.6,884.2 1232.3,886.7 1239.8,892.8 1232.3,895.3 1249.1,904.1 1232.3,906.6 1167.7,906.6 1159.8,904.1 1167.7,895.3 1161.9,892.8 1167.7,886.7 1162.3,884.2 1167.7,875.2 1159.8,872.7 1167.7,863.5 1148.7,861.0 1167.7,853.8 1156.5,851.3 1167.7,844.3 1151.6,841.8 1167.7,836.1 1157.7,833.6 1167.7,827.2 1163.0,824.7 1167.7,819.3 1159.1,816.8 1167.7,811.2 1159.8,808.7 1167.7,804.0 1159.4,801.5 1167.7,793.8 1161.0,791.3 1167.7,784.2 1152.3,781.7 1167.7,774.2 1149.9,771.7 1167.7,764.9 1161.6,762.4 1167.7,756.9 1147.2,754.4 1167.7,746.5 1152.0,744.0 1167.7,736.6 1161.8,734.1 1167.7,728.9 1154.8,726.4 1167.7,721.5 1149.6,719.0 1167.7,710.0 1147.0,707.5 1167.7,698.7 1155.8,696.2 1168.1,689.3 1149.3,686.8 1171.7,679.4 1163.7,676.9 1175.5,669.2 1161.9,666.7 1179.4,658.5 1172.5,656.0 1182.4,650.3 1177.2,647.8 1185.6,641.8 1177.7,639.3 1189.7,630.5 1184.3,628.0 1192.5,622.8 1187.8,620.3 1196.7,611.4 1196.1,608.9"/><polygon points="1229.0,622.0 1234.4,632.8 1233.0,635.3 1239.0,641.1 1236.0,643.6 1240.9,649.4 1239.1,651.9 1248.5,659.0 1242.6,661.5 1251.3,669.6 1246.5,672.1 1263.7,681.0 1250.7,683.5 1258.6,689.0 1253.6,691.5 1268.8,697.2 1256.6,699.7 1270.8,706.5 1260.1,709.0 1266.3,713.8 1261.3,716.3 1266.1,721.3 1261.3,723.8 1270.4,732.0 1261.3,734.5 1266.1,741.6 1261.3,744.1 1277.2,751.3 1261.3,753.8 1266.3,760.9 1261.3,763.4 1278.5,771.6 1261.3,774.1 1268.6,779.2 1261.3,781.7 1266.6,787.9 1261.3,790.4 1279.4,795.4 1261.3,797.9 1275.3,804.0 1261.3,806.5 1281.8,815.6 1261.3,818.1 1277.1,823.2 1261.3,825.7 1268.6,830.7 1261.3,833.2 1281.3,838.7 1261.3,841.2 1277.9,849.2 1261.3,851.7 1267.6,859.4 1261.3,861.9 1276.9,870.1 1261.3,872.6 1271.1,879.7 1261.3,882.2 1277.0,887.3 1261.3,889.8 1277.5,895.5 1261.3,898.0 1270.9,904.8 1261.3,907.3 1196.7,907.3 1191.7,904.8 1196.7,898.0 1185.0,895.5 1196.7,889.8 1189.7,887.3 1196.7,882.2 1181.4,879.7 1196.7,872.6 1188.4,870.1 1196.7,861.9 1191.6,859.4 1196.7,851.7 1186.1,849.2 1196.7,841.2 1178.5,838.7 1196.7,833.2 1176.9,830.7 1196.7,825.7 1190.9,823.2 1196.7,818.1 1184.0,815.6 1196.7,806.5 1189.7,804.0 1196.7,797.9 1178.5,795.4 1196.7,790.4 1184.5,787.9 1196.7,781.7 1187.9,779.2 1196.7,774.1 1190.6,771.6 1196.7,763.4 1191.0,760.9 1196.7,753.8 1186.4,751.3 1196.7,744.1 1182.0,741.6 1196.7,734.5 1176.1,732.0 1196.7,723.8 1178.8,721.3 1196.7,716.3 1180.7,713.8 1197.9,709.0 1180.9,706.5 1201.4,699.7 1193.2,697.2 1204.4,691.5 1200.2,689.0 1207.3,683.5 1203.6,681.0 1211.5,672.1 1202.9,669.6 1215.4,661.5 1208.0,659.0 1218.9,651.9 1213.7,649.4 1222.0,643.6 1219.5,641.1 1225.0,635.3 1222.6,632.8"/><polygon points="1254.0,630.0 1259.4,640.1 1257.7,642.6 1264.0,649.6 1261.2,652.1 1269.4,660.6 1265.2,663.1 1271.5,669.5 1268.5,672.0 1280.4,676.8 1271.2,679.3 1283.8,687.6 1275.2,690.1 1289.6,696.2 1278.3,698.7 1297.8,705.4 1281.7,707.9 1303.4,714.8 1285.2,717.3 1295.9,722.8 1286.3,725.3 1294.1,732.2 1286.3,734.7 1301.6,742.6 1286.3,745.1 1296.0,750.1 1286.3,752.6 1293.8,758.2 1286.3,760.7 1304.7,766.7 1286.3,769.2 1298.5,776.9 1286.3,779.4 1296.3,786.5 1286.3,789.0 1295.0,795.6 1286.3,798.1 1302.1,803.5 1286.3,806.0 1306.0,815.2 1286.3,817.7 1303.5,824.8 1286.3,827.3 1291.1,833.9 1286.3,836.4 1294.0,843.4 1286.3,845.9 1294.4,850.9 1286.3,853.4 1294.3,858.5 1286.3,861.0 1306.9,867.7 1286.3,870.2 1295.8,878.8 1286.3,881.3 1299.6,887.1 1286.3,889.6 1294.5,896.3 1286.3,898.8 1295.9,906.6 1286.3,909.1 1221.7,909.1 1214.0,906.6 1221.7,898.8 1203.6,896.3 1221.7,889.6 1203.3,887.1 1221.7,881.3 1205.7,878.8 1221.7,870.2 1215.0,867.7 1221.7,861.0 1211.2,858.5 1221.7,853.4 1206.9,850.9 1221.7,845.9 1214.4,843.4 1221.7,836.4 1202.5,833.9 1221.7,827.3 1213.2,824.8 1221.7,817.7 1216.7,815.2 1221.7,806.0 1202.8,803.5 1221.7,798.1 1209.7,795.6 1221.7,789.0 1215.6,786.5 1221.7,779.4 1205.8,776.9 1221.7,769.2 1207.5,766.7 1221.7,760.7 1201.1,758.2 1221.7,752.6 1214.3,750.1 1221.7,745.1 1207.5,742.6 1221.7,734.7 1209.5,732.2 1221.7,725.3 1210.5,722.8 1222.8,717.3 1209.9,714.8 1226.3,707.9 1219.7,705.4 1229.7,698.7 1226.0,696.2 1232.8,690.1 1225.1,687.6 1236.8,679.3 1228.9,676.8 1239.5,672.0 1230.6,669.5 1242.8,663.1 1237.8,660.6 1246.8,652.1 1244.6,649.6 1250.3,642.6 1248.1,640.1"/><polygon points="1270.0,635.0 1274.6,643.8 1273.2,646.3 1278.3,654.7 1277.2,657.2 1282.9,663.8 1280.6,666.3 1286.9,674.6 1284.5,677.1 1291.8,684.9 1288.3,687.4 1302.3,694.3 1291.8,696.8 1304.7,701.7 1294.5,704.2 1310.0,709.0 1297.2,711.5 1308.0,717.5 1300.3,720.0 1311.9,728.0 1302.3,730.5 1322.8,736.5 1302.3,739.0 1320.1,746.8 1302.3,749.3 1318.8,756.0 1302.3,758.5 1311.5,764.3 1302.3,766.8 1318.1,774.6 1302.3,777.1 1316.7,785.4 1302.3,787.9 1313.3,795.9 1302.3,798.4 1318.1,803.9 1302.3,806.4 1310.3,815.3 1302.3,817.8 1318.5,824.6 1302.3,827.1 1322.9,832.1 1302.3,834.6 1318.7,842.9 1302.3,845.4 1307.2,850.6 1302.3,853.1 1309.5,858.4 1302.3,860.9 1310.7,867.8 1302.3,870.3 1307.8,876.8 1302.3,879.3 1315.2,887.3 1302.3,889.8 1316.4,895.2 1302.3,897.7 1310.2,902.7 1302.3,905.2 1237.7,905.2 1230.5,902.7 1237.7,897.7 1223.4,895.2 1237.7,889.8 1223.9,887.3 1237.7,879.3 1219.2,876.8 1237.7,870.3 1232.6,867.8 1237.7,860.9 1229.7,858.4 1237.7,853.1 1226.5,850.6 1237.7,845.4 1220.3,842.9 1237.7,834.6 1232.3,832.1 1237.7,827.1 1224.4,824.6 1237.7,817.8 1222.1,815.3 1237.7,806.4 1223.7,803.9 1237.7,798.4 1223.5,795.9 1237.7,787.9 1226.7,785.4 1237.7,777.1 1221.2,774.6 1237.7,766.8 1224.3,764.3 1237.7,758.5 1225.6,756.0 1237.7,749.3 1225.3,746.8 1237.7,739.0 1225.4,736.5 1237.7,730.5 1226.2,728.0 1239.7,720.0 1221.9,717.5 1242.8,711.5 1237.8,709.0 1245.5,704.2 1238.9,701.7 1248.2,696.8 1236.3,694.3 1251.7,687.4 1244.4,684.9 1255.5,677.1 1252.8,674.6 1259.4,666.3 1255.0,663.8 1262.8,657.2 1260.1,654.7 1266.8,646.3 1265.7,643.8"/><polygon points="1281.0,630.0 1285.7,639.0 1284.3,641.5 1290.7,648.1 1287.7,650.6 1294.0,659.3 1291.8,661.8 1298.6,670.4 1295.8,672.9 1310.8,681.7 1300.0,684.2 1308.0,693.4 1304.3,695.9 1321.9,701.3 1307.2,703.8 1325.1,711.7 1311.0,714.2 1324.7,721.6 1313.3,724.1 1333.6,732.1 1313.3,734.6 1328.1,740.3 1313.3,742.8 1321.8,749.2 1313.3,751.7 1318.4,758.2 1313.3,760.7 1329.4,769.1 1313.3,771.6 1320.0,777.9 1313.3,780.4 1326.8,786.8 1313.3,789.3 1320.2,797.8 1313.3,800.3 1329.1,805.9 1313.3,808.4 1324.3,817.0 1313.3,819.5 1331.1,824.6 1313.3,827.1 1331.5,834.6 1313.3,837.1 1328.1,842.1 1313.3,844.6 1332.2,852.3 1313.3,854.8 1320.4,863.7 1313.3,866.2 1332.0,872.3 1313.3,874.8 1328.9,881.1 1313.3,883.6 1327.7,892.1 1313.3,894.6 1323.0,899.7 1313.3,902.2 1327.1,908.8 1313.3,911.3 1248.7,911.3 1238.1,908.8 1248.7,902.2 1233.1,899.7 1248.7,894.6 1238.9,892.1 1248.7,883.6 1242.6,881.1 1248.7,874.8 1234.7,872.3 1248.7,866.2 1237.5,863.7 1248.7,854.8 1228.1,852.3 1248.7,844.6 1234.2,842.1 1248.7,837.1 1237.7,834.6 1248.7,827.1 1233.0,824.6 1248.7,819.5 1234.7,817.0 1248.7,808.4 1234.2,805.9 1248.7,800.3 1236.3,797.8 1248.7,789.3 1240.0,786.8 1248.7,780.4 1233.3,777.9 1248.7,771.6 1233.5,769.1 1248.7,760.7 1236.8,758.2 1248.7,751.7 1241.7,749.2 1248.7,742.8 1237.3,740.3 1248.7,734.6 1231.3,732.1 1248.7,724.1 1231.3,721.6 1251.0,714.2 1233.2,711.7 1254.8,703.8 1247.9,701.3 1257.7,695.9 1247.9,693.4 1262.0,684.2 1257.5,681.7 1266.2,672.9 1260.7,670.4 1270.2,661.8 1263.5,659.3 1274.3,650.6 1272.1,648.1 1277.7,641.5 1276.2,639.0"/><polygon points="1298.0,622.0 1302.8,630.5 1301.1,633.0 1307.8,639.5 1304.4,642.0 1313.6,650.7 1308.6,653.2 1320.4,660.4 1312.1,662.9 1319.1,671.4 1316.2,673.9 1325.8,682.7 1320.3,685.2 1340.9,693.3 1324.2,695.8 1339.2,704.6 1328.4,707.1 1350.5,713.4 1330.3,715.9 1349.5,724.6 1330.3,727.1 1339.6,735.6 1330.3,738.1 1338.0,742.9 1330.3,745.4 1340.4,752.3 1330.3,754.8 1337.3,761.0 1330.3,763.5 1335.6,772.1 1330.3,774.6 1339.8,780.1 1330.3,782.6 1341.1,790.9 1330.3,793.4 1338.4,801.7 1330.3,804.2 1338.2,812.5 1330.3,815.0 1348.4,822.4 1330.3,824.9 1347.0,832.5 1330.3,835.0 1343.8,840.2 1330.3,842.7 1337.0,850.7 1330.3,853.2 1336.5,861.0 1330.3,863.5 1341.5,870.5 1330.3,873.0 1338.3,879.1 1330.3,881.6 1335.4,890.1 1330.3,892.6 1336.4,898.8 1330.3,901.3 1335.6,908.0 1330.3,910.5 1265.7,910.5 1248.3,908.0 1265.7,901.3 1250.7,898.8 1265.7,892.6 1256.7,890.1 1265.7,881.6 1251.7,879.1 1265.7,873.0 1248.9,870.5 1265.7,863.5 1249.7,861.0 1265.7,853.2 1255.3,850.7 1265.7,842.7 1259.9,840.2 1265.7,835.0 1255.3,832.5 1265.7,824.9 1254.2,822.4 1265.7,815.0 1255.8,812.5 1265.7,804.2 1245.7,801.7 1265.7,793.4 1247.2,790.9 1265.7,782.6 1260.1,780.1 1265.7,774.6 1249.1,772.1 1265.7,763.5 1256.1,761.0 1265.7,754.8 1253.4,752.3 1265.7,745.4 1254.6,742.9 1265.7,738.1 1256.2,735.6 1265.7,727.1 1246.6,724.6 1265.7,715.9 1246.6,713.4 1267.6,707.1 1259.4,704.6 1271.8,695.8 1260.5,693.3 1275.7,685.2 1261.9,682.7 1279.8,673.9 1275.7,671.4 1283.9,662.9 1279.6,660.4 1287.4,653.2 1282.7,650.7 1291.6,642.0 1290.6,639.5 1294.9,633.0 1293.2,630.5"/><polygon points="1315.0,634.0 1318.7,642.7 1318.2,645.2 1324.4,650.4 1321.0,652.9 1327.8,658.3 1323.9,660.8 1332.0,669.6 1328.1,672.1 1338.6,678.9 1331.5,681.4 1339.1,687.8 1334.8,690.3 1351.0,699.2 1338.9,701.7 1352.9,707.7 1342.1,710.2 1363.6,717.9 1345.9,720.4 1355.8,728.5 1347.3,731.0 1358.6,736.7 1347.3,739.2 1367.1,747.6 1347.3,750.1 1361.1,755.1 1347.3,757.6 1357.8,763.1 1347.3,765.6 1359.6,772.4 1347.3,774.9 1360.8,780.6 1347.3,783.1 1367.4,791.0 1347.3,793.5 1361.2,801.1 1347.3,803.6 1353.4,812.4 1347.3,814.9 1359.0,822.7 1347.3,825.2 1366.6,830.0 1347.3,832.5 1352.1,837.4 1347.3,839.9 1359.9,847.1 1347.3,849.6 1361.0,856.3 1347.3,858.8 1354.2,866.4 1347.3,868.9 1354.8,875.2 1347.3,877.7 1364.9,883.3 1347.3,885.8 1364.3,895.0 1347.3,897.5 1366.6,906.6 1347.3,909.1 1282.7,909.1 1263.0,906.6 1282.7,897.5 1262.9,895.0 1282.7,885.8 1269.9,883.3 1282.7,877.7 1267.1,875.2 1282.7,868.9 1275.7,866.4 1282.7,858.8 1271.1,856.3 1282.7,849.6 1275.0,847.1 1282.7,839.9 1268.5,837.4 1282.7,832.5 1268.1,830.0 1282.7,825.2 1268.7,822.7 1282.7,814.9 1275.6,812.4 1282.7,803.6 1276.3,801.1 1282.7,793.5 1277.7,791.0 1282.7,783.1 1275.1,780.6 1282.7,774.9 1265.4,772.4 1282.7,765.6 1276.5,763.1 1282.7,757.6 1269.6,755.1 1282.7,750.1 1271.7,747.6 1282.7,739.2 1269.2,736.7 1282.7,731.0 1274.1,728.5 1284.1,720.4 1276.3,717.9 1287.9,710.2 1273.5,707.7 1291.1,701.7 1277.1,699.2 1295.2,690.3 1291.8,687.8 1298.5,681.4 1290.3,678.9 1301.9,672.1 1297.1,669.6 1306.1,660.8 1300.8,658.3 1309.0,652.9 1307.2,650.4 1311.8,645.2 1310.7,642.7"/><polygon points="1330.0,640.0 1334.1,648.0 1332.9,650.5 1339.2,659.4 1337.1,661.9 1346.6,668.0 1340.3,670.5 1352.0,678.7 1344.2,681.2 1351.6,686.6 1347.1,689.1 1360.1,696.9 1350.9,699.4 1363.7,706.9 1354.6,709.4 1365.8,717.9 1358.6,720.4 1370.5,729.4 1362.3,731.9 1381.3,740.0 1362.3,742.5 1377.9,748.9 1362.3,751.4 1369.1,757.7 1362.3,760.2 1376.0,768.9 1362.3,771.4 1372.4,780.0 1362.3,782.5 1374.2,791.6 1362.3,794.1 1369.6,799.0 1362.3,801.5 1376.8,808.6 1362.3,811.1 1377.9,816.9 1362.3,819.4 1379.8,828.4 1362.3,830.9 1370.4,838.2 1362.3,840.7 1374.7,846.0 1362.3,848.5 1379.3,857.2 1362.3,859.7 1376.3,867.2 1362.3,869.7 1379.1,874.9 1362.3,877.4 1369.7,883.5 1362.3,886.0 1375.1,892.8 1362.3,895.3 1374.3,903.1 1362.3,905.6 1297.7,905.6 1285.9,903.1 1297.7,895.3 1284.3,892.8 1297.7,886.0 1284.8,883.5 1297.7,877.4 1291.2,874.9 1297.7,869.7 1289.1,867.2 1297.7,859.7 1283.4,857.2 1297.7,848.5 1278.5,846.0 1297.7,840.7 1280.5,838.2 1297.7,830.9 1287.6,828.4 1297.7,819.4 1277.2,816.9 1297.7,811.1 1282.6,808.6 1297.7,801.5 1288.5,799.0 1297.7,794.1 1292.8,791.6 1297.7,782.5 1282.3,780.0 1297.7,771.4 1292.7,768.9 1297.7,760.2 1289.2,757.7 1297.7,751.4 1288.6,748.9 1297.7,742.5 1285.5,740.0 1297.7,731.9 1292.8,729.4 1301.4,720.4 1295.4,717.9 1305.4,709.4 1299.6,706.9 1309.1,699.4 1297.3,696.9 1312.9,689.1 1307.6,686.6 1315.8,681.2 1311.6,678.7 1319.7,670.5 1317.8,668.0 1322.9,661.9 1320.5,659.4 1327.1,650.5 1326.4,648.0"/><polygon points="1344.0,630.0 1348.3,637.7 1346.8,640.2 1352.2,647.5 1350.4,650.0 1356.1,658.0 1354.3,660.5 1366.0,666.5 1357.4,669.0 1372.2,677.1 1361.3,679.6 1371.6,687.9 1365.3,690.4 1381.3,699.2 1369.4,701.7 1387.2,706.8 1372.2,709.3 1389.2,715.7 1375.5,718.2 1386.9,726.9 1376.3,729.4 1388.5,736.5 1376.3,739.0 1391.8,744.0 1376.3,746.5 1384.1,752.4 1376.3,754.9 1394.8,762.3 1376.3,764.8 1386.6,770.1 1376.3,772.6 1389.2,780.0 1376.3,782.5 1390.7,791.3 1376.3,793.8 1390.3,802.1 1376.3,804.6 1381.1,811.2 1376.3,813.7 1384.6,819.7 1376.3,822.2 1381.6,828.6 1376.3,831.1 1383.3,839.8 1376.3,842.3 1393.8,851.1 1376.3,853.6 1397.0,858.6 1376.3,861.1 1390.3,868.4 1376.3,870.9 1383.6,880.0 1376.3,882.5 1384.3,887.4 1376.3,889.9 1382.7,898.1 1376.3,900.6 1393.5,909.3 1376.3,911.8 1311.7,911.8 1305.3,909.3 1311.7,900.6 1303.6,898.1 1311.7,889.9 1291.3,887.4 1311.7,882.5 1300.7,880.0 1311.7,870.9 1306.4,868.4 1311.7,861.1 1301.7,858.6 1311.7,853.6 1303.7,851.1 1311.7,842.3 1299.6,839.8 1311.7,831.1 1300.3,828.6 1311.7,822.2 1293.1,819.7 1311.7,813.7 1302.0,811.2 1311.7,804.6 1297.8,802.1 1311.7,793.8 1299.3,791.3 1311.7,782.5 1300.7,780.0 1311.7,772.6 1291.9,770.1 1311.7,764.8 1296.4,762.3 1311.7,754.9 1303.5,752.4 1311.7,746.5 1298.2,744.0 1311.7,739.0 1301.0,736.5 1311.7,729.4 1304.2,726.9 1312.5,718.2 1305.0,715.7 1315.8,709.3 1309.2,706.8 1318.6,701.7 1304.3,699.2 1322.7,690.4 1315.5,687.9 1326.7,679.6 1320.4,677.1 1330.6,669.0 1323.5,666.5 1333.7,660.5 1330.0,658.0 1337.6,650.0 1336.2,647.5 1341.2,640.2 1340.1,637.7"/><polygon points="1365.0,598.0 1368.6,605.3 1367.7,607.8 1374.6,614.3 1371.0,616.8 1376.3,622.3 1373.9,624.8 1382.8,632.9 1377.8,635.4 1389.5,642.4 1381.3,644.9 1395.3,650.8 1384.4,653.3 1399.6,661.8 1388.5,664.3 1397.7,669.3 1391.2,671.8 1406.1,678.6 1394.6,681.1 1415.4,685.9 1397.3,688.4 1409.2,696.5 1397.3,699.0 1408.8,706.1 1397.3,708.6 1404.6,714.3 1397.3,716.8 1403.2,721.8 1397.3,724.3 1412.5,733.0 1397.3,735.5 1417.2,744.0 1397.3,746.5 1405.6,753.6 1397.3,756.1 1417.0,761.3 1397.3,763.8 1414.8,772.8 1397.3,775.3 1408.0,782.8 1397.3,785.3 1406.7,793.7 1397.3,796.2 1416.4,804.9 1397.3,807.4 1413.0,813.1 1397.3,815.6 1414.8,821.3 1397.3,823.8 1406.3,828.8 1397.3,831.3 1411.0,837.5 1397.3,840.0 1412.0,845.8 1397.3,848.3 1402.7,856.8 1397.3,859.3 1405.8,866.0 1397.3,868.5 1415.0,873.5 1397.3,876.0 1409.8,881.9 1397.3,884.4 1416.8,890.4 1397.3,892.9 1414.0,900.6 1397.3,903.1 1332.7,903.1 1320.9,900.6 1332.7,892.9 1321.2,890.4 1332.7,884.4 1313.7,881.9 1332.7,876.0 1326.9,873.5 1332.7,868.5 1319.6,866.0 1332.7,859.3 1326.3,856.8 1332.7,848.3 1318.7,845.8 1332.7,840.0 1313.7,837.5 1332.7,831.3 1326.7,828.8 1332.7,823.8 1319.8,821.3 1332.7,815.6 1315.5,813.1 1332.7,807.4 1313.5,804.9 1332.7,796.2 1313.3,793.7 1332.7,785.3 1325.2,782.8 1332.7,775.3 1314.1,772.8 1332.7,763.8 1316.3,761.3 1332.7,756.1 1317.5,753.6 1332.7,746.5 1314.3,744.0 1332.7,735.5 1325.5,733.0 1332.7,724.3 1322.4,721.8 1332.7,716.8 1320.4,714.3 1332.7,708.6 1312.4,706.1 1332.7,699.0 1315.8,696.5 1332.7,688.4 1314.5,685.9 1335.4,681.1 1322.3,678.6 1338.8,671.8 1325.7,669.3 1341.5,664.3 1337.9,661.8 1345.6,653.3 1341.9,650.8 1348.7,644.9 1339.1,642.4 1352.2,635.4 1347.7,632.9 1356.1,624.8 1354.8,622.3 1359.0,616.8 1356.9,614.3 1362.3,607.8 1361.5,605.3"/><polygon points="1387.0,598.0 1393.5,608.9 1391.0,611.4 1398.8,619.7 1395.0,622.2 1400.9,627.6 1397.9,630.1 1403.7,637.2 1401.4,639.7 1415.3,648.3 1405.5,650.8 1416.3,656.3 1408.4,658.8 1422.0,664.8 1411.5,667.3 1431.9,674.5 1415.1,677.0 1427.0,682.1 1417.9,684.6 1438.9,693.1 1419.3,695.6 1432.1,700.7 1419.3,703.2 1429.1,709.3 1419.3,711.8 1424.5,720.7 1419.3,723.2 1429.8,728.8 1419.3,731.3 1432.2,736.4 1419.3,738.9 1434.9,746.3 1419.3,748.8 1439.4,755.6 1419.3,758.1 1432.8,764.5 1419.3,767.0 1439.8,774.0 1419.3,776.5 1434.8,784.4 1419.3,786.9 1438.6,791.8 1419.3,794.3 1438.8,803.0 1419.3,805.5 1435.0,813.6 1419.3,816.1 1424.5,822.2 1419.3,824.7 1428.3,832.4 1419.3,834.9 1428.2,839.9 1419.3,842.4 1424.0,847.3 1419.3,849.8 1432.1,856.1 1419.3,858.6 1436.3,864.6 1419.3,867.1 1431.3,876.3 1419.3,878.8 1435.2,883.7 1419.3,886.2 1436.0,892.8 1419.3,895.3 1438.7,901.3 1419.3,903.8 1354.7,903.8 1337.1,901.3 1354.7,895.3 1339.1,892.8 1354.7,886.2 1346.3,883.7 1354.7,878.8 1336.0,876.3 1354.7,867.1 1340.1,864.6 1354.7,858.6 1347.8,856.1 1354.7,849.8 1338.1,847.3 1354.7,842.4 1336.4,839.9 1354.7,834.9 1337.1,832.4 1354.7,824.7 1345.2,822.2 1354.7,816.1 1346.4,813.6 1354.7,805.5 1340.8,803.0 1354.7,794.3 1337.9,791.8 1354.7,786.9 1346.8,784.4 1354.7,776.5 1344.1,774.0 1354.7,767.0 1347.9,764.5 1354.7,758.1 1345.1,755.6 1354.7,748.8 1342.0,746.3 1354.7,738.9 1336.8,736.4 1354.7,731.3 1337.0,728.8 1354.7,723.2 1348.4,720.7 1354.7,711.8 1345.2,709.3 1354.7,703.2 1338.8,700.7 1354.7,695.6 1337.7,693.1 1356.1,684.6 1343.0,682.1 1358.9,677.0 1344.6,674.5 1362.5,667.3 1358.9,664.8 1365.6,658.8 1361.2,656.3 1368.5,650.8 1357.2,648.3 1372.6,639.7 1369.0,637.2 1376.1,630.1 1372.2,627.6 1379.0,622.2 1375.5,619.7 1383.0,611.4 1381.5,608.9"/><polygon points="1404.0,594.0 1407.6,602.4 1407.1,604.9 1411.8,610.4 1410.0,612.9 1419.7,621.5 1414.1,624.0 1422.8,632.2 1418.0,634.7 1427.5,641.4 1421.4,643.9 1431.9,652.8 1425.6,655.3 1444.3,662.1 1429.0,664.6 1441.5,673.1 1433.1,675.6 1443.9,684.5 1436.3,687.0 1446.9,695.9 1436.3,698.4 1453.8,704.1 1436.3,706.6 1447.3,712.8 1436.3,715.3 1454.0,724.4 1436.3,726.9 1453.6,733.1 1436.3,735.6 1451.3,743.4 1436.3,745.9 1455.4,753.4 1436.3,755.9 1450.1,763.8 1436.3,766.3 1450.2,774.3 1436.3,776.8 1453.8,782.4 1436.3,784.9 1450.9,793.0 1436.3,795.5 1445.0,803.9 1436.3,806.4 1455.1,812.5 1436.3,815.0 1454.5,821.9 1436.3,824.4 1451.4,830.5 1436.3,833.0 1454.5,842.1 1436.3,844.6 1446.0,851.2 1436.3,853.7 1442.5,859.7 1436.3,862.2 1446.7,871.1 1436.3,873.6 1443.2,882.3 1436.3,884.8 1451.8,892.3 1436.3,894.8 1455.7,900.1 1436.3,902.6 1371.7,902.6 1354.8,900.1 1371.7,894.8 1351.0,892.3 1371.7,884.8 1363.9,882.3 1371.7,873.6 1351.0,871.1 1371.7,862.2 1367.0,859.7 1371.7,853.7 1365.0,851.2 1371.7,844.6 1360.3,842.1 1371.7,833.0 1365.8,830.5 1371.7,824.4 1366.2,821.9 1371.7,815.0 1365.0,812.5 1371.7,806.4 1353.3,803.9 1371.7,795.5 1353.9,793.0 1371.7,784.9 1353.1,782.4 1371.7,776.8 1363.4,774.3 1371.7,766.3 1364.0,763.8 1371.7,755.9 1358.4,753.4 1371.7,745.9 1352.2,743.4 1371.7,735.6 1355.6,733.1 1371.7,726.9 1355.2,724.4 1371.7,715.3 1362.3,712.8 1371.7,706.6 1365.6,704.1 1371.7,698.4 1362.0,695.9 1371.7,687.0 1354.2,684.5 1374.9,675.6 1360.7,673.1 1379.0,664.6 1369.7,662.1 1382.4,655.3 1376.6,652.8 1386.6,643.9 1377.4,641.4 1390.0,634.7 1387.8,632.2 1393.9,624.0 1387.6,621.5 1398.0,612.9 1394.4,610.4 1400.9,604.9 1399.8,602.4"/><polygon points="1420.0,605.0 1425.2,614.5 1423.5,617.0 1427.8,621.8 1426.2,624.3 1434.4,630.8 1429.5,633.3 1438.9,638.0 1432.1,640.5 1445.5,648.3 1435.9,650.8 1446.7,657.4 1439.3,659.9 1450.7,664.9 1442.0,667.4 1461.8,676.2 1446.2,678.7 1462.4,686.7 1450.0,689.2 1469.3,695.0 1452.3,697.5 1458.9,704.8 1452.3,707.3 1467.2,712.4 1452.3,714.9 1469.8,721.9 1452.3,724.4 1466.2,729.3 1452.3,731.8 1464.8,736.7 1452.3,739.2 1472.7,746.9 1452.3,749.4 1467.9,754.2 1452.3,756.7 1465.6,763.7 1452.3,766.2 1470.1,773.5 1452.3,776.0 1462.1,782.1 1452.3,784.6 1469.8,791.7 1452.3,794.2 1463.5,799.1 1452.3,801.6 1470.4,808.2 1452.3,810.7 1463.5,815.7 1452.3,818.2 1467.7,825.9 1452.3,828.4 1471.2,837.1 1452.3,839.6 1469.3,844.7 1452.3,847.2 1466.0,854.5 1452.3,857.0 1467.3,862.6 1452.3,865.1 1459.3,871.1 1452.3,873.6 1464.1,881.6 1452.3,884.1 1470.7,888.8 1452.3,891.3 1471.6,900.0 1452.3,902.5 1460.8,909.6 1452.3,912.1 1387.7,912.1 1381.6,909.6 1387.7,902.5 1381.6,900.0 1387.7,891.3 1376.5,888.8 1387.7,884.1 1380.7,881.6 1387.7,873.6 1374.6,871.1 1387.7,865.1 1373.7,862.6 1387.7,857.0 1380.0,854.5 1387.7,847.2 1368.4,844.7 1387.7,839.6 1378.8,837.1 1387.7,828.4 1380.9,825.9 1387.7,818.2 1368.8,815.7 1387.7,810.7 1376.9,808.2 1387.7,801.6 1379.0,799.1 1387.7,794.2 1370.2,791.7 1387.7,784.6 1382.6,782.1 1387.7,776.0 1369.5,773.5 1387.7,766.2 1382.0,763.7 1387.7,756.7 1381.0,754.2 1387.7,749.4 1369.4,746.9 1387.7,739.2 1369.5,736.7 1387.7,731.8 1378.7,729.3 1387.7,724.4 1367.6,721.9 1387.7,714.9 1383.0,712.4 1387.7,707.3 1375.7,704.8 1387.7,697.5 1378.8,695.0 1390.0,689.2 1378.6,686.7 1393.8,678.7 1386.0,676.2 1398.0,667.4 1391.5,664.9 1400.7,659.9 1393.0,657.4 1404.1,650.8 1394.7,648.3 1407.9,640.5 1404.6,638.0 1410.5,633.3 1404.5,630.8 1413.8,624.3 1409.9,621.8 1416.5,617.0 1414.6,614.5"/><polygon points="1433.0,598.0 1438.2,609.4 1437.2,611.9 1444.0,618.0 1440.3,620.5 1445.2,625.9 1443.3,628.4 1451.1,637.1 1447.4,639.6 1459.1,647.4 1451.2,649.9 1462.2,658.1 1455.1,660.6 1462.8,666.5 1458.2,669.0 1473.6,676.9 1462.0,679.4 1472.6,685.2 1465.0,687.7 1477.9,694.9 1465.3,697.4 1482.3,703.9 1465.3,706.4 1474.4,713.8 1465.3,716.3 1478.9,722.3 1465.3,724.8 1470.2,732.2 1465.3,734.7 1475.1,741.1 1465.3,743.6 1477.2,750.6 1465.3,753.1 1481.0,761.2 1465.3,763.7 1470.2,769.8 1465.3,772.3 1480.5,780.1 1465.3,782.6 1476.2,788.6 1465.3,791.1 1480.1,797.8 1465.3,800.3 1484.9,806.4 1465.3,808.9 1485.2,816.8 1465.3,819.3 1470.5,824.3 1465.3,826.8 1480.9,832.0 1465.3,834.5 1480.9,841.3 1465.3,843.8 1474.5,849.8 1465.3,852.3 1481.8,859.0 1465.3,861.5 1472.6,868.7 1465.3,871.2 1471.1,877.6 1465.3,880.1 1471.0,887.1 1465.3,889.6 1477.7,894.6 1465.3,897.1 1477.1,905.6 1465.3,908.1 1400.7,908.1 1389.6,905.6 1400.7,897.1 1390.2,894.6 1400.7,889.6 1394.5,887.1 1400.7,880.1 1386.8,877.6 1400.7,871.2 1390.7,868.7 1400.7,861.5 1390.6,859.0 1400.7,852.3 1389.3,849.8 1400.7,843.8 1389.1,841.3 1400.7,834.5 1386.5,832.0 1400.7,826.8 1389.8,824.3 1400.7,819.3 1390.6,816.8 1400.7,808.9 1385.4,806.4 1400.7,800.3 1384.2,797.8 1400.7,791.1 1387.7,788.6 1400.7,782.6 1391.5,780.1 1400.7,772.3 1385.9,769.8 1400.7,763.7 1389.8,761.2 1400.7,753.1 1393.0,750.6 1400.7,743.6 1380.4,741.1 1400.7,734.7 1380.0,732.2 1400.7,724.8 1393.8,722.3 1400.7,716.3 1394.9,713.8 1400.7,706.4 1386.0,703.9 1400.7,697.4 1388.8,694.9 1401.0,687.7 1389.7,685.2 1404.0,679.4 1389.1,676.9 1407.8,669.0 1401.6,666.5 1410.9,660.6 1402.1,658.1 1414.8,649.9 1405.0,647.4 1418.6,639.6 1416.4,637.1 1422.7,628.4 1417.4,625.9 1425.7,620.5 1423.6,618.0 1428.8,611.9 1427.5,609.4"/><polygon points="1463.0,563.0 1467.9,572.0 1466.3,574.5 1470.9,581.0 1469.6,583.5 1479.1,590.5 1473.1,593.0 1479.6,599.5 1476.4,602.0 1484.9,610.0 1480.3,612.5 1496.2,619.7 1483.8,622.2 1499.3,629.9 1487.6,632.4 1498.3,640.6 1491.5,643.1 1512.1,651.8 1495.3,654.3 1506.8,661.3 1495.3,663.8 1504.4,670.7 1495.3,673.2 1511.3,681.5 1495.3,684.0 1500.2,690.5 1495.3,693.0 1509.5,697.9 1495.3,700.4 1500.0,706.0 1495.3,708.5 1506.1,714.4 1495.3,716.9 1501.0,725.3 1495.3,727.8 1502.6,732.8 1495.3,735.3 1514.8,741.3 1495.3,743.8 1510.0,752.3 1495.3,754.8 1508.0,763.5 1495.3,766.0 1510.2,771.2 1495.3,773.7 1502.0,780.2 1495.3,782.7 1514.2,789.7 1495.3,792.2 1504.2,797.1 1495.3,799.6 1507.9,805.0 1495.3,807.5 1502.8,816.0 1495.3,818.5 1506.6,827.3 1495.3,829.8 1508.0,836.7 1495.3,839.2 1510.8,844.3 1495.3,846.8 1508.9,853.8 1495.3,856.3 1508.4,862.9 1495.3,865.4 1508.0,870.5 1495.3,873.0 1504.3,881.3 1495.3,883.8 1513.5,889.3 1495.3,891.8 1501.4,900.4 1495.3,902.9 1430.7,902.9 1423.5,900.4 1430.7,891.8 1419.6,889.3 1430.7,883.8 1420.0,881.3 1430.7,873.0 1413.7,870.5 1430.7,865.4 1422.3,862.9 1430.7,856.3 1410.0,853.8 1430.7,846.8 1419.2,844.3 1430.7,839.2 1411.7,836.7 1430.7,829.8 1411.2,827.3 1430.7,818.5 1421.4,816.0 1430.7,807.5 1415.2,805.0 1430.7,799.6 1424.0,797.1 1430.7,792.2 1413.2,789.7 1430.7,782.7 1415.3,780.2 1430.7,773.7 1417.2,771.2 1430.7,766.0 1419.5,763.5 1430.7,754.8 1419.9,752.3 1430.7,743.8 1414.2,741.3 1430.7,735.3 1423.9,732.8 1430.7,727.8 1425.8,725.3 1430.7,716.9 1420.9,714.4 1430.7,708.5 1414.9,706.0 1430.7,700.4 1417.3,697.9 1430.7,693.0 1422.4,690.5 1430.7,684.0 1423.5,681.5 1430.7,673.2 1413.0,670.7 1430.7,663.8 1422.1,661.3 1430.7,654.3 1421.0,651.8 1434.5,643.1 1426.6,640.6 1438.4,632.4 1426.4,629.9 1442.2,622.2 1430.0,619.7 1445.7,612.5 1439.6,610.0 1449.6,602.0 1447.5,599.5 1452.9,593.0 1448.0,590.5 1456.4,583.5 1452.5,581.0 1459.7,574.5 1458.7,572.0"/><polygon points="1485.0,585.0 1488.1,592.3 1487.7,594.8 1494.1,601.4 1491.0,603.9 1499.3,609.3 1493.9,611.8 1503.7,619.6 1497.7,622.1 1508.3,627.0 1500.4,629.5 1509.3,634.7 1503.3,637.2 1515.5,642.2 1506.0,644.7 1513.8,649.7 1508.8,652.2 1515.3,657.1 1511.5,659.6 1519.8,666.5 1515.0,669.0 1534.9,677.2 1517.3,679.7 1526.5,688.0 1517.3,690.5 1536.5,699.6 1517.3,702.1 1529.8,709.4 1517.3,711.9 1530.2,720.3 1517.3,722.8 1525.8,727.6 1517.3,730.1 1527.6,738.9 1517.3,741.4 1525.3,748.6 1517.3,751.1 1529.0,756.9 1517.3,759.4 1523.9,766.9 1517.3,769.4 1524.8,775.2 1517.3,777.7 1536.8,783.7 1517.3,786.2 1538.0,792.4 1517.3,794.9 1532.6,803.9 1517.3,806.4 1523.7,813.3 1517.3,815.8 1522.1,824.9 1517.3,827.4 1536.4,832.5 1517.3,835.0 1528.8,841.5 1517.3,844.0 1529.6,852.8 1517.3,855.3 1531.7,862.0 1517.3,864.5 1525.6,870.2 1517.3,872.7 1532.4,877.9 1517.3,880.4 1526.2,887.8 1517.3,890.3 1530.9,898.2 1517.3,900.7 1530.6,909.1 1517.3,911.6 1452.7,911.6 1432.8,909.1 1452.7,900.7 1440.7,898.2 1452.7,890.3 1440.8,887.8 1452.7,880.4 1436.4,877.9 1452.7,872.7 1446.3,870.2 1452.7,864.5 1438.1,862.0 1452.7,855.3 1445.6,852.8 1452.7,844.0 1436.1,841.5 1452.7,835.0 1440.1,832.5 1452.7,827.4 1446.1,824.9 1452.7,815.8 1442.4,813.3 1452.7,806.4 1434.7,803.9 1452.7,794.9 1442.7,792.4 1452.7,786.2 1439.3,783.7 1452.7,777.7 1443.8,775.2 1452.7,769.4 1444.1,766.9 1452.7,759.4 1447.1,756.9 1452.7,751.1 1437.0,748.6 1452.7,741.4 1440.4,738.9 1452.7,730.1 1437.4,727.6 1452.7,722.8 1442.8,720.3 1452.7,711.9 1440.5,709.4 1452.7,702.1 1440.8,699.6 1452.7,690.5 1442.8,688.0 1452.7,679.7 1443.2,677.2 1455.0,669.0 1438.9,666.5 1458.5,659.6 1443.3,657.1 1461.2,652.2 1448.7,649.7 1464.0,644.7 1454.9,642.2 1466.7,637.2 1455.1,634.7 1469.6,629.5 1465.8,627.0 1472.3,622.1 1469.3,619.6 1476.1,611.8 1472.6,609.3 1479.0,603.9 1477.1,601.4 1482.3,594.8 1481.3,592.3"/><polygon points="1502.0,560.0 1506.2,567.9 1504.9,570.4 1511.1,577.7 1508.5,580.2 1512.9,585.3 1511.3,587.8 1522.2,594.6 1514.7,597.1 1528.4,605.1 1518.6,607.6 1530.5,616.0 1522.6,618.5 1530.4,627.3 1526.7,629.8 1537.6,638.5 1530.8,641.0 1544.0,649.1 1534.3,651.6 1539.0,660.7 1534.3,663.2 1542.9,671.1 1534.3,673.6 1552.3,679.3 1534.3,681.8 1544.0,687.8 1534.3,690.3 1554.7,695.2 1534.3,697.7 1554.4,705.4 1534.3,707.9 1540.8,713.0 1534.3,715.5 1553.9,722.9 1534.3,725.4 1542.6,733.4 1534.3,735.9 1552.0,742.1 1534.3,744.6 1550.0,753.6 1534.3,756.1 1541.2,761.0 1534.3,763.5 1542.3,770.1 1534.3,772.6 1550.5,779.7 1534.3,782.2 1545.5,788.8 1534.3,791.3 1554.7,797.5 1534.3,800.0 1550.6,805.0 1534.3,807.5 1549.5,813.3 1534.3,815.8 1552.5,821.9 1534.3,824.4 1553.7,831.0 1534.3,833.5 1541.9,840.0 1534.3,842.5 1549.8,850.8 1534.3,853.3 1548.7,862.0 1534.3,864.5 1547.1,870.0 1534.3,872.5 1554.3,881.6 1534.3,884.1 1540.8,889.7 1534.3,892.2 1541.5,898.6 1534.3,901.1 1540.3,908.9 1534.3,911.4 1469.7,911.4 1461.0,908.9 1469.7,901.1 1452.8,898.6 1469.7,892.2 1452.8,889.7 1469.7,884.1 1450.1,881.6 1469.7,872.5 1461.8,870.0 1469.7,864.5 1452.1,862.0 1469.7,853.3 1462.1,850.8 1469.7,842.5 1451.4,840.0 1469.7,833.5 1464.6,831.0 1469.7,824.4 1450.9,821.9 1469.7,815.8 1464.1,813.3 1469.7,807.5 1453.1,805.0 1469.7,800.0 1450.5,797.5 1469.7,791.3 1454.3,788.8 1469.7,782.2 1451.1,779.7 1469.7,772.6 1462.0,770.1 1469.7,763.5 1450.6,761.0 1469.7,756.1 1456.3,753.6 1469.7,744.6 1449.3,742.1 1469.7,735.9 1458.3,733.4 1469.7,725.4 1455.0,722.9 1469.7,715.5 1455.6,713.0 1469.7,707.9 1457.6,705.4 1469.7,697.7 1459.0,695.2 1469.7,690.3 1457.7,687.8 1469.7,681.8 1461.4,679.3 1469.7,673.6 1457.4,671.1 1469.7,663.2 1452.2,660.7 1469.7,651.6 1449.1,649.1 1473.2,641.0 1455.4,638.5 1477.3,629.8 1472.9,627.3 1481.4,618.5 1471.4,616.0 1485.4,607.6 1481.0,605.1 1489.3,597.1 1484.9,594.6 1492.7,587.8 1488.2,585.3 1495.5,580.2 1494.4,577.7 1499.1,570.4 1498.0,567.9"/><polygon points="1517.0,580.0 1520.7,587.3 1519.7,589.8 1524.9,595.3 1522.6,597.8 1528.1,603.4 1525.6,605.9 1533.1,613.5 1529.3,616.0 1540.3,623.7 1533.1,626.2 1542.0,634.9 1537.2,637.4 1547.5,643.5 1540.3,646.0 1556.1,654.1 1544.2,656.6 1565.1,662.1 1547.2,664.6 1568.7,671.6 1549.3,674.1 1567.9,680.1 1549.3,682.6 1556.2,691.3 1549.3,693.8 1565.9,699.6 1549.3,702.1 1563.9,709.3 1549.3,711.8 1563.9,720.9 1549.3,723.4 1563.5,728.8 1549.3,731.3 1567.5,738.3 1549.3,740.8 1563.1,746.5 1549.3,749.0 1568.2,757.0 1549.3,759.5 1567.7,766.2 1549.3,768.7 1558.8,773.6 1549.3,776.1 1562.8,780.8 1549.3,783.3 1569.7,790.2 1549.3,792.7 1566.8,800.1 1549.3,802.6 1556.0,809.7 1549.3,812.2 1568.1,818.3 1549.3,820.8 1567.7,826.6 1549.3,829.1 1555.8,834.2 1549.3,836.7 1554.7,841.4 1549.3,843.9 1567.8,853.0 1549.3,855.5 1559.1,861.5 1549.3,864.0 1555.0,869.0 1549.3,871.5 1570.0,877.2 1549.3,879.7 1557.0,886.3 1549.3,888.8 1569.2,893.5 1549.3,896.0 1554.9,903.0 1549.3,905.5 1484.7,905.5 1479.0,903.0 1484.7,896.0 1468.7,893.5 1484.7,888.8 1466.3,886.3 1484.7,879.7 1472.8,877.2 1484.7,871.5 1467.2,869.0 1484.7,864.0 1477.7,861.5 1484.7,855.5 1472.8,853.0 1484.7,843.9 1468.9,841.4 1484.7,836.7 1468.7,834.2 1484.7,829.1 1478.8,826.6 1484.7,820.8 1464.7,818.3 1484.7,812.2 1475.7,809.7 1484.7,802.6 1469.7,800.1 1484.7,792.7 1478.3,790.2 1484.7,783.3 1478.8,780.8 1484.7,776.1 1473.0,773.6 1484.7,768.7 1471.9,766.2 1484.7,759.5 1474.7,757.0 1484.7,749.0 1476.2,746.5 1484.7,740.8 1479.7,738.3 1484.7,731.3 1464.7,728.8 1484.7,723.4 1474.2,720.9 1484.7,711.8 1468.9,709.3 1484.7,702.1 1469.7,699.6 1484.7,693.8 1475.6,691.3 1484.7,682.6 1477.0,680.1 1484.7,674.1 1478.1,671.6 1486.8,664.6 1481.2,662.1 1489.8,656.6 1484.9,654.1 1493.7,646.0 1482.0,643.5 1496.8,637.4 1487.7,634.9 1500.9,626.2 1491.6,623.7 1504.7,616.0 1499.0,613.5 1508.4,605.9 1506.3,603.4 1511.4,597.8 1510.2,595.3 1514.3,589.8 1512.8,587.3"/><polygon points="1536.0,605.0 1539.8,612.4 1538.7,614.9 1543.0,619.7 1541.4,622.2 1548.8,629.2 1544.9,631.7 1550.1,638.2 1548.2,640.7 1555.2,648.9 1552.1,651.4 1561.3,657.6 1555.3,660.1 1569.6,666.5 1558.6,669.0 1577.0,676.4 1562.2,678.9 1581.6,687.8 1566.4,690.3 1581.6,698.3 1568.3,700.8 1573.7,707.2 1568.3,709.7 1574.8,714.8 1568.3,717.3 1588.8,722.1 1568.3,724.6 1587.2,730.4 1568.3,732.9 1585.5,741.7 1568.3,744.2 1579.2,750.3 1568.3,752.8 1576.1,761.7 1568.3,764.2 1587.7,769.1 1568.3,771.6 1582.2,776.7 1568.3,779.2 1585.6,784.1 1568.3,786.6 1585.2,792.8 1568.3,795.3 1578.0,802.8 1568.3,805.3 1573.2,811.7 1568.3,814.2 1574.8,821.7 1568.3,824.2 1586.0,831.7 1568.3,834.2 1576.2,840.5 1568.3,843.0 1583.1,848.0 1568.3,850.5 1587.4,855.9 1568.3,858.4 1580.1,866.3 1568.3,868.8 1579.9,877.0 1568.3,879.5 1575.9,887.6 1568.3,890.1 1585.6,896.3 1568.3,898.8 1584.0,906.7 1568.3,909.2 1503.7,909.2 1497.1,906.7 1503.7,898.8 1487.2,896.3 1503.7,890.1 1488.6,887.6 1503.7,879.5 1493.8,877.0 1503.7,868.8 1497.5,866.3 1503.7,858.4 1490.0,855.9 1503.7,850.5 1491.8,848.0 1503.7,843.0 1498.0,840.5 1503.7,834.2 1489.3,831.7 1503.7,824.2 1488.0,821.7 1503.7,814.2 1483.3,811.7 1503.7,805.3 1484.3,802.8 1503.7,795.3 1486.3,792.8 1503.7,786.6 1490.0,784.1 1503.7,779.2 1493.4,776.7 1503.7,771.6 1497.9,769.1 1503.7,764.2 1483.7,761.7 1503.7,752.8 1488.1,750.3 1503.7,744.2 1490.0,741.7 1503.7,732.9 1487.9,730.4 1503.7,724.6 1497.5,722.1 1503.7,717.3 1485.0,714.8 1503.7,709.7 1491.1,707.2 1503.7,700.8 1485.1,698.3 1505.6,690.3 1493.1,687.8 1509.8,678.9 1502.9,676.4 1513.4,669.0 1510.1,666.5 1516.7,660.1 1511.4,657.6 1519.9,651.4 1512.9,648.9 1523.8,640.7 1517.9,638.2 1527.1,631.7 1524.4,629.2 1530.6,622.2 1528.4,619.7 1533.3,614.9 1531.6,612.4"/><polygon points="1554.0,576.0 1558.7,586.2 1557.7,588.7 1564.8,597.3 1561.8,599.8 1568.4,604.9 1564.6,607.4 1572.7,613.8 1567.9,616.3 1578.3,622.8 1571.2,625.3 1588.5,634.1 1575.3,636.6 1583.0,643.3 1578.7,645.8 1597.7,651.2 1581.6,653.7 1591.2,660.4 1585.0,662.9 1591.1,669.8 1586.3,672.3 1594.4,677.7 1586.3,680.2 1604.6,685.6 1586.3,688.1 1593.6,694.8 1586.3,697.3 1594.8,704.7 1586.3,707.2 1596.1,716.3 1586.3,718.8 1600.1,727.8 1586.3,730.3 1603.5,735.3 1586.3,737.8 1591.6,745.9 1586.3,748.4 1602.0,756.1 1586.3,758.6 1606.2,767.3 1586.3,769.8 1602.2,776.7 1586.3,779.2 1591.9,785.4 1586.3,787.9 1592.0,794.6 1586.3,797.1 1591.0,805.5 1586.3,808.0 1604.5,814.3 1586.3,816.8 1603.3,822.9 1586.3,825.4 1598.5,831.4 1586.3,833.9 1606.2,840.1 1586.3,842.6 1605.0,848.7 1586.3,851.2 1594.3,856.5 1586.3,859.0 1592.4,867.9 1586.3,870.4 1602.5,875.3 1586.3,877.8 1602.1,883.2 1586.3,885.7 1601.3,893.6 1586.3,896.1 1595.6,902.5 1586.3,905.0 1521.7,905.0 1509.9,902.5 1521.7,896.1 1505.1,893.6 1521.7,885.7 1512.9,883.2 1521.7,877.8 1508.1,875.3 1521.7,870.4 1510.2,867.9 1521.7,859.0 1513.8,856.5 1521.7,851.2 1502.9,848.7 1521.7,842.6 1503.1,840.1 1521.7,833.9 1515.8,831.4 1521.7,825.4 1505.4,822.9 1521.7,816.8 1509.9,814.3 1521.7,808.0 1512.1,805.5 1521.7,797.1 1504.1,794.6 1521.7,787.9 1515.4,785.4 1521.7,779.2 1511.4,776.7 1521.7,769.8 1507.4,767.3 1521.7,758.6 1502.5,756.1 1521.7,748.4 1506.2,745.9 1521.7,737.8 1514.8,735.3 1521.7,730.3 1516.9,727.8 1521.7,718.8 1513.1,716.3 1521.7,707.2 1503.7,704.7 1521.7,697.3 1502.3,694.8 1521.7,688.1 1515.6,685.6 1521.7,680.2 1510.9,677.7 1521.7,672.3 1514.2,669.8 1523.0,662.9 1516.3,660.4 1526.4,653.7 1511.1,651.2 1529.3,645.8 1518.1,643.3 1532.7,636.6 1527.6,634.1 1536.8,625.3 1530.7,622.8 1540.1,616.3 1532.1,613.8 1543.4,607.4 1539.0,604.9 1546.2,599.8 1542.0,597.3 1550.3,588.7 1548.9,586.2"/><polygon points="1573.0,579.0 1578.0,589.9 1577.0,592.4 1582.5,601.5 1581.3,604.0 1589.2,608.8 1583.9,611.3 1595.3,617.5 1587.1,620.0 1597.1,625.1 1589.9,627.6 1604.6,634.7 1593.5,637.2 1606.7,644.3 1597.0,646.8 1615.3,651.8 1599.7,654.3 1621.4,661.6 1603.3,664.1 1610.0,669.4 1605.3,671.9 1619.6,678.6 1605.3,681.1 1614.1,689.6 1605.3,692.1 1616.5,696.8 1605.3,699.3 1613.5,707.8 1605.3,710.3 1612.0,717.5 1605.3,720.0 1617.0,726.6 1605.3,729.1 1617.3,734.8 1605.3,737.3 1620.3,742.5 1605.3,745.0 1620.8,754.0 1605.3,756.5 1625.0,763.5 1605.3,766.0 1616.0,774.1 1605.3,776.6 1622.2,783.1 1605.3,785.6 1622.3,791.5 1605.3,794.0 1612.4,800.0 1605.3,802.5 1624.0,807.4 1605.3,809.9 1623.4,814.8 1605.3,817.3 1616.9,822.5 1605.3,825.0 1616.4,832.5 1605.3,835.0 1616.0,841.9 1605.3,844.4 1619.2,850.7 1605.3,853.2 1617.4,861.5 1605.3,864.0 1616.9,868.9 1605.3,871.4 1614.1,879.5 1605.3,882.0 1620.9,890.9 1605.3,893.4 1619.4,899.4 1605.3,901.9 1613.8,908.5 1605.3,911.0 1540.7,911.0 1531.6,908.5 1540.7,901.9 1535.4,899.4 1540.7,893.4 1524.4,890.9 1540.7,882.0 1521.7,879.5 1540.7,871.4 1520.5,868.9 1540.7,864.0 1533.3,861.5 1540.7,853.2 1521.4,850.7 1540.7,844.4 1531.6,841.9 1540.7,835.0 1535.4,832.5 1540.7,825.0 1533.2,822.5 1540.7,817.3 1521.8,814.8 1540.7,809.9 1529.9,807.4 1540.7,802.5 1525.4,800.0 1540.7,794.0 1522.6,791.5 1540.7,785.6 1533.2,783.1 1540.7,776.6 1529.1,774.1 1540.7,766.0 1526.8,763.5 1540.7,756.5 1533.0,754.0 1540.7,745.0 1527.2,742.5 1540.7,737.3 1531.5,734.8 1540.7,729.1 1532.2,726.6 1540.7,720.0 1526.2,717.5 1540.7,710.3 1525.6,707.8 1540.7,699.3 1526.1,696.8 1540.7,692.1 1525.6,689.6 1540.7,681.1 1534.4,678.6 1540.7,671.9 1535.1,669.4 1542.7,664.1 1533.0,661.6 1546.3,654.3 1529.5,651.8 1549.0,646.8 1538.9,644.3 1552.5,637.2 1543.9,634.7 1556.1,627.6 1546.5,625.1 1558.9,620.0 1550.4,617.5 1562.1,611.3 1557.5,608.8 1564.7,604.0 1562.7,601.5 1569.0,592.4 1568.4,589.9"/><polygon points="1595.0,573.0 1598.9,582.3 1598.4,584.8 1605.9,593.9 1602.7,596.4 1612.5,605.0 1606.8,607.5 1619.2,615.2 1610.5,617.7 1617.3,623.1 1613.4,625.6 1622.1,634.6 1617.6,637.1 1634.8,646.2 1621.9,648.7 1643.1,656.4 1625.7,658.9 1639.2,666.3 1627.3,668.8 1643.1,675.2 1627.3,677.7 1647.4,683.5 1627.3,686.0 1636.8,695.2 1627.3,697.7 1641.7,703.9 1627.3,706.4 1644.2,712.7 1627.3,715.2 1639.9,720.9 1627.3,723.4 1637.3,729.7 1627.3,732.2 1633.4,737.7 1627.3,740.2 1636.5,748.6 1627.3,751.1 1640.6,756.5 1627.3,759.0 1646.3,764.5 1627.3,767.0 1643.1,772.9 1627.3,775.4 1645.7,780.9 1627.3,783.4 1632.7,790.8 1627.3,793.3 1640.5,799.7 1627.3,802.2 1632.7,809.0 1627.3,811.5 1642.2,818.6 1627.3,821.1 1648.1,827.2 1627.3,829.7 1644.6,836.3 1627.3,838.8 1639.8,844.1 1627.3,846.6 1645.7,852.8 1627.3,855.3 1637.7,863.3 1627.3,865.8 1640.3,872.1 1627.3,874.6 1635.6,882.8 1627.3,885.3 1635.9,891.8 1627.3,894.3 1633.8,903.4 1627.3,905.9 1562.7,905.9 1543.6,903.4 1562.7,894.3 1553.4,891.8 1562.7,885.3 1552.3,882.8 1562.7,874.6 1543.0,872.1 1562.7,865.8 1542.1,863.3 1562.7,855.3 1547.6,852.8 1562.7,846.6 1553.0,844.1 1562.7,838.8 1542.4,836.3 1562.7,829.7 1544.7,827.2 1562.7,821.1 1550.7,818.6 1562.7,811.5 1542.8,809.0 1562.7,802.2 1545.8,799.7 1562.7,793.3 1548.0,790.8 1562.7,783.4 1543.9,780.9 1562.7,775.4 1557.4,772.9 1562.7,767.0 1549.0,764.5 1562.7,759.0 1546.6,756.5 1562.7,751.1 1551.1,748.6 1562.7,740.2 1550.6,737.7 1562.7,732.2 1546.3,729.7 1562.7,723.4 1547.6,720.9 1562.7,715.2 1555.9,712.7 1562.7,706.4 1550.4,703.9 1562.7,697.7 1553.2,695.2 1562.7,686.0 1542.2,683.5 1562.7,677.7 1552.9,675.2 1562.7,668.8 1556.0,666.3 1564.3,658.9 1552.2,656.4 1568.1,648.7 1556.7,646.2 1572.4,637.1 1562.0,634.6 1576.6,625.6 1569.6,623.1 1579.5,617.7 1574.5,615.2 1583.2,607.5 1579.0,605.0 1587.3,596.4 1583.8,593.9 1591.6,584.8 1590.8,582.3"/><polygon points="1162.2,514.2 1169.0,519.5 1167.5,526.6 1174.6,530.0 1183.5,539.0 1187.0,546.0 1180.0,548.0 1194.0,556.8 1196.0,562.0 1187.0,567.5 1199.5,574.6 1206.6,583.5 1208.0,588.8 1199.5,592.4 1206.6,599.5 1210.0,606.6 1206.6,610.0 1215.5,620.8 1222.5,633.0 1224.3,642.0 1228.0,660.0 1240.0,900.0 1080.0,900.0 1100.0,660.0 1105.3,647.4 1110.7,636.8 1123.0,624.3 1117.8,619.0 1132.0,613.7 1139.0,606.6 1133.7,599.5 1126.6,592.4 1132.0,588.8 1139.0,583.5 1151.5,571.0 1148.0,565.7 1142.6,558.6 1151.5,553.3 1144.4,549.7 1142.6,542.6 1153.3,537.3 1151.5,532.0 1142.6,519.5 1151.5,521.3 1156.8,516.0"/><polygon points="0,815 150,800 300,805 450,770 500,800 1100,800 1100,680 1200,660 1360,650 1460,610 1600,610 1600,900 0,900"/></g>
<polygon points="786,900 790,896 872,885 876,890 876,900" fill="#7a4a20"/>
<polygon points="824,900 825,893 866,889 869,900" fill="#f6f0e2"/>
<polygon points="876,890 1000,872 1140,878 1200,900 876,900" fill="#0b0a0a"/>
<polygon points="1455,690 1600,668 1600,900 1455,900" fill="#080b0f"/>
<polygon points="1100,900 1110,880 1160,872 1200,888 1210,900" fill="#0d0c0c"/>
<g fill="none" stroke="#6a7382" stroke-width="1.2">
<rect x="1492" y="689" width="18" height="23"/><rect x="1471.5" y="739" width="23" height="23"/><rect x="1540" y="728" width="21" height="21"/><rect x="1596" y="672" width="10" height="22"/>
<path d="M1501 689 V712 M1483 739 V762 M1550 728 V749"/>
</g>
</svg>
<div id="ui" style="position:absolute;left:0;top:0;width:1600px;height:900px;will-change:transform">
<div id="tb"><svg class="a" style="left:3px;top:2px" width="16" height="17" viewBox="0 0 16 17">
<path d="M8 1 L14.5 4.7 V12.2 L8 16 L1.5 12.2 V4.7 Z" fill="#5aa0e6"/><path d="M8 4.3 L11.5 6.3 V10.5 L8 12.5 L4.5 10.5 V6.3 Z" fill="#f0efed"/>
<path d="M10 11 L13.5 15" stroke="#3a7fd0" stroke-width="2"/></svg><div class="a" style="left:22px;top:6px;width:2px;height:9px;border-left:1px dotted #999"></div><div class="tbb" style="left:27px;width:141px"></div><svg class="a" style="left:32px;top:4px" width="12" height="13" viewBox="0 0 12 13"><path d="M6 1 L11 3.8 V9.5 L6 12.3 L1 9.5 V3.8 Z" fill="#5a9be0"/><path d="M6 3.8 L8.6 5.3 V8.2 L6 9.7 L3.4 8.2 V5.3 Z" fill="#f4f3f1"/><path d="M7.5 9 L10 12" stroke="#3a7fd0" stroke-width="1.6"/></svg><div class="tbt" style="left:48px">Qube Manager</div><div class="tbb" style="left:168px;width:142px"></div><svg class="a" style="left:172px;top:4px" width="13" height="12" viewBox="0 0 13 12"><path d="M0.5 1 H5 L6 2 H12.5 V11.5 H0.5 Z" fill="#4a90d9"/><rect x="1.5" y="3.5" width="10" height="7" fill="#7db6ec"/><circle cx="6.5" cy="7" r="1.8" fill="none" stroke="#2a62a8" stroke-width="0.9"/></svg><div class="tbt" style="left:189px">Pictures</div><div class="tbb" style="left:310px;width:142px"></div><svg class="a" style="left:314px;top:5px" width="12" height="11" viewBox="0 0 12 11"><path d="M0.5 0.5 H4.5 L5.5 1.5 H11.5 V10.5 H0.5 Z" fill="#e25860"/><rect x="0.5" y="3" width="11" height="7.5" fill="#ef6f75"/></svg><div class="tbt" style="left:331px">dom0 - Thunar</div><div class="tbb" style="left:452px;width:142px"></div><svg class="a" style="left:456px;top:4px" width="12" height="13" viewBox="0 0 12 13"><path d="M1 1 H11 M6 1 V12 M2 12 L10 4 M2 4 L10 12" stroke="#c42424" stroke-width="1.6" fill="none"/><path d="M1 1 H11" stroke="#2c3fa8" stroke-width="2"/></svg><div class="tbt" style="left:473px">danny@dom0:~/Pictures</div><div class="a" style="left:1150px;top:0;width:31px;height:21px;background:#807b77"></div><svg class="a" style="left:1150px;top:0px" width="22" height="18" viewBox="0 0 22 18"><rect x="0.8" y="-1" width="15.5" height="14" fill="#c9cfdf" stroke="#2a2a2a" stroke-width="1"/><rect x="9.8" y="6.5" width="11" height="9.5" fill="#e6e4de" stroke="#2a2a2a" stroke-width="1"/></svg><div class="a" style="left:1182px;top:0;width:30px;height:21px;background:#b4b2af"></div><div class="a" style="left:1214px;top:0;width:30px;height:21px;background:#b4b2af"></div><div class="a" style="left:1246px;top:0;width:30px;height:21px;background:#b4b2af"></div><div class="tbt" style="left:1279px;font-size:9.7px">Mon 19 Feb, 17:09</div><svg class="a" style="left:1364px;top:3px" width="17" height="15" viewBox="0 0 17 15"><path d="M1 5 H4 L8.5 1 V14 L4 10 H1 Z" fill="#2a2a2a"/><path d="M11 4 Q13 7.5 11 11" stroke="#2a2a2a" stroke-width="1.5" fill="none"/><path d="M13.5 2 Q16.5 7.5 13.5 13" stroke="#999" stroke-width="1.3" fill="none"/></svg><svg class="a" style="left:1387px;top:2px" width="14" height="18" viewBox="0 0 14 18"><rect x="1.5" y="3" width="9" height="13" rx="1.5" fill="none" stroke="#2a2a2a" stroke-width="1.5"/><rect x="4" y="1" width="4" height="2" fill="#2a2a2a"/><path d="M9 8 L6.5 12.5 H9 L7.5 17 L12.5 11 H10 L12 8 Z" fill="#2a2a2a"/></svg><div class="tbt" style="left:1402px;font-size:9.7px">(1:01, 14%)</div><svg class="a" style="left:1455px;top:2px" width="12" height="17" viewBox="0 0 12 17"><path d="M3 8 V5 A3 3 0 0 1 9 5 V8" stroke="#8a8a8a" stroke-width="1.8" fill="none"/><circle cx="6" cy="11.5" r="4.5" fill="#8a8a8a"/><circle cx="6" cy="11.5" r="2" fill="#f0efed"/></svg><svg class="a" style="left:1472px;top:5px" width="13" height="12" viewBox="0 0 13 12"><path d="M0 12 L12.5 1 V12 Z" fill="#d42020"/><path d="M3 12 V8 M6 12 V6 M9 12 V4" stroke="#fff" stroke-width="0.7"/></svg><svg class="a" style="left:1487px;top:2px" width="16" height="17" viewBox="0 0 16 17"><rect x="0.5" y="1.5" width="9" height="14" fill="#b9b9b9" stroke="#8d8d8d"/><rect x="2" y="3" width="6" height="9" fill="#e9e9e9"/><rect x="4" y="4" width="2" height="5" fill="#d22"/><rect x="8" y="0.5" width="7" height="15" fill="#f08a24"/></svg><svg class="a" style="left:1506px;top:3px" width="14" height="16" viewBox="0 0 14 16"><rect x="1" y="1" width="12" height="12" fill="#e3e3e3" stroke="#c9c9c9"/><rect x="1" y="14" width="12" height="1.2" fill="#555"/></svg><svg class="a" style="left:1522px;top:3px" width="14" height="16" viewBox="0 0 14 16"><polygon points="7,0.5 13.5,4 13.5,12 7,15.5 0.5,12 0.5,4" fill="#7fb3ea"/><polygon points="0.5,4 7,7.5 7,15.5 0.5,12" fill="#3d73c0"/><polygon points="13.5,4 7,7.5 7,15.5 13.5,12" fill="#5c95d8"/></svg><svg class="a" style="left:1538px;top:3px" width="16" height="16" viewBox="0 0 16 16"><rect x="1" y="1" width="9" height="9" rx="1" fill="none" stroke="#222" stroke-width="1.4"/><rect x="5.5" y="5.5" width="9.5" height="9.5" rx="1" fill="#f0efed" stroke="#222" stroke-width="1.4"/></svg><svg class="a" style="left:1554px;top:2px" width="17" height="17" viewBox="0 0 17 17"><path d="M8.5 0.8 L10.5 2.8 L13.5 2.5 L13.8 5.5 L16 8.5 L13.8 11.5 L13.5 14.5 L10.5 14.2 L8.5 16.2 L6.5 14.2 L3.5 14.5 L3.2 11.5 L1 8.5 L3.2 5.5 L3.5 2.5 L6.5 2.8 Z" fill="#2a2a2a"/><path d="M8.5 4.5 L11.5 8 H9.5 V11.5 H7.5 V8 H5.5 Z" fill="#f0efed"/></svg><div class="tbt" style="left:1572px;font-size:9.7px">danny</div></div>
<div class="a" style="left:8px;top:40px;width:890px;height:624px;background:#f4f4f4;border-radius:3px 3px 0 0;box-shadow:0 0 0 1px #000"></div><div class="a" style="left:9px;top:40px;width:889px;height:16px;border-radius:3px 3px 0 0;background:linear-gradient(#fafafa,#ececec)"></div><div class="a" style="left:12px;top:43px;width:10px;height:10px;border:1px solid #8c8c8c;border-radius:1px;background:#fbfbfb"></div><svg class="a" style="left:14px;top:45px" width="6" height="6" viewBox="0 0 6 6"><rect x="0.5" y="0.5" width="5" height="1" fill="#777"/><polygon points="0.5,2.3 5.5,2.3 3,5" fill="#777"/></svg><div class="a" style="left:336.4px;width:200px;text-align:center;top:42.5px;font-size:9px;font-weight:bold;color:#8d8d8d">[Dom0] Qube Manager</div><div class="a" style="left:850px;top:43px;width:10px;height:10px;border:1px solid #8c8c8c;border-radius:1px;background:#fbfbfb"></div><div class="a" style="left:861.5px;top:43px;width:10px;height:10px;border:1px solid #8c8c8c;border-radius:1px;background:#fbfbfb"></div><div class="a" style="left:873px;top:43px;width:10px;height:10px;border:1px solid #8c8c8c;border-radius:1px;background:#fbfbfb"></div><div class="a" style="left:884.5px;top:43px;width:10px;height:10px;border:1px solid #dfa0a0;border-radius:1px;background:#fbfbfb"></div><svg class="a" style="left:852px;top:45px" width="6" height="6"><polygon points="3,1 5.5,4 0.5,4" fill="#888"/><rect x="0.5" y="4.5" width="5" height="1" fill="#888"/></svg><div class="a" style="left:863.5px;top:49.5px;width:6px;height:1.5px;background:#888"></div><div class="a" style="left:875px;top:45px;width:6px;height:6px;border:1px solid #888;border-top-width:2px"></div><svg class="a" style="left:886.5px;top:45px" width="6" height="6"><path d="M0.5 0.5 L5.5 5.5 M5.5 0.5 L0.5 5.5" stroke="#e8b0b0" stroke-width="1.6"/></svg><div class="a" style="left:10px;top:56px;width:886px;height:606px;background:#efefef;border:1px solid #2a2a2a;border-right-color:#8a8a8a;border-bottom-color:#8a8a8a"></div><div class="a" style="left:11px;top:57px;width:884px;height:15px;background:#efefef"></div><div class="a" style="left:17.8px;top:59.5px;font-size:9px;color:#2e2e2e"><u>S</u>ystem</div><div class="a" style="left:56.8px;top:59.5px;font-size:9px;color:#2e2e2e"><u>Q</u>ube</div><div class="a" style="left:89px;top:59.5px;font-size:9px;color:#2e2e2e"><u>V</u>iew</div><div class="a" style="left:118.5px;top:59.5px;font-size:9px;color:#2e2e2e"><u>A</u>bout</div><div class="a" style="left:11px;top:72px;width:884px;height:41px;background:linear-gradient(#f3f3f3,#efefef);border-bottom:1px solid #dadada"></div><div class="tl" style="left:45px;top:98px;position:absolute">New qube</div><div class="tl" style="left:100.5px;top:98px;position:absolute">Delete qube</div><div class="a" style="left:134px;top:80px;width:1px;height:27px;background:#dcdcdc"></div><div class="tl" style="left:168px;top:98px;position:absolute">Start/Resume</div><div class="tl d" style="left:241.5px;top:98px;position:absolute">Emergency pause</div><div class="tl d" style="left:308px;top:98px;position:absolute">Shutdown</div><div class="tl d" style="left:353.5px;top:98px;position:absolute">Restart</div><div class="a" style="left:376.5px;top:80px;width:1px;height:27px;background:#dcdcdc"></div><div class="tl" style="left:400.5px;top:98px;position:absolute">Settings</div><div class="tl" style="left:451px;top:98px;position:absolute">Edit firewall</div><div class="tl" style="left:513px;top:98px;position:absolute">App shortcuts</div><div class="tl d" style="left:566.5px;top:98px;position:absolute">Update</div><div class="tl d" style="left:625px;top:98px;position:absolute">Keyboard layout</div><div class="tl d" style="left:712px;top:98px;position:absolute">Open console in qube</div><div class="a" style="left:764px;top:80px;width:1px;height:27px;background:#dcdcdc"></div><div class="tl" style="left:798px;top:98px;position:absolute">Global config</div><div class="tl" style="left:850px;top:98px;position:absolute">Backup</div><div class="a" style="left:16px;top:80px;width:2px;height:27px;border-left:1px solid #d5d5d5"></div><svg class="a" style="left:37px;top:77px" width="18" height="18" viewBox="0 0 18 18"><rect x="1" y="4" width="14" height="12" fill="#fbfbfb" stroke="#e2e2e2"/><rect x="1" y="4" width="14" height="2" fill="#ececec"/><circle cx="12.5" cy="4.8" r="4" fill="#3cb043"/><path d="M12.5 2.2 V7.4 M9.9 4.8 H15.1" stroke="#fff" stroke-width="1.4"/></svg><svg class="a" style="left:91px;top:78px" width="18" height="17" viewBox="0 0 18 17"><rect x="2" y="1" width="14" height="13" fill="#fbfbfb" stroke="#d8d8d8"/><rect x="2" y="1" width="14" height="3" fill="#e0e0e0"/><path d="M3.5 8 L9 14 M9 8 L3.5 14" stroke="#d42020" stroke-width="2.2"/></svg><svg class="a" style="left:160px;top:78px" width="16" height="16" viewBox="0 0 16 16"><circle cx="8" cy="8" r="6.8" fill="none" stroke="#2a2a2a" stroke-width="1.4"/><polygon points="6,4.5 11.5,8 6,11.5" fill="#2a2a2a"/></svg><svg class="a" style="left:233.5px;top:78px" width="16" height="16" viewBox="0 0 16 16"><circle cx="8" cy="8" r="6.8" fill="none" stroke="#a9a9a9" stroke-width="1.4"/><rect x="5.5" y="5" width="1.8" height="6" fill="#a9a9a9"/><rect x="8.7" y="5" width="1.8" height="6" fill="#a9a9a9"/></svg><svg class="a" style="left:300px;top:78px" width="16" height="16" viewBox="0 0 16 16"><circle cx="8" cy="8" r="6.8" fill="none" stroke="#a9a9a9" stroke-width="1.4"/><rect x="5.3" y="5.3" width="5.4" height="5.4" fill="#a9a9a9"/></svg><svg class="a" style="left:345.5px;top:78px" width="16" height="16" viewBox="0 0 16 16"><circle cx="8" cy="8" r="6.8" fill="none" stroke="#a9a9a9" stroke-width="1.4"/><path d="M5.3 6.5 A3.2 3.2 0 1 0 7 4.8" fill="none" stroke="#a9a9a9" stroke-width="1.3"/><polygon points="4.2,4 7.5,3.2 6.5,6.5" fill="#a9a9a9"/></svg><svg class="a" style="left:392px;top:77px" width="17" height="17" viewBox="0 0 17 17"><circle cx="8.5" cy="8.5" r="6.5" fill="#aebdd0"/><circle cx="8.5" cy="8.5" r="7.5" fill="none" stroke="#c6d0dc" stroke-width="2" stroke-dasharray="2 1.5"/><circle cx="8.5" cy="8.5" r="3.8" fill="#2f5fa8"/><circle cx="7.8" cy="7.6" r="1.6" fill="#c9dbf2"/></svg><svg class="a" style="left:443px;top:78px" width="16" height="14" viewBox="0 0 16 14"><rect x="0.5" y="0.5" width="15" height="13" fill="#c0582a" stroke="#6a2a10"/><rect x="0.5" y="0.5" width="15" height="3" fill="#3a1a0a"/><path d="M1 7 H15 M1 10.5 H15 M5 3.5 V7 M10 7 V10.5 M6 10.5 V13.5" stroke="#e08050" stroke-width="0.6"/></svg><svg class="a" style="left:505px;top:77px" width="17" height="16" viewBox="0 0 17 16"><polygon points="1,8 7,3 10,6 5,11" fill="#e8542a"/><polygon points="5,11 10,6 13,9 8,14" fill="#4cb84c"/><polygon points="8,14 13,9 16,11 11,15" fill="#f2c12e"/><polygon points="7,3 12,0.5 15,4 10,6" fill="#4a7fd8"/></svg><svg class="a" style="left:558.5px;top:77px" width="16" height="17" viewBox="0 0 16 17"><rect x="5" y="0.5" width="6" height="8" fill="#b5b5b5"/><polygon points="1,7 15,7 8,16" fill="#a9a9a9"/></svg><svg class="a" style="left:617px;top:78px" width="16" height="15" viewBox="0 0 16 15"><rect x="1" y="1" width="13" height="13" fill="#f3f3f3" stroke="#d6d6d6"/><text x="5" y="9" font-size="6" fill="#aaa" font-family="Liberation Sans">a</text></svg><svg class="a" style="left:704px;top:78px" width="16" height="14" viewBox="0 0 16 14"><rect x="0.5" y="0.5" width="15" height="13" fill="#8d8d8d" stroke="#9b9b9b"/><rect x="1.5" y="1.5" width="13" height="10" fill="#6e6e6e"/><path d="M3 4 L5 5.5 L3 7" stroke="#ccc" fill="none" stroke-width="0.8"/></svg><svg class="a" style="left:789px;top:76px" width="18" height="18" viewBox="0 0 18 18"><circle cx="9" cy="8" r="7" fill="#3e8fe0"/><ellipse cx="7" cy="5.5" rx="3.5" ry="2.5" fill="#9cd0ff"/><path d="M2 13 Q9 17 16 13" stroke="#3c6c9c" stroke-width="1.6" fill="none"/></svg><svg class="a" style="left:842px;top:76px" width="16" height="18" viewBox="0 0 16 18"><rect x="1" y="9" width="14" height="8" rx="1" fill="#4a6fa8"/><rect x="1" y="9" width="14" height="3" fill="#7ea0d0"/><path d="M8 1 V9" stroke="#3aa43a" stroke-width="3"/><polygon points="3.5,6 12.5,6 8,11.5" fill="#3aa43a"/></svg><div class="a" style="left:886px;top:87.5px;font-size:9px;color:#555">&#187;</div><div class="a" style="left:21px;top:125px;font-size:9px;color:#333">Search:</div><div class="a" style="left:55.5px;top:121.5px;width:240px;height:17px;background:#fff;border:1px solid #c6c6c6;border-radius:2px"></div><div class="a" style="left:300px;top:125px;font-size:9px;color:#333">Show:</div><div class="chk" style="left:329px;top:125px;"><svg width="9" height="9" viewBox="0 0 9 9"><path d="M1.6 4.6 L3.6 7.4 L7.6 1.2" fill="none" stroke="#111" stroke-width="1.5" stroke-linecap="round" stroke-linejoin="round"/></svg></div><div class="a" style="left:342px;top:125px;font-size:9px;color:#333">Running</div><div class="chk" style="left:385px;top:125px;"><svg width="9" height="9" viewBox="0 0 9 9"><path d="M1.6 4.6 L3.6 7.4 L7.6 1.2" fill="none" stroke="#111" stroke-width="1.5" stroke-linecap="round" stroke-linejoin="round"/></svg></div><div class="a" style="left:398px;top:125px;font-size:9px;color:#333">Halted</div><div class="chk" style="left:433px;top:125px;"><svg width="9" height="9" viewBox="0 0 9 9"><path d="M1.6 4.6 L3.6 7.4 L7.6 1.2" fill="none" stroke="#111" stroke-width="1.5" stroke-linecap="round" stroke-linejoin="round"/></svg></div><div class="a" style="left:446px;top:125px;font-size:9px;color:#333">Network</div><div class="chk" style="left:491px;top:125px;"><svg width="9" height="9" viewBox="0 0 9 9"><path d="M1.6 4.6 L3.6 7.4 L7.6 1.2" fill="none" stroke="#111" stroke-width="1.5" stroke-linecap="round" stroke-linejoin="round"/></svg></div><div class="a" style="left:504px;top:125px;font-size:9px;color:#333">Templates</div><div class="chk" style="left:554px;top:125px;"><svg width="9" height="9" viewBox="0 0 9 9"><path d="M1.6 4.6 L3.6 7.4 L7.6 1.2" fill="none" stroke="#111" stroke-width="1.5" stroke-linecap="round" stroke-linejoin="round"/></svg></div><div class="a" style="left:567px;top:125px;font-size:9px;color:#333">Standalone</div><div class="chk" style="left:621px;top:125px;"><svg width="9" height="9" viewBox="0 0 9 9"><path d="M1.6 4.6 L3.6 7.4 L7.6 1.2" fill="none" stroke="#111" stroke-width="1.5" stroke-linecap="round" stroke-linejoin="round"/></svg></div><div class="a" style="left:634px;top:125px;font-size:9px;color:#333">All</div><div class="a" style="left:17px;top:143.5px;width:873px;height:501px;background:#fff;border:1px solid #c9c9c9;overflow:hidden"><div class="hdr" style="left:0px;width:26.5px"></div><div class="hdr" style="left:26.5px;width:26.8px"></div><div class="hdr" style="left:53.3px;width:116.5px">Name</div><div class="hdr" style="left:169.8px;width:41.2px"><span style="position:absolute;left:5px">State</span><svg style="position:absolute;left:33px;top:4.5px" width="6" height="4"><polygon points="0,0 6,0 3,3.5" fill="#444"/></svg></div><div class="hdr" style="left:211px;width:96.0px">Template</div><div class="hdr" style="left:307px;width:85.0px">NetVM</div><div class="hdr" style="left:392px;width:66.0px">Disk Usage</div><div class="hdr" style="left:458px;width:54.7px">Internal</div><div class="hdr" style="left:512.7px;width:60.6px">IP</div><div class="hdr" style="left:573.3px;width:51.0px">Backup</div><div class="hdr" style="left:624.3px;width:70.6px">Last backup</div><div class="hdr" style="left:694.9px;width:116.4px">Default DispVM</div><div class="hdr" style="left:811.3px;width:70.7px"><span style="position:absolute;left:10px">Is DVM Template</span></div><div class="row" style="top:14.00px"><svg class="a" style="left:3px;top:4px" width="14" height="14" viewBox="0 0 14 14">
<rect x="0.5" y="0.5" width="13" height="8" fill="#2d5f9e"/><rect x="1.5" y="2" width="3" height="3" fill="#e9f2fb"/><rect x="6" y="3" width="6" height="4" fill="#8fb8e0"/>
<path d="M3 12 Q7 7 12 10" stroke="#9aa7b5" fill="none" stroke-width="1.2"/><circle cx="10" cy="11" r="2" fill="none" stroke="#c9cfd6" stroke-width="1"/>
</svg><svg class="a" style="left:29px;top:3px" width="15" height="16" viewBox="0 0 15 16">
<polygon points="7.5,0.3 14.6,4 14.6,12 7.5,15.7 0.4,12 0.4,4" fill="#1e1e1e" stroke="#1e1e1e" stroke-width="0.6" stroke-linejoin="round"/>
<path d="M3.2 5.2 H5 V7.2 H6.6 V5.2 H8.4 V7.2 H10 V5.2 H11.8 V10.8 H3.2 Z" fill="#fff"/>
<rect x="4.6" y="8.6" width="5.8" height="1" fill="#1e1e1e"/>
<polygon points="7.5,15.7 14.6,12 14.6,11 7.5,14.5" fill="#555"/>
</svg><div class="c" style="left:55.5px">dom0</div><svg class="a" style="left:174.5px;top:8px" width="7" height="7" viewBox="0 0 7 7">
<defs><radialGradient id="gd" cx="0.5" cy="0.25" r="0.7"><stop offset="0" stop-color="#a6e39a"/><stop offset="1" stop-color="#2f8f2f"/></radialGradient></defs>
<ellipse cx="3.5" cy="3.5" rx="3.2" ry="2.9" fill="url(#gd)"/></svg><div class="c it" style="left:213.8px">AdminVM</div><div class="c" style="left:310.6px">n/a</div><div class="c" style="left:395px">n/a</div><div class="c" style="left:515.8px">n/a</div><div class="chk" style="left:576px;top:5.5px;"><svg width="9" height="9" viewBox="0 0 9 9"><path d="M1.6 4.6 L3.6 7.4 L7.6 1.2" fill="none" stroke="#111" stroke-width="1.5" stroke-linecap="round" stroke-linejoin="round"/></svg></div><div class="c" style="left:698px">default (default-dvm)</div></div><div class="row alt" style="top:35.30px"><svg class="a" style="left:3px;top:4px" width="14" height="14" viewBox="0 0 14 14">
<rect x="1" y="1" width="11" height="1.2" fill="#c9c9c9"/>
<circle cx="6" cy="7" r="2.8" fill="none" stroke="#b0b0b0" stroke-width="1.1"/>
<path d="M8.5 9.5 L10.5 11.5" stroke="#b8b8b8" stroke-width="1.1"/>
</svg><svg class="a" style="left:29.5px;top:2.8px" width="15" height="16" viewBox="0 0 15 17">
<polygon points="1,3.6 6.7,0.9 13.9,4.6 7.4,7.6" fill="#f5c518" stroke="#f5c518" stroke-width="0.6" stroke-linejoin="round"/>
<polygon points="1,3.6 7.4,7.6 7.2,16.4 1,12.8" fill="#c99a00" stroke="#c99a00" stroke-width="0.6" stroke-linejoin="round"/>
<polygon points="7.4,7.6 13.9,4.6 13.9,12.3 7.2,16.4" fill="#e2b100" stroke="#e2b100" stroke-width="0.6" stroke-linejoin="round"/>
</svg><div class="c" style="left:55.5px">personal</div><svg class="a" style="left:174.5px;top:8px" width="7" height="7" viewBox="0 0 7 7">
<defs><radialGradient id="gd" cx="0.5" cy="0.25" r="0.7"><stop offset="0" stop-color="#a6e39a"/><stop offset="1" stop-color="#2f8f2f"/></radialGradient></defs>
<ellipse cx="3.5" cy="3.5" rx="3.2" ry="2.9" fill="url(#gd)"/></svg><div class="c" style="left:213.8px">fedora-38-xfce</div><div class="c" style="left:310.6px">sys-firewall</div><div class="c" style="left:395px">7950.62 MiB</div><div class="c" style="left:515.8px">10.137.0.14</div><div class="chk" style="left:576px;top:5.5px;"><svg width="9" height="9" viewBox="0 0 9 9"><path d="M1.6 4.6 L3.6 7.4 L7.6 1.2" fill="none" stroke="#111" stroke-width="1.5" stroke-linecap="round" stroke-linejoin="round"/></svg></div><div class="c" style="left:698px">default (default-dvm)</div></div><div class="row" style="top:56.60px"><svg class="a" style="left:3px;top:4px" width="14" height="14" viewBox="0 0 14 14">
<rect x="1" y="1" width="11" height="1.2" fill="#c9c9c9"/>
<circle cx="6" cy="7" r="2.8" fill="none" stroke="#b0b0b0" stroke-width="1.1"/>
<path d="M8.5 9.5 L10.5 11.5" stroke="#b8b8b8" stroke-width="1.1"/>
</svg><svg class="a" style="left:29.5px;top:2.8px" width="15" height="16" viewBox="0 0 15 17">
<polygon points="1,3.6 6.7,0.9 13.9,4.6 7.4,7.6" fill="#ef5350" stroke="#ef5350" stroke-width="0.6" stroke-linejoin="round"/>
<polygon points="1,3.6 7.4,7.6 7.2,16.4 1,12.8" fill="#f7b8b2" stroke="#f7b8b2" stroke-width="0.6" stroke-linejoin="round"/>
<polygon points="7.4,7.6 13.9,4.6 13.9,12.3 7.2,16.4" fill="#e53935" stroke="#e53935" stroke-width="0.6" stroke-linejoin="round"/><polygon points="2.6,7.0 5.9,8.9 5.8,13.2 2.6,11.3" fill="#3a0505"/>
</svg><div class="c" style="left:55.5px">sys-net</div><svg class="a" style="left:174.5px;top:8px" width="7" height="7" viewBox="0 0 7 7">
<defs><radialGradient id="gd" cx="0.5" cy="0.25" r="0.7"><stop offset="0" stop-color="#a6e39a"/><stop offset="1" stop-color="#2f8f2f"/></radialGradient></defs>
<ellipse cx="3.5" cy="3.5" rx="3.2" ry="2.9" fill="url(#gd)"/></svg><div class="c" style="left:213.8px">fedora-38-xfce</div><div class="c" style="left:310.6px">n/a</div><div class="c" style="left:395px">6439.11 MiB</div><div class="c" style="left:515.8px">10.137.0.6</div><div class="chk" style="left:576px;top:5.5px;"><svg width="9" height="9" viewBox="0 0 9 9"><path d="M1.6 4.6 L3.6 7.4 L7.6 1.2" fill="none" stroke="#111" stroke-width="1.5" stroke-linecap="round" stroke-linejoin="round"/></svg></div><div class="c" style="left:698px">default (default-dvm)</div></div><div class="row alt" style="top:77.90px"><svg class="a" style="left:3px;top:4px" width="14" height="14" viewBox="0 0 14 14">
<rect x="1" y="1" width="11" height="1.2" fill="#c9c9c9"/>
<circle cx="6" cy="7" r="2.8" fill="none" stroke="#b0b0b0" stroke-width="1.1"/>
<path d="M8.5 9.5 L10.5 11.5" stroke="#b8b8b8" stroke-width="1.1"/>
</svg><svg class="a" style="left:29.5px;top:2.8px" width="15" height="16" viewBox="0 0 15 17">
<polygon points="1,3.6 6.7,0.9 13.9,4.6 7.4,7.6" fill="#8a8a8a" stroke="#8a8a8a" stroke-width="0.6" stroke-linejoin="round"/>
<polygon points="1,3.6 7.4,7.6 7.2,16.4 1,12.8" fill="#e6e6e6" stroke="#e6e6e6" stroke-width="0.6" stroke-linejoin="round"/>
<polygon points="7.4,7.6 13.9,4.6 13.9,12.3 7.2,16.4" fill="#6a6a6a" stroke="#6a6a6a" stroke-width="0.6" stroke-linejoin="round"/><polygon points="2.6,7.0 5.9,8.9 5.8,13.2 2.6,11.3" fill="#111111"/>
</svg><div class="c" style="left:55.5px">sys-whonix</div><svg class="a" style="left:174.5px;top:8px" width="7" height="7" viewBox="0 0 7 7">
<defs><radialGradient id="gd" cx="0.5" cy="0.25" r="0.7"><stop offset="0" stop-color="#a6e39a"/><stop offset="1" stop-color="#2f8f2f"/></radialGradient></defs>
<ellipse cx="3.5" cy="3.5" rx="3.2" ry="2.9" fill="url(#gd)"/></svg><div class="c" style="left:213.8px">whonix-gateway-17</div><div class="c" style="left:310.6px">sys-firewall</div><div class="c" style="left:395px">2098.59 MiB</div><div class="c" style="left:515.8px">10.137.0.11</div><div class="chk" style="left:576px;top:5.5px;"><svg width="9" height="9" viewBox="0 0 9 9"><path d="M1.6 4.6 L3.6 7.4 L7.6 1.2" fill="none" stroke="#111" stroke-width="1.5" stroke-linecap="round" stroke-linejoin="round"/></svg></div><div class="c" style="left:698px">default (default-dvm)</div></div><div class="row" style="top:99.20px"><svg class="a" style="left:3px;top:4px" width="14" height="14" viewBox="0 0 14 14">
<rect x="1" y="1" width="11" height="1.2" fill="#c9c9c9"/>
<circle cx="6" cy="7" r="2.8" fill="none" stroke="#b0b0b0" stroke-width="1.1"/>
<path d="M8.5 9.5 L10.5 11.5" stroke="#b8b8b8" stroke-width="1.1"/>
</svg><svg class="a" style="left:29.5px;top:2.8px" width="15" height="16" viewBox="0 0 15 17">
<polygon points="1,3.6 6.7,0.9 13.9,4.6 7.4,7.6" fill="#e53935" stroke="#e53935" stroke-width="0.6" stroke-linejoin="round"/>
<polygon points="1,3.6 7.4,7.6 7.2,16.4 1,12.8" fill="#a31515" stroke="#a31515" stroke-width="0.6" stroke-linejoin="round"/>
<polygon points="7.4,7.6 13.9,4.6 13.9,12.3 7.2,16.4" fill="#cc2222" stroke="#cc2222" stroke-width="0.6" stroke-linejoin="round"/>
</svg><div class="c" style="left:55.5px">untrusted</div><svg class="a" style="left:174.5px;top:8px" width="7" height="7" viewBox="0 0 7 7">
<defs><radialGradient id="gd" cx="0.5" cy="0.25" r="0.7"><stop offset="0" stop-color="#a6e39a"/><stop offset="1" stop-color="#2f8f2f"/></radialGradient></defs>
<ellipse cx="3.5" cy="3.5" rx="3.2" ry="2.9" fill="url(#gd)"/></svg><div class="c" style="left:213.8px">fedora-38-xfce</div><div class="c" style="left:310.6px">sys-firewall</div><div class="c" style="left:395px">5931.89 MiB</div><div class="c" style="left:515.8px">10.137.0.16</div><div class="chk" style="left:576px;top:5.5px;"><svg width="9" height="9" viewBox="0 0 9 9"><path d="M1.6 4.6 L3.6 7.4 L7.6 1.2" fill="none" stroke="#111" stroke-width="1.5" stroke-linecap="round" stroke-linejoin="round"/></svg></div><div class="c" style="left:698px">default (default-dvm)</div></div><div class="row alt" style="top:120.50px"><svg class="a" style="left:3px;top:4px" width="14" height="14" viewBox="0 0 14 14">
<rect x="1" y="1" width="11" height="1.2" fill="#c9c9c9"/>
<circle cx="6" cy="7" r="2.8" fill="none" stroke="#b0b0b0" stroke-width="1.1"/>
<path d="M8.5 9.5 L10.5 11.5" stroke="#b8b8b8" stroke-width="1.1"/>
</svg><svg class="a" style="left:29.5px;top:2.8px" width="15" height="16" viewBox="0 0 15 17">
<polygon points="1,3.6 6.7,0.9 13.9,4.6 7.4,7.6" fill="#7dd87a" stroke="#7dd87a" stroke-width="0.6" stroke-linejoin="round"/>
<polygon points="1,3.6 7.4,7.6 7.2,16.4 1,12.8" fill="#a6f29a" stroke="#a6f29a" stroke-width="0.6" stroke-linejoin="round"/>
<polygon points="7.4,7.6 13.9,4.6 13.9,12.3 7.2,16.4" fill="#5cbf58" stroke="#5cbf58" stroke-width="0.6" stroke-linejoin="round"/><polygon points="2.6,7.0 5.9,8.9 5.8,13.2 2.6,11.3" fill="#0b3d0b"/>
</svg><div class="c" style="left:55.5px">sys-firewall</div><svg class="a" style="left:174.5px;top:8px" width="7" height="7" viewBox="0 0 7 7">
<defs><radialGradient id="gd" cx="0.5" cy="0.25" r="0.7"><stop offset="0" stop-color="#a6e39a"/><stop offset="1" stop-color="#2f8f2f"/></radialGradient></defs>
<ellipse cx="3.5" cy="3.5" rx="3.2" ry="2.9" fill="url(#gd)"/></svg><svg class="a" style="left:187px;top:7px" width="9" height="9" viewBox="0 0 9 9">
<path d="M7.2 3.2 A3 3 0 1 0 7.3 5.5" fill="none" stroke="#5fae55" stroke-width="1.6"/><polygon points="5.5,1.8 8.6,1.5 8,4.6" fill="#5fae55"/></svg><div class="c" style="left:213.8px">default-dvm</div><div class="c" style="left:310.6px">sys-net</div><div class="c" style="left:395px">5469.55 MiB</div><div class="c" style="left:515.8px">10.138.14.240</div><div class="chk" style="left:576px;top:5.5px;"><svg width="9" height="9" viewBox="0 0 9 9"><path d="M1.6 4.6 L3.6 7.4 L7.6 1.2" fill="none" stroke="#111" stroke-width="1.5" stroke-linecap="round" stroke-linejoin="round"/></svg></div><div class="c" style="left:698px">default (default-dvm)</div></div><div class="row" style="top:141.80px"><svg class="a" style="left:3px;top:4px" width="14" height="14" viewBox="0 0 14 14">
<rect x="1" y="1" width="11" height="1.2" fill="#c9c9c9"/>
<circle cx="6" cy="7" r="2.8" fill="none" stroke="#b0b0b0" stroke-width="1.1"/>
<path d="M8.5 9.5 L10.5 11.5" stroke="#b8b8b8" stroke-width="1.1"/>
</svg><svg class="a" style="left:29.5px;top:2.8px" width="15" height="16" viewBox="0 0 15 17">
<polygon points="1,3.6 6.7,0.9 13.9,4.6 7.4,7.6" fill="#ef5350" stroke="#ef5350" stroke-width="0.6" stroke-linejoin="round"/>
<polygon points="1,3.6 7.4,7.6 7.2,16.4 1,12.8" fill="#f7b8b2" stroke="#f7b8b2" stroke-width="0.6" stroke-linejoin="round"/>
<polygon points="7.4,7.6 13.9,4.6 13.9,12.3 7.2,16.4" fill="#e53935" stroke="#e53935" stroke-width="0.6" stroke-linejoin="round"/><polygon points="2.6,7.0 5.9,8.9 5.8,13.2 2.6,11.3" fill="#3a0505"/>
</svg><div class="c" style="left:55.5px">sys-usb</div><svg class="a" style="left:174.5px;top:8px" width="7" height="7" viewBox="0 0 7 7">
<defs><radialGradient id="gd" cx="0.5" cy="0.25" r="0.7"><stop offset="0" stop-color="#a6e39a"/><stop offset="1" stop-color="#2f8f2f"/></radialGradient></defs>
<ellipse cx="3.5" cy="3.5" rx="3.2" ry="2.9" fill="url(#gd)"/></svg><svg class="a" style="left:187px;top:7px" width="9" height="9" viewBox="0 0 9 9">
<path d="M7.2 3.2 A3 3 0 1 0 7.3 5.5" fill="none" stroke="#5fae55" stroke-width="1.6"/><polygon points="5.5,1.8 8.6,1.5 8,4.6" fill="#5fae55"/></svg><div class="c" style="left:213.8px">default-dvm</div><div class="c" style="left:310.6px">n/a</div><div class="c" style="left:395px">5665.7 MiB</div><div class="c" style="left:515.8px">10.138.18.192</div><div class="chk" style="left:576px;top:5.5px;"><svg width="9" height="9" viewBox="0 0 9 9"><path d="M1.6 4.6 L3.6 7.4 L7.6 1.2" fill="none" stroke="#111" stroke-width="1.5" stroke-linecap="round" stroke-linejoin="round"/></svg></div><div class="c" style="left:698px">default (default-dvm)</div></div><div class="row alt" style="top:163.10px"><svg class="a" style="left:3px;top:4px" width="14" height="14" viewBox="0 0 14 14">
<rect x="1" y="1" width="11" height="1.2" fill="#c9c9c9"/>
<circle cx="6" cy="7" r="2.8" fill="none" stroke="#b0b0b0" stroke-width="1.1"/>
<path d="M8.5 9.5 L10.5 11.5" stroke="#b8b8b8" stroke-width="1.1"/>
</svg><svg class="a" style="left:29.5px;top:2.8px" width="15" height="16" viewBox="0 0 15 17">
<polygon points="1,3.6 6.7,0.9 13.9,4.6 7.4,7.6" fill="#e53935" stroke="#e53935" stroke-width="0.6" stroke-linejoin="round"/>
<polygon points="1,3.6 7.4,7.6 7.2,16.4 1,12.8" fill="#a31515" stroke="#a31515" stroke-width="0.6" stroke-linejoin="round"/>
<polygon points="7.4,7.6 13.9,4.6 13.9,12.3 7.2,16.4" fill="#cc2222" stroke="#cc2222" stroke-width="0.6" stroke-linejoin="round"/>
</svg><div class="c" style="left:55.5px">anon-whonix</div><div class="c" style="left:213.8px">whonix-workstation-17</div><div class="c" style="left:310.6px">sys-whonix</div><div class="c" style="left:395px">97.71 MiB</div><div class="c" style="left:515.8px">10.137.0.20</div><div class="chk" style="left:576px;top:5.5px;"><svg width="9" height="9" viewBox="0 0 9 9"><path d="M1.6 4.6 L3.6 7.4 L7.6 1.2" fill="none" stroke="#111" stroke-width="1.5" stroke-linecap="round" stroke-linejoin="round"/></svg></div><div class="c" style="left:698px">default (default-dvm)</div></div><div class="row" style="top:184.40px"><svg class="a" style="left:3px;top:5px" width="14" height="12" viewBox="0 0 14 12">
<rect x="5.5" y="0.5" width="8" height="5.5" fill="#2e6db4"/><rect x="6.3" y="1.3" width="6.4" height="3.5" fill="#3f8ee0"/>
<rect x="0.5" y="3" width="8" height="5.5" fill="#1f5aa8"/><rect x="1.3" y="3.8" width="6.4" height="3.7" fill="#3b86d8"/>
<rect x="3.5" y="9" width="2" height="1.5" fill="#222"/><rect x="9.5" y="6.5" width="2" height="1.3" fill="#222"/>
<rect x="2" y="10.4" width="5" height="1" fill="#333"/>
</svg><svg class="a" style="left:29px;top:3px" width="16" height="16" viewBox="0 0 16 16">
<polygon points="5,0.5 10,3 5,5.5 0,3" fill="#cfcfcf"/><polygon points="0,3 5,5.5 5,11 0,8.5" fill="#bdbdbd"/><polygon points="10,3 5,5.5 5,11 10,8.5" fill="#c8c8c8"/>
<polygon points="10.5,4.5 16,7.2 10.5,10 5,7.2" fill="#5a5a5a"/><polygon points="5,7.2 10.5,10 10.5,16 5,13.3" fill="#262626"/><polygon points="16,7.2 10.5,10 10.5,16 16,13.3" fill="#404040"/>
</svg><div class="c" style="left:55.5px">debian-12-xfce</div><div class="c it" style="left:213.8px">TemplateVM</div><div class="c" style="left:310.6px">default (n/a)</div><div class="c" style="left:395px">6024.82 MiB</div><div class="c" style="left:515.8px">n/a</div><div class="chk" style="left:576px;top:5.5px;"><svg width="9" height="9" viewBox="0 0 9 9"><path d="M1.6 4.6 L3.6 7.4 L7.6 1.2" fill="none" stroke="#111" stroke-width="1.5" stroke-linecap="round" stroke-linejoin="round"/></svg></div><div class="c" style="left:698px">default (default-dvm)</div></div><div class="row alt" style="top:205.70px"><svg class="a" style="left:3px;top:4px" width="14" height="14" viewBox="0 0 14 14">
<rect x="1" y="1" width="11" height="1.2" fill="#c9c9c9"/>
<circle cx="6" cy="7" r="2.8" fill="none" stroke="#b0b0b0" stroke-width="1.1"/>
<path d="M8.5 9.5 L10.5 11.5" stroke="#b8b8b8" stroke-width="1.1"/>
</svg><svg class="a" style="left:29px;top:3px" width="16" height="16" viewBox="0 0 16 16">
<polygon points="5,0.5 10,3 5,5.5 0,3" fill="#f5c2c2"/><polygon points="0,3 5,5.5 5,11 0,8.5" fill="#eeaaaa"/><polygon points="10,3 5,5.5 5,11 10,8.5" fill="#f0b5b5"/>
<polygon points="10.5,4.5 16,7.2 10.5,10 5,7.2" fill="#e53935"/><polygon points="5,7.2 10.5,10 10.5,16 5,13.3" fill="#b71c1c"/><polygon points="16,7.2 10.5,10 10.5,16 16,13.3" fill="#d32f2f"/>
</svg><div class="c" style="left:55.5px">default-dvm</div><div class="c" style="left:213.8px">fedora-38-xfce</div><div class="c" style="left:310.6px">default (sys-firewall)</div><div class="c" style="left:395px">97.54 MiB</div><div class="c" style="left:515.8px">n/a</div><div class="chk" style="left:576px;top:5.5px;"><svg width="9" height="9" viewBox="0 0 9 9"><path d="M1.6 4.6 L3.6 7.4 L7.6 1.2" fill="none" stroke="#111" stroke-width="1.5" stroke-linecap="round" stroke-linejoin="round"/></svg></div><div class="c" style="left:698px">default (default-dvm)</div></div><div class="row" style="top:227.00px"><svg class="a" style="left:3px;top:5px" width="14" height="12" viewBox="0 0 14 12">
<rect x="5.5" y="0.5" width="8" height="5.5" fill="#2e6db4"/><rect x="6.3" y="1.3" width="6.4" height="3.5" fill="#3f8ee0"/>
<rect x="0.5" y="3" width="8" height="5.5" fill="#1f5aa8"/><rect x="1.3" y="3.8" width="6.4" height="3.7" fill="#3b86d8"/>
<rect x="3.5" y="9" width="2" height="1.5" fill="#222"/><rect x="9.5" y="6.5" width="2" height="1.3" fill="#222"/>
<rect x="2" y="10.4" width="5" height="1" fill="#333"/>
</svg><svg class="a" style="left:29px;top:3px" width="16" height="16" viewBox="0 0 16 16">
<polygon points="5,0.5 10,3 5,5.5 0,3" fill="#cfcfcf"/><polygon points="0,3 5,5.5 5,11 0,8.5" fill="#bdbdbd"/><polygon points="10,3 5,5.5 5,11 10,8.5" fill="#c8c8c8"/>
<polygon points="10.5,4.5 16,7.2 10.5,10 5,7.2" fill="#5a5a5a"/><polygon points="5,7.2 10.5,10 10.5,16 5,13.3" fill="#262626"/><polygon points="16,7.2 10.5,10 10.5,16 16,13.3" fill="#404040"/>
</svg><div class="c" style="left:55.5px">Fedora-Test-Template</div><div class="c it" style="left:213.8px">TemplateVM</div><div class="c" style="left:310.6px">default (n/a)</div><div class="c" style="left:395px">7635.76 MiB</div><div class="c" style="left:515.8px">n/a</div><div class="chk" style="left:576px;top:5.5px;"><svg width="9" height="9" viewBox="0 0 9 9"><path d="M1.6 4.6 L3.6 7.4 L7.6 1.2" fill="none" stroke="#111" stroke-width="1.5" stroke-linecap="round" stroke-linejoin="round"/></svg></div><div class="c" style="left:698px">default (default-dvm)</div></div><div class="row alt" style="top:248.30px"><svg class="a" style="left:3px;top:4px" width="14" height="14" viewBox="0 0 14 14">
<rect x="1" y="1" width="11" height="1.2" fill="#c9c9c9"/>
<circle cx="6" cy="7" r="2.8" fill="none" stroke="#b0b0b0" stroke-width="1.1"/>
<path d="M8.5 9.5 L10.5 11.5" stroke="#b8b8b8" stroke-width="1.1"/>
</svg><svg class="a" style="left:29.5px;top:2.8px" width="15" height="16" viewBox="0 0 15 17">
<polygon points="1,3.6 6.7,0.9 13.9,4.6 7.4,7.6" fill="#a64dc4" stroke="#a64dc4" stroke-width="0.6" stroke-linejoin="round"/>
<polygon points="1,3.6 7.4,7.6 7.2,16.4 1,12.8" fill="#6a1b8a" stroke="#6a1b8a" stroke-width="0.6" stroke-linejoin="round"/>
<polygon points="7.4,7.6 13.9,4.6 13.9,12.3 7.2,16.4" fill="#8e3bab" stroke="#8e3bab" stroke-width="0.6" stroke-linejoin="round"/>
</svg><div class="c" style="left:55.5px">test</div><div class="c" style="left:213.8px">whonix-test</div><div class="c" style="left:310.6px">sys-whonix</div><div class="c" style="left:395px">1824.45 MiB</div><div class="c" style="left:515.8px">n/a</div><div class="chk" style="left:576px;top:5.5px;"><svg width="9" height="9" viewBox="0 0 9 9"><path d="M1.6 4.6 L3.6 7.4 L7.6 1.2" fill="none" stroke="#111" stroke-width="1.5" stroke-linecap="round" stroke-linejoin="round"/></svg></div><div class="c" style="left:698px">default (default-dvm)</div></div><div class="row" style="top:269.60px"><svg class="a" style="left:3px;top:4px" width="14" height="14" viewBox="0 0 14 14">
<rect x="1" y="1" width="11" height="1.2" fill="#c9c9c9"/>
<circle cx="6" cy="7" r="2.8" fill="none" stroke="#b0b0b0" stroke-width="1.1"/>
<path d="M8.5 9.5 L10.5 11.5" stroke="#b8b8b8" stroke-width="1.1"/>
</svg><svg class="a" style="left:29.5px;top:2.8px" width="15" height="16" viewBox="0 0 15 17">
<polygon points="1,3.6 6.7,0.9 13.9,4.6 7.4,7.6" fill="#5a5a5a" stroke="#5a5a5a" stroke-width="0.6" stroke-linejoin="round"/>
<polygon points="1,3.6 7.4,7.6 7.2,16.4 1,12.8" fill="#1e1e1e" stroke="#1e1e1e" stroke-width="0.6" stroke-linejoin="round"/>
<polygon points="7.4,7.6 13.9,4.6 13.9,12.3 7.2,16.4" fill="#3c3c3c" stroke="#3c3c3c" stroke-width="0.6" stroke-linejoin="round"/>
</svg><div class="c" style="left:55.5px">vault</div><div class="c" style="left:213.8px">fedora-38-xfce</div><div class="c" style="left:310.6px">n/a</div><div class="c" style="left:395px">0.0 MiB</div><div class="c" style="left:515.8px">n/a</div><div class="chk" style="left:576px;top:5.5px;"><svg width="9" height="9" viewBox="0 0 9 9"><path d="M1.6 4.6 L3.6 7.4 L7.6 1.2" fill="none" stroke="#111" stroke-width="1.5" stroke-linecap="round" stroke-linejoin="round"/></svg></div><div class="c" style="left:698px">default (default-dvm)</div></div><div class="row alt" style="top:290.90px"><svg class="a" style="left:3px;top:5px" width="14" height="12" viewBox="0 0 14 12">
<rect x="5.5" y="0.5" width="8" height="5.5" fill="#2e6db4"/><rect x="6.3" y="1.3" width="6.4" height="3.5" fill="#3f8ee0"/>
<rect x="0.5" y="3" width="8" height="5.5" fill="#1f5aa8"/><rect x="1.3" y="3.8" width="6.4" height="3.7" fill="#3b86d8"/>
<rect x="3.5" y="9" width="2" height="1.5" fill="#222"/><rect x="9.5" y="6.5" width="2" height="1.3" fill="#222"/>
<rect x="2" y="10.4" width="5" height="1" fill="#333"/>
</svg><svg class="a" style="left:29px;top:3px" width="16" height="16" viewBox="0 0 16 16">
<polygon points="5,0.5 10,3 5,5.5 0,3" fill="#cfcfcf"/><polygon points="0,3 5,5.5 5,11 0,8.5" fill="#bdbdbd"/><polygon points="10,3 5,5.5 5,11 10,8.5" fill="#c8c8c8"/>
<polygon points="10.5,4.5 16,7.2 10.5,10 5,7.2" fill="#5a5a5a"/><polygon points="5,7.2 10.5,10 10.5,16 5,13.3" fill="#262626"/><polygon points="16,7.2 10.5,10 10.5,16 16,13.3" fill="#404040"/>
</svg><div class="c" style="left:55.5px">whonix-workstation-17</div><div class="c it" style="left:213.8px">TemplateVM</div><div class="c" style="left:310.6px">default (n/a)</div><div class="c" style="left:395px">3166.52 MiB</div><div class="c" style="left:515.8px">n/a</div><div class="chk" style="left:576px;top:5.5px;"><svg width="9" height="9" viewBox="0 0 9 9"><path d="M1.6 4.6 L3.6 7.4 L7.6 1.2" fill="none" stroke="#111" stroke-width="1.5" stroke-linecap="round" stroke-linejoin="round"/></svg></div><div class="c" style="left:698px">default (default-dvm)</div></div><div class="row" style="top:312.20px"><svg class="a" style="left:3px;top:4px" width="14" height="14" viewBox="0 0 14 14">
<rect x="1" y="1" width="11" height="1.2" fill="#c9c9c9"/>
<circle cx="6" cy="7" r="2.8" fill="none" stroke="#b0b0b0" stroke-width="1.1"/>
<path d="M8.5 9.5 L10.5 11.5" stroke="#b8b8b8" stroke-width="1.1"/>
</svg><svg class="a" style="left:29px;top:3px" width="16" height="16" viewBox="0 0 16 16">
<polygon points="5,0.5 10,3 5,5.5 0,3" fill="#f5c2c2"/><polygon points="0,3 5,5.5 5,11 0,8.5" fill="#eeaaaa"/><polygon points="10,3 5,5.5 5,11 10,8.5" fill="#f0b5b5"/>
<polygon points="10.5,4.5 16,7.2 10.5,10 5,7.2" fill="#e53935"/><polygon points="5,7.2 10.5,10 10.5,16 5,13.3" fill="#b71c1c"/><polygon points="16,7.2 10.5,10 10.5,16 16,13.3" fill="#d32f2f"/>
</svg><div class="c" style="left:55.5px">whonix-workstation-17-dvm</div><div class="c" style="left:213.8px">whonix-workstation-17</div><div class="c" style="left:310.6px">sys-whonix</div><div class="c" style="left:395px">0.0 MiB</div><div class="c" style="left:515.8px">n/a</div><div class="chk" style="left:576px;top:5.5px;"><svg width="9" height="9" viewBox="0 0 9 9"><path d="M1.6 4.6 L3.6 7.4 L7.6 1.2" fill="none" stroke="#111" stroke-width="1.5" stroke-linecap="round" stroke-linejoin="round"/></svg></div><div class="c" style="left:698px">default (default-dvm)</div></div><div class="row sel" style="top:333.50px"><svg class="a" style="left:3px;top:4px" width="14" height="14" viewBox="0 0 14 14"><rect x="0" y="0" width="14" height="13" fill="#bfe0f5"/>
<rect x="1" y="1" width="11" height="1.2" fill="#c9c9c9"/>
<circle cx="6" cy="7" r="2.8" fill="none" stroke="#b0b0b0" stroke-width="1.1"/>
<path d="M8.5 9.5 L10.5 11.5" stroke="#b8b8b8" stroke-width="1.1"/>
</svg><svg class="a" style="left:29.5px;top:2.8px" width="15" height="16" viewBox="0 0 15 17">
<polygon points="1,3.6 6.7,0.9 13.9,4.6 7.4,7.6" fill="#4f8fe8" stroke="#4f8fe8" stroke-width="0.6" stroke-linejoin="round"/>
<polygon points="1,3.6 7.4,7.6 7.2,16.4 1,12.8" fill="#1a3fa0" stroke="#1a3fa0" stroke-width="0.6" stroke-linejoin="round"/>
<polygon points="7.4,7.6 13.9,4.6 13.9,12.3 7.2,16.4" fill="#3a6fd0" stroke="#3a6fd0" stroke-width="0.6" stroke-linejoin="round"/>
</svg><div class="c" style="left:55.5px">work</div><div class="c" style="left:213.8px">fedora-38-xfce</div><div class="c" style="left:310.6px">sys-firewall</div><div class="c" style="left:395px">97.55 MiB</div><div class="c" style="left:515.8px">10.137.0.8</div><div class="chk" style="left:576px;top:5.5px;"><svg width="9" height="9" viewBox="0 0 9 9"><path d="M1.6 4.6 L3.6 7.4 L7.6 1.2" fill="none" stroke="#111" stroke-width="1.5" stroke-linecap="round" stroke-linejoin="round"/></svg></div><div class="c" style="left:698px">default (default-dvm)</div></div><div class="row" style="top:354.80px"><svg class="a" style="left:3px;top:5px" width="14" height="12" viewBox="0 0 14 12">
<rect x="5.5" y="0.5" width="8" height="5.5" fill="#2e6db4"/><rect x="6.3" y="1.3" width="6.4" height="3.5" fill="#3f8ee0"/>
<rect x="0.5" y="3" width="8" height="5.5" fill="#1f5aa8"/><rect x="1.3" y="3.8" width="6.4" height="3.7" fill="#3b86d8"/>
<rect x="3.5" y="9" width="2" height="1.5" fill="#222"/><rect x="9.5" y="6.5" width="2" height="1.3" fill="#222"/>
<rect x="2" y="10.4" width="5" height="1" fill="#333"/>
</svg><svg class="a" style="left:29px;top:3px" width="16" height="16" viewBox="0 0 16 16">
<polygon points="5,0.5 10,3 5,5.5 0,3" fill="#cfcfcf"/><polygon points="0,3 5,5.5 5,11 0,8.5" fill="#bdbdbd"/><polygon points="10,3 5,5.5 5,11 10,8.5" fill="#c8c8c8"/>
<polygon points="10.5,4.5 16,7.2 10.5,10 5,7.2" fill="#5a5a5a"/><polygon points="5,7.2 10.5,10 10.5,16 5,13.3" fill="#262626"/><polygon points="16,7.2 10.5,10 10.5,16 16,13.3" fill="#404040"/>
</svg><div class="c" style="left:55.5px">fedora-38-xfce</div><svg class="a" style="left:186px;top:5.5px" width="10" height="10" viewBox="0 0 10 10">
<path d="M5 0.5 V6" stroke="#3fa23f" stroke-width="2"/><polygon points="2,4.5 8,4.5 5,7.5" fill="#3fa23f"/><rect x="1" y="8" width="8" height="1.3" fill="#8fbf8f"/></svg><div class="c it" style="left:213.8px">TemplateVM</div><div class="c" style="left:310.6px">default (n/a)</div><div class="c" style="left:395px">5525.66 MiB</div><div class="c" style="left:515.8px">n/a</div><div class="chk" style="left:576px;top:5.5px;"><svg width="9" height="9" viewBox="0 0 9 9"><path d="M1.6 4.6 L3.6 7.4 L7.6 1.2" fill="none" stroke="#111" stroke-width="1.5" stroke-linecap="round" stroke-linejoin="round"/></svg></div><div class="c" style="left:698px">default (default-dvm)</div></div><div class="row alt" style="top:376.10px"><svg class="a" style="left:3px;top:5px" width="14" height="12" viewBox="0 0 14 12">
<rect x="5.5" y="0.5" width="8" height="5.5" fill="#2e6db4"/><rect x="6.3" y="1.3" width="6.4" height="3.5" fill="#3f8ee0"/>
<rect x="0.5" y="3" width="8" height="5.5" fill="#1f5aa8"/><rect x="1.3" y="3.8" width="6.4" height="3.7" fill="#3b86d8"/>
<rect x="3.5" y="9" width="2" height="1.5" fill="#222"/><rect x="9.5" y="6.5" width="2" height="1.3" fill="#222"/>
<rect x="2" y="10.4" width="5" height="1" fill="#333"/>
</svg><svg class="a" style="left:29px;top:3px" width="16" height="16" viewBox="0 0 16 16">
<polygon points="5,0.5 10,3 5,5.5 0,3" fill="#cfcfcf"/><polygon points="0,3 5,5.5 5,11 0,8.5" fill="#bdbdbd"/><polygon points="10,3 5,5.5 5,11 10,8.5" fill="#c8c8c8"/>
<polygon points="10.5,4.5 16,7.2 10.5,10 5,7.2" fill="#5a5a5a"/><polygon points="5,7.2 10.5,10 10.5,16 5,13.3" fill="#262626"/><polygon points="16,7.2 10.5,10 10.5,16 16,13.3" fill="#404040"/>
</svg><div class="c" style="left:55.5px">whonix-gateway-17</div><svg class="a" style="left:186px;top:5.5px" width="10" height="10" viewBox="0 0 10 10">
<path d="M5 0.5 V6" stroke="#3fa23f" stroke-width="2"/><polygon points="2,4.5 8,4.5 5,7.5" fill="#3fa23f"/><rect x="1" y="8" width="8" height="1.3" fill="#8fbf8f"/></svg><div class="c it" style="left:213.8px">TemplateVM</div><div class="c" style="left:310.6px">default (n/a)</div><div class="c" style="left:395px">2074.31 MiB</div><div class="c" style="left:515.8px">n/a</div><div class="chk" style="left:576px;top:5.5px;"><svg width="9" height="9" viewBox="0 0 9 9"><path d="M1.6 4.6 L3.6 7.4 L7.6 1.2" fill="none" stroke="#111" stroke-width="1.5" stroke-linecap="round" stroke-linejoin="round"/></svg></div><div class="c" style="left:698px">default (default-dvm)</div></div><div class="row" style="top:397.40px"><svg class="a" style="left:3px;top:5px" width="14" height="12" viewBox="0 0 14 12">
<rect x="5.5" y="0.5" width="8" height="5.5" fill="#2e6db4"/><rect x="6.3" y="1.3" width="6.4" height="3.5" fill="#3f8ee0"/>
<rect x="0.5" y="3" width="8" height="5.5" fill="#1f5aa8"/><rect x="1.3" y="3.8" width="6.4" height="3.7" fill="#3b86d8"/>
<rect x="3.5" y="9" width="2" height="1.5" fill="#222"/><rect x="9.5" y="6.5" width="2" height="1.3" fill="#222"/>
<rect x="2" y="10.4" width="5" height="1" fill="#333"/>
</svg><svg class="a" style="left:29px;top:3px" width="16" height="16" viewBox="0 0 16 16">
<polygon points="5,0.5 10,3 5,5.5 0,3" fill="#f5c2c2"/><polygon points="0,3 5,5.5 5,11 0,8.5" fill="#eeaaaa"/><polygon points="10,3 5,5.5 5,11 10,8.5" fill="#f0b5b5"/>
<polygon points="10.5,4.5 16,7.2 10.5,10 5,7.2" fill="#e53935"/><polygon points="5,7.2 10.5,10 10.5,16 5,13.3" fill="#b71c1c"/><polygon points="16,7.2 10.5,10 10.5,16 16,13.3" fill="#d32f2f"/>
</svg><div class="c" style="left:55.5px">whonix-test</div><svg class="a" style="left:186px;top:5.5px" width="10" height="10" viewBox="0 0 10 10">
<path d="M5 0.5 V6" stroke="#3fa23f" stroke-width="2"/><polygon points="2,4.5 8,4.5 5,7.5" fill="#3fa23f"/><rect x="1" y="8" width="8" height="1.3" fill="#8fbf8f"/></svg><div class="c it" style="left:213.8px">TemplateVM</div><div class="c" style="left:310.6px">default (n/a)</div><div class="c" style="left:395px">3526.11 MiB</div><div class="c" style="left:515.8px">n/a</div><div class="chk" style="left:576px;top:5.5px;"><svg width="9" height="9" viewBox="0 0 9 9"><path d="M1.6 4.6 L3.6 7.4 L7.6 1.2" fill="none" stroke="#111" stroke-width="1.5" stroke-linecap="round" stroke-linejoin="round"/></svg></div><div class="c" style="left:698px">default (default-dvm)</div></div></div><div class="a" style="left:17.5px;top:644px;width:872px;height:12px;background:#f3f3f3;border:1px solid #cfcfcf"></div><div class="a" style="left:17.5px;top:644px;width:11px;height:12px;border-right:1px solid #cfcfcf"></div><svg class="a" style="left:20px;top:647px" width="5" height="6"><polygon points="4,0 4,6 0.5,3" fill="#333"/></svg>
<div class="a" style="left:493px;top:310px;width:597.5px;height:490.5px;background:#fbfbfb;border-radius:4px 4px 0 0;box-shadow:0 0 0 1px #000"></div><div class="a" style="left:493px;top:310px;width:597px;height:16px;border-radius:3px 3px 0 0;background:linear-gradient(#c9cdc9,#f2f2f2)"></div><div class="a" style="left:496.5px;top:313px;width:10px;height:10px;border:1px solid #222;border-radius:1px;background:#f4f4f4"></div><svg class="a" style="left:498.5px;top:315px" width="6" height="6" viewBox="0 0 6 6"><rect x="0.5" y="0.5" width="5" height="1" fill="#222"/><polygon points="0.5,2.3 5.5,2.3 3,5" fill="#222"/></svg><div class="a" style="left:681.3px;width:200px;text-align:center;top:312.5px;font-size:9px;font-weight:bold;color:#222">[Dom0] Settings: work</div><div class="a" style="left:1054px;top:313px;width:10px;height:10px;border:1px solid #333;border-radius:1px;background:#f6f6f6"></div><div class="a" style="left:1065.5px;top:313px;width:10px;height:10px;border:1px solid #333;border-radius:1px;background:#f6f6f6"></div><div class="a" style="left:1077px;top:313px;width:10px;height:10px;border:1px solid #6e2a2a;border-radius:1px;background:#f6f6f6"></div><svg class="a" style="left:1056px;top:315px" width="6" height="6"><polygon points="3,1 5.5,4 0.5,4" fill="#222"/><rect x="0.5" y="4.5" width="5" height="1" fill="#222"/></svg><div class="a" style="left:1067.5px;top:315px;width:6px;height:6px;border:1px solid #222;border-top-width:2px"></div><svg class="a" style="left:1078px;top:314px" width="8" height="8"><rect x="0" y="0" width="8" height="8" fill="#d98a95"/><path d="M1 1 L7 7 M7 1 L1 7" stroke="#fff" stroke-width="1.6"/></svg><div class="a" style="left:495px;top:326px;width:594.5px;height:473px;background:#efefef;border:1px solid #111;border-right-color:#9a9a9a;border-bottom-color:#9a9a9a"></div><div class="a" style="left:503.5px;top:354px;width:577.5px;height:414px;background:#f9f9f9;border:1px solid #cdcdcd;border-radius:0 2px 2px 2px"></div><div class="a" style="left:503.75px;top:334.5px;width:39.25px;height:20.5px;background:#f9f9f9;border:1px solid #cdcdcd;border-bottom:none;border-radius:2px 2px 0 0"></div><div class="a" style="left:542.5px;top:336.25px;width:55.75px;height:18.25px;background:linear-gradient(#ececec,#e2e2e2);border:1px solid #cdcdcd;border-left:none;border-radius:0 2px 0 0"></div><div class="a" style="left:598.25px;top:336.25px;width:83.75px;height:18.25px;background:linear-gradient(#ececec,#e2e2e2);border:1px solid #cdcdcd;border-left:none;border-radius:0 2px 0 0"></div><div class="a" style="left:682px;top:336.25px;width:62.25px;height:18.25px;background:linear-gradient(#ececec,#e2e2e2);border:1px solid #cdcdcd;border-left:none;border-radius:0 2px 0 0"></div><div class="a" style="left:744.25px;top:336.25px;width:80.25px;height:18.25px;background:linear-gradient(#ececec,#e2e2e2);border:1px solid #cdcdcd;border-left:none;border-radius:0 2px 0 0"></div><div class="a" style="left:824.5px;top:336.25px;width:49.25px;height:18.25px;background:linear-gradient(#ececec,#e2e2e2);border:1px solid #cdcdcd;border-left:none;border-radius:0 2px 0 0"></div><div class="lbl" style="left:512.5px;top:339.70px;line-height:11px;">Basic</div><div class="lbl" style="left:550.75px;top:341.10px;line-height:11px;">Advanced</div><div class="lbl" style="left:621.75px;top:341.10px;line-height:11px;">Firewall rules</div><div class="lbl" style="left:705px;top:341.10px;line-height:11px;">Devices</div><div class="lbl" style="left:766.75px;top:341.10px;line-height:11px;">Applications</div><div class="lbl" style="left:832.5px;top:341.10px;line-height:11px;">Services</div><svg class="a" style="left:607.5px;top:340.5px" width="11" height="9" viewBox="0 0 11 9"><rect x="0" y="0" width="11" height="9" fill="#c0582a"/><rect x="0" y="0" width="11" height="2" fill="#6b2a10"/><rect x="0" y="7.5" width="11" height="1.5" fill="#8a3a18"/></svg><svg class="a" style="left:691px;top:339.5px" width="10" height="11" viewBox="0 0 10 11"><rect x="0.5" y="3" width="9" height="7.5" fill="#f2f2f2" stroke="#333"/><path d="M2 3 V1 H8 V3" stroke="#333" fill="none"/><circle cx="5" cy="6.5" r="2" fill="none" stroke="#333"/></svg><svg class="a" style="left:752px;top:339.5px" width="12" height="11" viewBox="0 0 12 11"><polygon points="0.5,5.5 5,2 7,4 3,8" fill="#e8542a"/><polygon points="3,8 7,4 9.5,6.5 5.5,10.5" fill="#4cb84c"/><polygon points="5,2 8.5,0.3 11,3 7,4" fill="#4a7fd8"/><polygon points="9.5,6.5 11.5,8 8,10.5 5.5,10.5" fill="#f2c12e"/></svg><div class="lbl" style="left:511.75px;top:363.60px;line-height:11px;">Settings</div><div class="grp" style="left:512.5px;top:376.25px;width:560px;height:144px"></div><div class="lbl" style="left:520px;top:392.20px;line-height:11px;">Name &amp; label<span style="color:#e02424">*</span>:</div><div class="a" style="left:585px;top:389.25px;width:325.5px;height:16.5px;background:#ebebeb;border:1px solid #cfcfcf;border-radius:2px"></div><div class="lbl" style="left:588.5px;top:392.40px;line-height:11px;color:#bdbdbd;">work</div><div class="btn" style="left:915px;top:388.7px;width:57px;height:17px;line-height:15px">Rename</div><div class="combo" style="left:976px;top:388.7px;width:88.5px;height:17px"></div><svg class="a" style="left:979.5px;top:390.5px" width="13" height="14" viewBox="0 0 15 17">
<polygon points="1,3.6 6.7,0.9 13.9,4.6 7.4,7.6" fill="#5b95ea" stroke="#5b95ea" stroke-width="0.6" stroke-linejoin="round"/>
<polygon points="1,3.6 7.4,7.6 7.2,16.4 1,12.8" fill="#16309a" stroke="#16309a" stroke-width="0.6" stroke-linejoin="round"/>
<polygon points="7.4,7.6 13.9,4.6 13.9,12.3 7.2,16.4" fill="#3f73d6" stroke="#3f73d6" stroke-width="0.6" stroke-linejoin="round"/>
</svg><div class="lbl" style="left:993px;top:392.20px;line-height:11px;">blue (current)</div><div class="arr" style="left:1053px;top:395.5px;border-top-color:#555;border-left-width:3px;border-right-width:3px;border-top-width:3.5px"></div><div class="lbl" style="left:520px;top:414.20px;line-height:11px;">Template<span style="color:#e02424">*</span>:</div><div class="combo" style="left:585px;top:410.9px;width:387px;height:17px"></div><div class="lbl" style="left:589px;top:414.20px;line-height:11px;">fedora-38-xfce (current)</div><div class="arr" style="left:960px;top:417.7px;border-top-color:#555;border-left-width:3px;border-right-width:3px;border-top-width:3.5px"></div><div class="lbl" style="left:520px;top:436.40px;line-height:11px;">Net qube:</div><div class="combo" style="left:585px;top:433.1px;width:387px;height:17px"></div><div class="lbl" style="left:589px;top:436.40px;line-height:11px;">sys-firewall (current)</div><div class="arr" style="left:960px;top:440px;border-top-color:#555;border-left-width:3px;border-right-width:3px;border-top-width:3.5px"></div><div class="chk" style="left:520px;top:457.4px;background:#f0f0f0;border-color:#d6d6d6"></div><div class="lbl" style="left:533.4px;top:457.40px;line-height:11px;color:#bdbdbd;">Shut down when idle (unavailable: package qubes-app-shutdown-idle missing in the template)</div><div class="chk" style="left:520px;top:478px;"><svg width="9" height="9" viewBox="0 0 9 9"><path d="M1.6 4.6 L3.6 7.4 L7.6 1.2" fill="none" stroke="#111" stroke-width="1.5" stroke-linecap="round" stroke-linejoin="round"/></svg></div><div class="lbl" style="left:533.4px;top:477.90px;line-height:11px;">Include in backups by default</div><div class="chk" style="left:520px;top:498.6px"></div><div class="lbl" style="left:533.4px;top:498.50px;line-height:11px;">Start qube automatically on boot</div><div class="lbl" style="left:511.6px;top:526.60px;line-height:11px;">General</div><div class="lbl" style="left:794.4px;top:526.60px;line-height:11px;">Net qube</div><div class="grp" style="left:512.2px;top:540.3px;width:277.5px;height:80.5px"></div><div class="grp" style="left:795.3px;top:540.3px;width:277.5px;height:80.5px"></div><div class="lbl" style="left:520px;top:552.90px;line-height:11px;">Type:</div><div class="lbl" style="left:593px;top:552.90px;line-height:11px;">AppVM</div><div class="lbl" style="left:520px;top:569.00px;line-height:11px;">Installed by RPM:</div><div class="lbl" style="left:593px;top:569.00px;line-height:11px;">No</div><div class="lbl" style="left:802.8px;top:552.90px;line-height:11px;">IP:</div><div class="lbl" style="left:855.9px;top:552.90px;line-height:11px;">10.137.0.8</div><div class="lbl" style="left:802.8px;top:569.30px;line-height:11px;">Netmask:</div><div class="lbl" style="left:855.9px;top:569.30px;line-height:11px;">255.255.255.255</div><div class="lbl" style="left:802.8px;top:585.60px;line-height:11px;">Gateway:</div><div class="lbl" style="left:855.9px;top:585.60px;line-height:11px;">10.138.14.240</div><div class="lbl" style="left:802.8px;top:601.70px;line-height:11px;">Virtual DNS:</div><div class="lbl" style="left:855.9px;top:601.70px;line-height:11px;">10.139.1.1, 10.139.1.2</div><div class="lbl" style="left:511.6px;top:626.90px;line-height:11px;">Disk storage</div><div class="grp" style="left:512.2px;top:640.6px;width:560px;height:60.6px"></div><div class="lbl" style="left:520px;top:656.40px;line-height:11px;">Private storage max size:</div><div class="a" style="left:794.4px;top:653.3px;width:270px;height:16.5px;background:#fff;border:1px solid #c4c4c4;border-radius:2px"></div><div class="a" style="left:1054.5px;top:654px;width:9px;height:15px;border-left:1px solid #d6d6d6"></div><svg class="a" style="left:1056px;top:655.5px" width="7" height="12"><polygon points="3.5,1 6,4 1,4" fill="#444"/><polygon points="3.5,11 6,8 1,8" fill="#aaa"/></svg><div class="lbl" style="left:794px;width:255px;text-align:right;top:655.7px;line-height:11px">2.0 GB</div><div class="lbl" style="left:520px;top:679.20px;line-height:11px;color:#c2c2c2;">System storage max size:</div><div class="a" style="left:794.4px;top:676.1px;width:270px;height:16.5px;background:#ececec;border:1px solid #d2d2d2;border-radius:2px"></div><div class="a" style="left:1054.5px;top:677px;width:9px;height:15px;border-left:1px solid #dcdcdc"></div><svg class="a" style="left:1056px;top:678.5px" width="7" height="12"><polygon points="3.5,1 6,4 1,4" fill="#c6c6c6"/><polygon points="3.5,11 6,8 1,8" fill="#c6c6c6"/></svg><div class="lbl" style="left:794px;width:255px;text-align:right;top:678.5px;line-height:11px;color:#c6c6c6">20.0 GB</div><div class="lbl" style="left:512px;top:707.90px;line-height:11px;"><span style="color:#e02424">*</span> Cannot be changed while the qube is running</div><div class="btn" style="left:794.4px;top:706.3px;width:278.6px;height:13.5px;line-height:13px;border-color:#c8353b;background:linear-gradient(#f26a70,#f9a3a6)">Delete qube</div><div class="btn" style="left:794.4px;top:724.4px;width:278.6px;height:17px;line-height:15px">Clone qube</div><div class="btn" style="left:902.3px;top:773.2px;width:56.2px;height:17.4px;line-height:17px;border-color:#7b9bc0;background:linear-gradient(#f3f6fa,#e2e8f0)"><span style="padding-left:12px">OK</span></div><svg class="a" style="left:917px;top:775.5px" width="12" height="12" viewBox="0 0 12 12"><path d="M2 7 L6 3 V5.5 H10 V9 H6 V11.5 Z" fill="#6c8f3c" transform="rotate(-30 6 7)"/></svg><div class="btn" style="left:963px;top:773.2px;width:56.5px;height:17.4px;line-height:17px"><span style="padding-left:12px">Cancel</span></div><svg class="a" style="left:970px;top:776px" width="10" height="11" viewBox="0 0 10 11"><path d="M1.5 1 L8.5 10 M8.5 1 L1.5 10" stroke="#c42a2a" stroke-width="2.2"/></svg><div class="btn" style="left:1024.2px;top:773.2px;width:56.4px;height:17.4px;line-height:17px"><span style="padding-left:12px">Apply</span></div><svg class="a" style="left:1032px;top:775px" width="11" height="12" viewBox="0 0 11 12"><path d="M1 7 L4 11 L10.5 1" stroke="#5a8a3a" stroke-width="2.2" fill="none"/></svg>
</div>
</body></html>
